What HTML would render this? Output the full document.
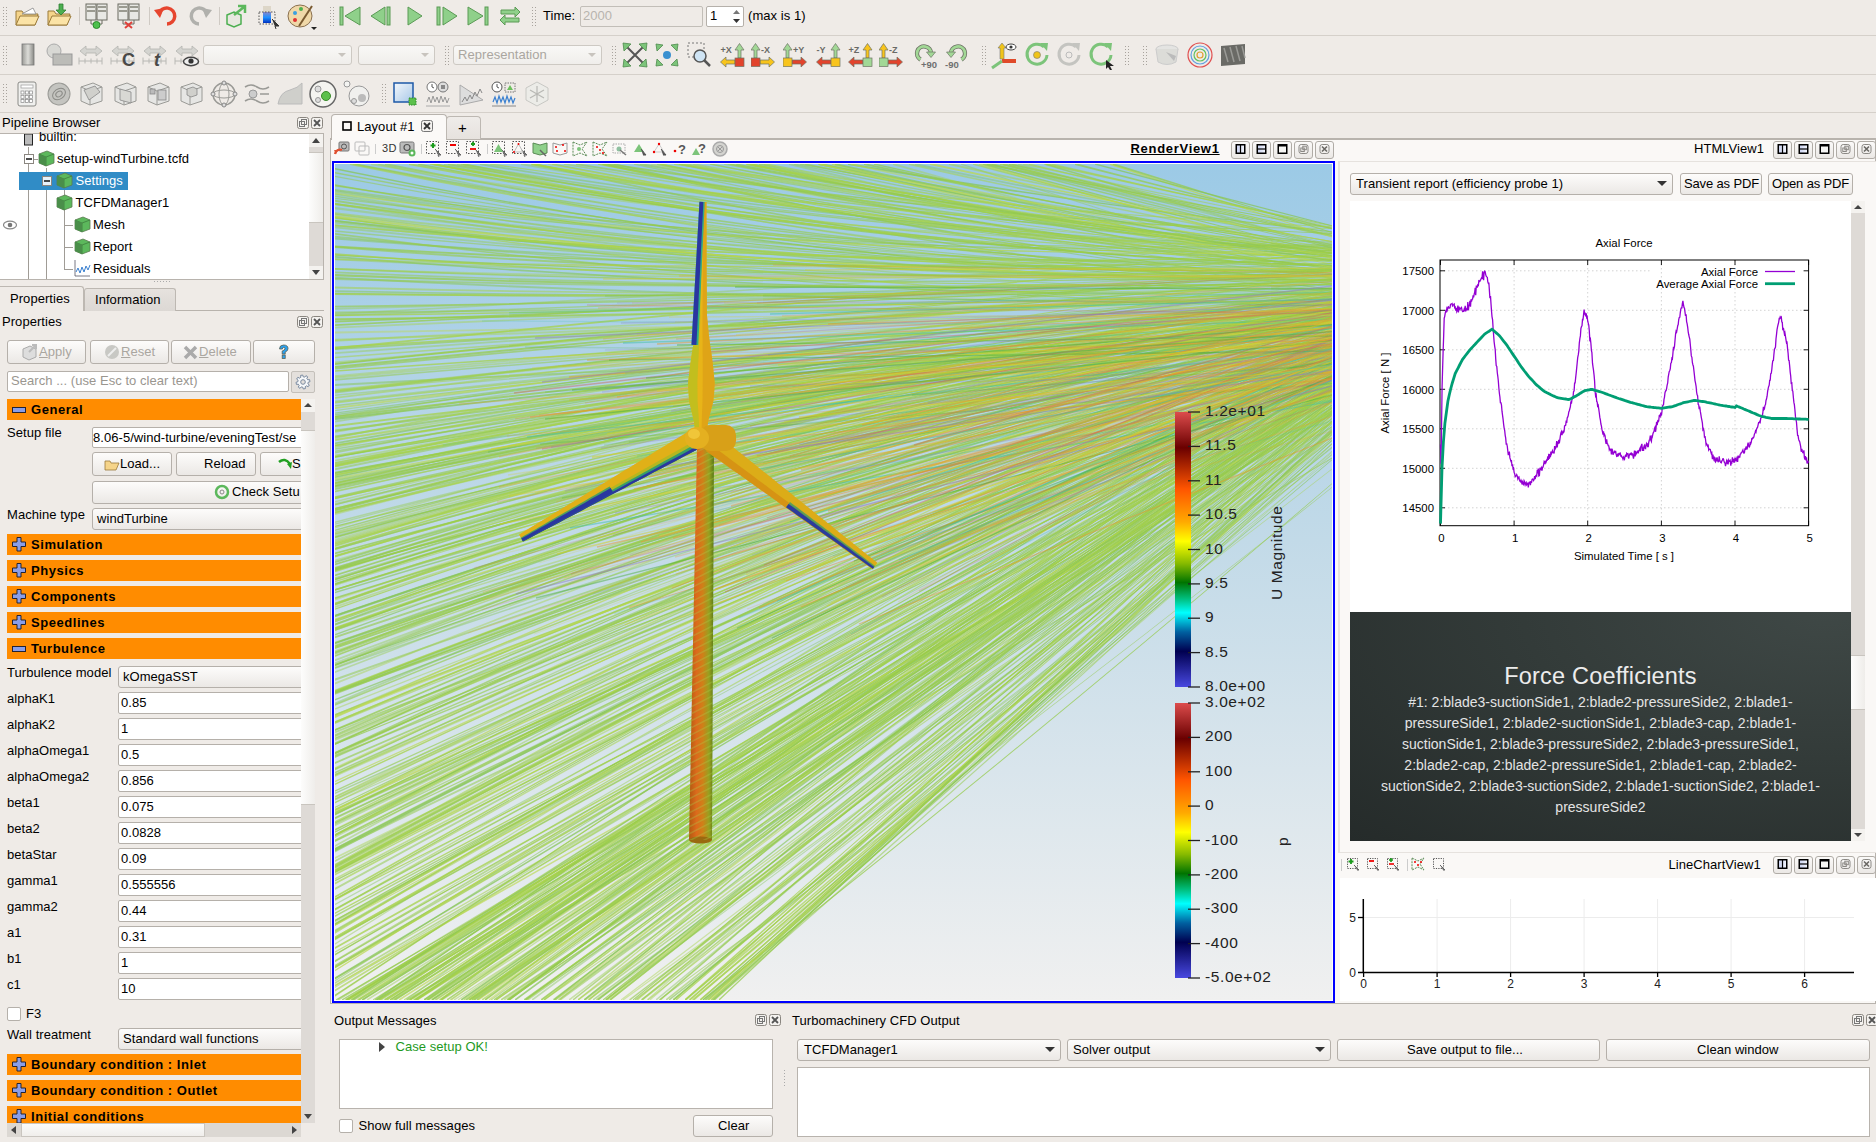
<!DOCTYPE html><html><head><meta charset="utf-8"><style>
html,body{margin:0;padding:0;}
body{width:1876px;height:1142px;position:relative;overflow:hidden;background:#efebe7;font-family:"Liberation Sans",sans-serif;}
.t{position:absolute;white-space:nowrap;line-height:1.2;font-family:"Liberation Sans",sans-serif;}
svg{display:block;}
</style></head><body>

<div style="position:absolute;left:0px;top:35px;width:1876px;height:1px;background:#d5d0ca;"></div>
<div style="position:absolute;left:0px;top:74px;width:1876px;height:1px;background:#d5d0ca;"></div>
<div style="position:absolute;left:0px;top:112px;width:1876px;height:1px;background:#d5d0ca;"></div>
<svg style="position:absolute;left:13px;top:3px;" width="28" height="26" viewBox="0 0 28 26"><path d="M3 8 L3 22 L22 22 L25 11 L11 11 L9 8 Z" fill="#f5d48a" stroke="#9a7a3a" stroke-width="1"/><path d="M7 13 L26 13 L22 22 L3 22 Z" fill="#fbe3a6" stroke="#9a7a3a" stroke-width="1"/><path d="M9 11 L20 5 L23 11 Z" fill="#fff" stroke="#888" stroke-width="0.8"/></svg>
<svg style="position:absolute;left:45px;top:3px;" width="28" height="26" viewBox="0 0 28 26"><path d="M3 8 L3 22 L22 22 L25 11 L11 11 L9 8 Z" fill="#f5d48a" stroke="#9a7a3a" stroke-width="1"/><path d="M7 13 L26 13 L22 22 L3 22 Z" fill="#fbe3a6" stroke="#9a7a3a" stroke-width="1"/><path d="M14 1 L14 7 L11 7 L16 12 L21 7 L18 7 L18 1 Z" fill="#4caf50" stroke="#2e7d32" stroke-width="0.8"/></svg>
<svg style="position:absolute;left:3px;top:6px;" width="4" height="20" viewBox="0 0 4 20"><rect x="0" y="1" width="1" height="1" fill="#a8a39d"/><rect x="0" y="4" width="1" height="1" fill="#a8a39d"/><rect x="0" y="7" width="1" height="1" fill="#a8a39d"/><rect x="0" y="10" width="1" height="1" fill="#a8a39d"/><rect x="0" y="13" width="1" height="1" fill="#a8a39d"/><rect x="0" y="16" width="1" height="1" fill="#a8a39d"/><rect x="0" y="19" width="1" height="1" fill="#a8a39d"/><rect x="3" y="1" width="1" height="1" fill="#a8a39d"/><rect x="3" y="4" width="1" height="1" fill="#a8a39d"/><rect x="3" y="7" width="1" height="1" fill="#a8a39d"/><rect x="3" y="10" width="1" height="1" fill="#a8a39d"/><rect x="3" y="13" width="1" height="1" fill="#a8a39d"/><rect x="3" y="16" width="1" height="1" fill="#a8a39d"/><rect x="3" y="19" width="1" height="1" fill="#a8a39d"/></svg>
<div style="position:absolute;left:79px;top:7px;width:1px;height:18px;background:#cfcac4;"></div>
<svg style="position:absolute;left:83px;top:2px;" width="28" height="28" viewBox="0 0 28 28"><rect x="3" y="2" width="10" height="16" fill="#e8e8e4" stroke="#6a6a60" stroke-width="1"/><rect x="4" y="4" width="8" height="2" fill="#9a9a90"/><rect x="4" y="8" width="8" height="2" fill="#9a9a90"/><rect x="14" y="2" width="10" height="16" fill="#e8e8e4" stroke="#6a6a60" stroke-width="1"/><rect x="15" y="4" width="8" height="2" fill="#9a9a90"/><rect x="15" y="8" width="8" height="2" fill="#9a9a90"/><path d="M8 18 L8 22 L19 22 L19 18" fill="none" stroke="#6a6a60"/><circle cx="13.5" cy="23" r="3.5" fill="#4cc04c" stroke="#2a8a2a"/></svg>
<svg style="position:absolute;left:115px;top:2px;" width="28" height="28" viewBox="0 0 28 28"><rect x="3" y="2" width="10" height="16" fill="#e8e8e4" stroke="#6a6a60" stroke-width="1"/><rect x="4" y="4" width="8" height="2" fill="#9a9a90"/><rect x="4" y="8" width="8" height="2" fill="#9a9a90"/><rect x="14" y="2" width="10" height="16" fill="#e8e8e4" stroke="#6a6a60" stroke-width="1"/><rect x="15" y="4" width="8" height="2" fill="#9a9a90"/><rect x="15" y="8" width="8" height="2" fill="#9a9a90"/><path d="M8 18 L8 22 L19 22 L19 18" fill="none" stroke="#6a6a60"/><path d="M10 20 L17 26 M17 20 L10 26" stroke="#e0403a" stroke-width="2"/></svg>
<div style="position:absolute;left:149px;top:7px;width:1px;height:18px;background:#cfcac4;"></div>
<svg style="position:absolute;left:153px;top:2px;" width="28" height="28" viewBox="0 0 28 28"><g><path d="M6 12 A8 8 0 1 1 14 22" fill="none" stroke="#e6452f" stroke-width="3.5"/><path d="M1 8 L11 6 L7 16 Z" fill="#e6452f"/></g></svg>
<svg style="position:absolute;left:185px;top:2px;" width="28" height="28" viewBox="0 0 28 28"><g transform="translate(28,0) scale(-1,1)"><path d="M6 12 A8 8 0 1 1 14 22" fill="none" stroke="#b0b0ac" stroke-width="3.5"/><path d="M1 8 L11 6 L7 16 Z" fill="#b0b0ac"/></g></svg>
<div style="position:absolute;left:219px;top:7px;width:1px;height:18px;background:#cfcac4;"></div>
<svg style="position:absolute;left:222px;top:3px;" width="28" height="26" viewBox="0 0 28 26"><path d="M5 12 L12 9 L19 12 L19 21 L12 24 L5 21 Z" fill="#e8e8e0" stroke="#4caf50" stroke-width="1.5"/><path d="M12 12 L22 4 M16 3 L23 3 L23 10" fill="none" stroke="#5cb85c" stroke-width="2.5"/></svg>
<svg style="position:absolute;left:254px;top:3px;" width="28" height="26" viewBox="0 0 28 26"><rect x="9" y="3" width="8" height="6" fill="#ddd6c8"/><rect x="9" y="9" width="8" height="11" fill="url(#cm)"/><defs><linearGradient id="cm" x1="0" y1="0" x2="0" y2="1"><stop offset="0" stop-color="#88c"/><stop offset="0.5" stop-color="#1e90ff"/><stop offset="1" stop-color="#0030c0"/></linearGradient></defs><rect x="5" y="9" width="16" height="12" fill="none" stroke="#555" stroke-dasharray="1.5,1.5"/><path d="M18 16 L25 23 L21 23 L22 26" fill="#333" stroke="#333"/></svg>
<svg style="position:absolute;left:286px;top:2px;" width="32" height="28" viewBox="0 0 32 28"><ellipse cx="14" cy="14" rx="12" ry="11" fill="#f0d8a8" stroke="#8a7050"/><circle cx="9" cy="11" r="2" fill="#3aa0e0"/><circle cx="15" cy="7" r="2" fill="#4cb050"/><circle cx="9" cy="18" r="2" fill="#e03030"/><path d="M13 24 L26 4" stroke="#7a5a30" stroke-width="2"/><path d="M25 25 L31 25 L28 28 Z" fill="#222"/></svg>
<svg style="position:absolute;left:330px;top:6px;" width="4" height="20" viewBox="0 0 4 20"><rect x="0" y="1" width="1" height="1" fill="#a8a39d"/><rect x="0" y="4" width="1" height="1" fill="#a8a39d"/><rect x="0" y="7" width="1" height="1" fill="#a8a39d"/><rect x="0" y="10" width="1" height="1" fill="#a8a39d"/><rect x="0" y="13" width="1" height="1" fill="#a8a39d"/><rect x="0" y="16" width="1" height="1" fill="#a8a39d"/><rect x="0" y="19" width="1" height="1" fill="#a8a39d"/><rect x="3" y="1" width="1" height="1" fill="#a8a39d"/><rect x="3" y="4" width="1" height="1" fill="#a8a39d"/><rect x="3" y="7" width="1" height="1" fill="#a8a39d"/><rect x="3" y="10" width="1" height="1" fill="#a8a39d"/><rect x="3" y="13" width="1" height="1" fill="#a8a39d"/><rect x="3" y="16" width="1" height="1" fill="#a8a39d"/><rect x="3" y="19" width="1" height="1" fill="#a8a39d"/></svg>
<svg style="position:absolute;left:336px;top:2px;" width="28" height="28" viewBox="0 0 28 28"><rect x="4" y="5" width="3" height="18" fill="#8fd08a" stroke="#5a9a55"/><path d="M24 5 L9 14 L24 23 Z" fill="#8fd08a" stroke="#5a9a55"/></svg>
<svg style="position:absolute;left:368px;top:2px;" width="28" height="28" viewBox="0 0 28 28"><path d="M17 5 L3 14 L17 23 Z" fill="#8fd08a" stroke="#5a9a55"/><rect x="19" y="5" width="3" height="18" fill="#8fd08a" stroke="#5a9a55"/></svg>
<svg style="position:absolute;left:400px;top:2px;" width="28" height="28" viewBox="0 0 28 28"><path d="M8 5 L22 14 L8 23 Z" fill="#8fd08a" stroke="#5a9a55"/></svg>
<svg style="position:absolute;left:432px;top:2px;" width="28" height="28" viewBox="0 0 28 28"><rect x="5" y="5" width="3" height="18" fill="#8fd08a" stroke="#5a9a55"/><path d="M11 5 L25 14 L11 23 Z" fill="#8fd08a" stroke="#5a9a55"/></svg>
<svg style="position:absolute;left:464px;top:2px;" width="28" height="28" viewBox="0 0 28 28"><path d="M4 5 L19 14 L4 23 Z" fill="#8fd08a" stroke="#5a9a55"/><rect x="21" y="5" width="3" height="18" fill="#8fd08a" stroke="#5a9a55"/></svg>
<svg style="position:absolute;left:496px;top:2px;" width="28" height="28" viewBox="0 0 28 28"><path d="M5 12 L5 8 L19 8 L19 5 L24 10 L19 15 L19 12 L9 12 Z M23 16 L23 20 L9 20 L9 23 L4 18 L9 13 L9 16 L19 16 Z" fill="#8fd08a" stroke="#5a9a55"/></svg>
<svg style="position:absolute;left:532px;top:6px;" width="4" height="20" viewBox="0 0 4 20"><rect x="0" y="1" width="1" height="1" fill="#a8a39d"/><rect x="0" y="4" width="1" height="1" fill="#a8a39d"/><rect x="0" y="7" width="1" height="1" fill="#a8a39d"/><rect x="0" y="10" width="1" height="1" fill="#a8a39d"/><rect x="0" y="13" width="1" height="1" fill="#a8a39d"/><rect x="0" y="16" width="1" height="1" fill="#a8a39d"/><rect x="0" y="19" width="1" height="1" fill="#a8a39d"/><rect x="3" y="1" width="1" height="1" fill="#a8a39d"/><rect x="3" y="4" width="1" height="1" fill="#a8a39d"/><rect x="3" y="7" width="1" height="1" fill="#a8a39d"/><rect x="3" y="10" width="1" height="1" fill="#a8a39d"/><rect x="3" y="13" width="1" height="1" fill="#a8a39d"/><rect x="3" y="16" width="1" height="1" fill="#a8a39d"/><rect x="3" y="19" width="1" height="1" fill="#a8a39d"/></svg>
<div class="t" style="left:543px;top:8.2px;font-size:13px;color:#000;font-weight:normal;letter-spacing:0.05px;">Time:</div>
<div style="position:absolute;left:580px;top:6px;width:123px;height:21px;box-sizing:border-box;border:1px solid #c2beb8;border-radius:2px;background:#efebe7;"></div>
<div class="t" style="left:583px;top:8.2px;font-size:13px;color:#b8b4ae;font-weight:normal;letter-spacing:0.05px;">2000</div>
<div style="position:absolute;left:706px;top:6px;width:38px;height:21px;box-sizing:border-box;border:1px solid #b5b0aa;border-radius:2px;background:#fff;"></div>
<div class="t" style="left:710px;top:8.2px;font-size:13px;color:#000;font-weight:normal;letter-spacing:0.05px;">1</div>
<svg style="position:absolute;left:731px;top:8px;" width="11" height="17" viewBox="0 0 11 17"><path d="M2 6 L5.5 2 L9 6 Z" fill="#777"/><path d="M2 11 L5.5 15 L9 11 Z" fill="#333"/></svg>
<div class="t" style="left:748px;top:8.2px;font-size:13px;color:#000;font-weight:normal;letter-spacing:0.05px;">(max is 1)</div>
<svg style="position:absolute;left:3px;top:45px;" width="4" height="20" viewBox="0 0 4 20"><rect x="0" y="1" width="1" height="1" fill="#a8a39d"/><rect x="0" y="4" width="1" height="1" fill="#a8a39d"/><rect x="0" y="7" width="1" height="1" fill="#a8a39d"/><rect x="0" y="10" width="1" height="1" fill="#a8a39d"/><rect x="0" y="13" width="1" height="1" fill="#a8a39d"/><rect x="0" y="16" width="1" height="1" fill="#a8a39d"/><rect x="0" y="19" width="1" height="1" fill="#a8a39d"/><rect x="3" y="1" width="1" height="1" fill="#a8a39d"/><rect x="3" y="4" width="1" height="1" fill="#a8a39d"/><rect x="3" y="7" width="1" height="1" fill="#a8a39d"/><rect x="3" y="10" width="1" height="1" fill="#a8a39d"/><rect x="3" y="13" width="1" height="1" fill="#a8a39d"/><rect x="3" y="16" width="1" height="1" fill="#a8a39d"/><rect x="3" y="19" width="1" height="1" fill="#a8a39d"/></svg>
<svg style="position:absolute;left:20px;top:42px;" width="16" height="26" viewBox="0 0 16 26"><defs><linearGradient id="gb" x1="0" x2="1"><stop offset="0" stop-color="#9a9a96"/><stop offset="0.5" stop-color="#dcdcd8"/><stop offset="1" stop-color="#8a8a86"/></linearGradient></defs><rect x="2" y="2" width="12" height="21" fill="url(#gb)" stroke="#777" stroke-width="0.8"/></svg>
<svg style="position:absolute;left:45px;top:42px;" width="28" height="26" viewBox="0 0 28 26"><circle cx="9" cy="9" r="7" fill="#d8d8d4" stroke="#aaa"/><rect x="8" y="12" width="19" height="11" fill="#bcbcb8" stroke="#999"/></svg>
<svg style="position:absolute;left:77px;top:42px;" width="28" height="26" viewBox="0 0 28 26"><path d="M3 9 L9 4 L9 7 L19 7 L19 4 L25 9 L19 14 L19 11 L9 11 L9 14 Z" fill="#d4d4d0" stroke="#b4b4b0" stroke-width="0.8"/><path d="M2 19 L25 19 M2 15.5 L2 22.5 M8 16.5 L8 21.5 M14 16.5 L14 21.5 M20 16.5 L20 21.5 M25 15.5 L25 22.5" stroke="#b8b8b4" stroke-width="1"/></svg>
<svg style="position:absolute;left:109px;top:42px;" width="28" height="26" viewBox="0 0 28 26"><path d="M3 9 L9 4 L9 7 L19 7 L19 4 L25 9 L19 14 L19 11 L9 11 L9 14 Z" fill="#d4d4d0" stroke="#b4b4b0" stroke-width="0.8"/><path d="M2 19 L25 19 M2 15.5 L2 22.5 M8 16.5 L8 21.5 M14 16.5 L14 21.5 M20 16.5 L20 21.5 M25 15.5 L25 22.5" stroke="#b8b8b4" stroke-width="1"/><text x="13" y="24" font-family="Liberation Sans" font-weight="bold" font-size="18" fill="#4a4a48">C</text></svg>
<svg style="position:absolute;left:141px;top:42px;" width="28" height="26" viewBox="0 0 28 26"><path d="M3 9 L9 4 L9 7 L19 7 L19 4 L25 9 L19 14 L19 11 L9 11 L9 14 Z" fill="#d4d4d0" stroke="#b4b4b0" stroke-width="0.8"/><path d="M2 19 L25 19 M2 15.5 L2 22.5 M8 16.5 L8 21.5 M14 16.5 L14 21.5 M20 16.5 L20 21.5 M25 15.5 L25 22.5" stroke="#b8b8b4" stroke-width="1"/><text x="13" y="24" font-family="Liberation Sans" font-weight="bold" font-style="italic" font-size="18" fill="#4a4a48">t</text></svg>
<svg style="position:absolute;left:173px;top:42px;" width="28" height="26" viewBox="0 0 28 26"><path d="M3 9 L9 4 L9 7 L19 7 L19 4 L25 9 L19 14 L19 11 L9 11 L9 14 Z" fill="#d4d4d0" stroke="#b4b4b0" stroke-width="0.8"/><path d="M2 19 L25 19 M2 15.5 L2 22.5 M8 16.5 L8 21.5 M14 16.5 L14 21.5 M20 16.5 L20 21.5 M25 15.5 L25 22.5" stroke="#b8b8b4" stroke-width="1"/><ellipse cx="18" cy="19.5" rx="7.5" ry="4.2" fill="#eee" stroke="#444" stroke-width="1.5"/><circle cx="18" cy="19" r="2.6" fill="#333"/></svg>
<div style="position:absolute;left:203px;top:45px;width:149px;height:20px;box-sizing:border-box;border:1px solid #cdc9c3;border-radius:3px;background:linear-gradient(#f9f8f6,#f0eeeb);"></div>
<svg style="position:absolute;left:337px;top:52px;" width="10" height="6" viewBox="0 0 10 6"><path d="M1 1 L5 5 L9 1 Z" fill="#c8c4be"/></svg>
<div style="position:absolute;left:358px;top:45px;width:77px;height:20px;box-sizing:border-box;border:1px solid #cdc9c3;border-radius:3px;background:linear-gradient(#f9f8f6,#f0eeeb);"></div>
<svg style="position:absolute;left:420px;top:52px;" width="10" height="6" viewBox="0 0 10 6"><path d="M1 1 L5 5 L9 1 Z" fill="#c8c4be"/></svg>
<svg style="position:absolute;left:445px;top:45px;" width="4" height="20" viewBox="0 0 4 20"><rect x="0" y="1" width="1" height="1" fill="#a8a39d"/><rect x="0" y="4" width="1" height="1" fill="#a8a39d"/><rect x="0" y="7" width="1" height="1" fill="#a8a39d"/><rect x="0" y="10" width="1" height="1" fill="#a8a39d"/><rect x="0" y="13" width="1" height="1" fill="#a8a39d"/><rect x="0" y="16" width="1" height="1" fill="#a8a39d"/><rect x="0" y="19" width="1" height="1" fill="#a8a39d"/><rect x="3" y="1" width="1" height="1" fill="#a8a39d"/><rect x="3" y="4" width="1" height="1" fill="#a8a39d"/><rect x="3" y="7" width="1" height="1" fill="#a8a39d"/><rect x="3" y="10" width="1" height="1" fill="#a8a39d"/><rect x="3" y="13" width="1" height="1" fill="#a8a39d"/><rect x="3" y="16" width="1" height="1" fill="#a8a39d"/><rect x="3" y="19" width="1" height="1" fill="#a8a39d"/></svg>
<div style="position:absolute;left:453px;top:45px;width:149px;height:20px;box-sizing:border-box;border:1px solid #cdc9c3;border-radius:3px;background:linear-gradient(#f9f8f6,#f0eeeb);"></div>
<div class="t" style="left:458px;top:47.2px;font-size:13px;color:#aaa6a0;font-weight:normal;letter-spacing:0.05px;">Representation</div>
<svg style="position:absolute;left:587px;top:52px;" width="10" height="6" viewBox="0 0 10 6"><path d="M1 1 L5 5 L9 1 Z" fill="#c8c4be"/></svg>
<svg style="position:absolute;left:612px;top:45px;" width="4" height="20" viewBox="0 0 4 20"><rect x="0" y="1" width="1" height="1" fill="#a8a39d"/><rect x="0" y="4" width="1" height="1" fill="#a8a39d"/><rect x="0" y="7" width="1" height="1" fill="#a8a39d"/><rect x="0" y="10" width="1" height="1" fill="#a8a39d"/><rect x="0" y="13" width="1" height="1" fill="#a8a39d"/><rect x="0" y="16" width="1" height="1" fill="#a8a39d"/><rect x="0" y="19" width="1" height="1" fill="#a8a39d"/><rect x="3" y="1" width="1" height="1" fill="#a8a39d"/><rect x="3" y="4" width="1" height="1" fill="#a8a39d"/><rect x="3" y="7" width="1" height="1" fill="#a8a39d"/><rect x="3" y="10" width="1" height="1" fill="#a8a39d"/><rect x="3" y="13" width="1" height="1" fill="#a8a39d"/><rect x="3" y="16" width="1" height="1" fill="#a8a39d"/><rect x="3" y="19" width="1" height="1" fill="#a8a39d"/></svg>
<svg style="position:absolute;left:621px;top:41px;" width="28" height="28" viewBox="0 0 28 28"><path d="M5 5 L23 23 M23 5 L5 23" stroke="#555" stroke-width="2"/><path d="M2 2 L10 3 L3 10 Z M26 2 L18 3 L25 10 Z M2 26 L10 25 L3 18 Z M26 26 L18 25 L25 18 Z" fill="#7cc47a" stroke="#4e8a4c" stroke-width="0.8"/></svg>
<svg style="position:absolute;left:653px;top:41px;" width="28" height="28" viewBox="0 0 28 28"><circle cx="14" cy="14" r="4" fill="#3a90d0"/><path d="M3 3 L10 4 L4 10 Z M25 3 L18 4 L24 10 Z M3 25 L10 24 L4 18 Z M25 25 L18 24 L24 18 Z" fill="#7cc47a" stroke="#4e8a4c" stroke-width="0.8"/></svg>
<svg style="position:absolute;left:686px;top:41px;" width="28" height="28" viewBox="0 0 28 28"><rect x="2" y="2" width="16" height="14" fill="none" stroke="#777" stroke-dasharray="2,2"/><circle cx="14" cy="15" r="6" fill="#cfe4f4" stroke="#555" stroke-width="1.5"/><path d="M18 19 L24 25" stroke="#555" stroke-width="2.5"/></svg>
<svg style="position:absolute;left:720px;top:43px;" width="25" height="25" viewBox="0 0 25 25"><path d="M18 15 L18 7 L15 7 L19.5 0.5 L24 7 L21 7 L21 15 Z" fill="#a2d896" stroke="#6e7466" stroke-width="0.7"/><path d="M15 17 L6 17 L6 14 L0.5 19 L6 24 L6 21 L15 21 Z" fill="#f8c41c" stroke="#6e7466" stroke-width="0.7"/><rect x="15" y="15" width="9" height="8.5" fill="#e2432c" stroke="#6e7466" stroke-width="0.7"/><text x="0.5" y="10" font-family="Liberation Sans" font-weight="bold" font-size="9" fill="#6a6a66">+X</text></svg>
<svg style="position:absolute;left:751px;top:43px;" width="25" height="25" viewBox="0 0 25 25"><path d="M3 15 L3 7 L0 7 L4.5 0.5 L9 7 L6 7 L6 15 Z" fill="#a2d896" stroke="#6e7466" stroke-width="0.7"/><path d="M9 17 L18 17 L18 14 L23.5 19 L18 24 L18 21 L9 21 Z" fill="#f8c41c" stroke="#6e7466" stroke-width="0.7"/><rect x="0" y="15" width="9" height="8.5" fill="#e2432c" stroke="#6e7466" stroke-width="0.7"/><text x="10" y="10" font-family="Liberation Sans" font-weight="bold" font-size="9" fill="#6a6a66">-X</text></svg>
<svg style="position:absolute;left:783px;top:43px;" width="25" height="25" viewBox="0 0 25 25"><path d="M3 15 L3 7 L0 7 L4.5 0.5 L9 7 L6 7 L6 15 Z" fill="#a2d896" stroke="#6e7466" stroke-width="0.7"/><path d="M9 17 L18 17 L18 14 L23.5 19 L18 24 L18 21 L9 21 Z" fill="#e2432c" stroke="#6e7466" stroke-width="0.7"/><rect x="0" y="15" width="9" height="8.5" fill="#f8c41c" stroke="#6e7466" stroke-width="0.7"/><text x="10" y="10" font-family="Liberation Sans" font-weight="bold" font-size="9" fill="#6a6a66">+Y</text></svg>
<svg style="position:absolute;left:816px;top:43px;" width="25" height="25" viewBox="0 0 25 25"><path d="M18 15 L18 7 L15 7 L19.5 0.5 L24 7 L21 7 L21 15 Z" fill="#a2d896" stroke="#6e7466" stroke-width="0.7"/><path d="M15 17 L6 17 L6 14 L0.5 19 L6 24 L6 21 L15 21 Z" fill="#e2432c" stroke="#6e7466" stroke-width="0.7"/><rect x="15" y="15" width="9" height="8.5" fill="#f8c41c" stroke="#6e7466" stroke-width="0.7"/><text x="0.5" y="10" font-family="Liberation Sans" font-weight="bold" font-size="9" fill="#6a6a66">-Y</text></svg>
<svg style="position:absolute;left:848px;top:43px;" width="25" height="25" viewBox="0 0 25 25"><path d="M18 15 L18 7 L15 7 L19.5 0.5 L24 7 L21 7 L21 15 Z" fill="#f8c41c" stroke="#6e7466" stroke-width="0.7"/><path d="M15 17 L6 17 L6 14 L0.5 19 L6 24 L6 21 L15 21 Z" fill="#e2432c" stroke="#6e7466" stroke-width="0.7"/><rect x="15" y="15" width="9" height="8.5" fill="#a2d896" stroke="#6e7466" stroke-width="0.7"/><text x="0.5" y="10" font-family="Liberation Sans" font-weight="bold" font-size="9" fill="#6a6a66">+Z</text></svg>
<svg style="position:absolute;left:879px;top:43px;" width="25" height="25" viewBox="0 0 25 25"><path d="M3 15 L3 7 L0 7 L4.5 0.5 L9 7 L6 7 L6 15 Z" fill="#f8c41c" stroke="#6e7466" stroke-width="0.7"/><path d="M9 17 L18 17 L18 14 L23.5 19 L18 24 L18 21 L9 21 Z" fill="#e2432c" stroke="#6e7466" stroke-width="0.7"/><rect x="0" y="15" width="9" height="8.5" fill="#a2d896" stroke="#6e7466" stroke-width="0.7"/><text x="10" y="10" font-family="Liberation Sans" font-weight="bold" font-size="9" fill="#6a6a66">-Z</text></svg>
<svg style="position:absolute;left:910px;top:41px;" width="30" height="28" viewBox="0 0 30 28"><g><path d="M10.5 18.5 A7 7 0 1 1 21 12.5" fill="none" stroke="#6e7466" stroke-width="4.4"/><path d="M10.5 18.5 A7 7 0 1 1 21 12.5" fill="none" stroke="#a2d896" stroke-width="2.8"/><path d="M16.5 11 L25.5 11 L21 16.5 Z" fill="#a2d896" stroke="#6e7466" stroke-width="0.7"/></g><text x="11" y="26.5" font-family="Liberation Sans" font-weight="bold" font-size="9.5" fill="#707070">+90</text></svg>
<svg style="position:absolute;left:942px;top:41px;" width="30" height="28" viewBox="0 0 30 28"><g transform="translate(30,0) scale(-1,1)"><path d="M10.5 18.5 A7 7 0 1 1 21 12.5" fill="none" stroke="#6e7466" stroke-width="4.4"/><path d="M10.5 18.5 A7 7 0 1 1 21 12.5" fill="none" stroke="#a2d896" stroke-width="2.8"/><path d="M16.5 11 L25.5 11 L21 16.5 Z" fill="#a2d896" stroke="#6e7466" stroke-width="0.7"/></g><text x="3" y="26.5" font-family="Liberation Sans" font-weight="bold" font-size="9.5" fill="#707070">-90</text></svg>
<svg style="position:absolute;left:982px;top:45px;" width="4" height="20" viewBox="0 0 4 20"><rect x="0" y="1" width="1" height="1" fill="#a8a39d"/><rect x="0" y="4" width="1" height="1" fill="#a8a39d"/><rect x="0" y="7" width="1" height="1" fill="#a8a39d"/><rect x="0" y="10" width="1" height="1" fill="#a8a39d"/><rect x="0" y="13" width="1" height="1" fill="#a8a39d"/><rect x="0" y="16" width="1" height="1" fill="#a8a39d"/><rect x="0" y="19" width="1" height="1" fill="#a8a39d"/><rect x="3" y="1" width="1" height="1" fill="#a8a39d"/><rect x="3" y="4" width="1" height="1" fill="#a8a39d"/><rect x="3" y="7" width="1" height="1" fill="#a8a39d"/><rect x="3" y="10" width="1" height="1" fill="#a8a39d"/><rect x="3" y="13" width="1" height="1" fill="#a8a39d"/><rect x="3" y="16" width="1" height="1" fill="#a8a39d"/><rect x="3" y="19" width="1" height="1" fill="#a8a39d"/></svg>
<svg style="position:absolute;left:988px;top:39px;" width="32" height="32" viewBox="0 0 32 32"><path d="M14 4 L18 9 L16 9 L16 20 L12 20 L12 9 L10 9 Z" fill="#f0c419" stroke="#777" stroke-width="0.6"/><path d="M14 20 L28 20 L28 24 L14 24 Z" fill="#e04a2a"/><path d="M14 22 L4 29" stroke="#7cc47a" stroke-width="3"/><ellipse cx="23" cy="8" rx="5" ry="3" fill="#fff" stroke="#444"/><circle cx="23" cy="8" r="1.6" fill="#333"/></svg>
<svg style="position:absolute;left:1022px;top:40px;" width="30" height="30" viewBox="0 0 30 30"><path d="M22 7 A10 10 0 1 0 25 15" fill="none" stroke="#7cc47a" stroke-width="3"/><path d="M18 3 L26 3 L25 11 Z" fill="#7cc47a"/><circle cx="15" cy="15" r="3.5" fill="#f0c419" stroke="#777" stroke-width="0.6"/></svg>
<svg style="position:absolute;left:1054px;top:40px;" width="30" height="30" viewBox="0 0 30 30"><path d="M22 7 A10 10 0 1 0 25 15" fill="none" stroke="#c4c4c0" stroke-width="3"/><path d="M18 3 L26 3 L25 11 Z" fill="#c4c4c0"/><circle cx="15" cy="15" r="3" fill="none" stroke="#bbb"/></svg>
<svg style="position:absolute;left:1086px;top:40px;" width="30" height="30" viewBox="0 0 30 30"><path d="M22 7 A10 10 0 1 0 25 15" fill="none" stroke="#7cc47a" stroke-width="3"/><path d="M18 3 L26 3 L25 11 Z" fill="#7cc47a"/><path d="M20 20 L28 26 L24 26 L26 30 L24 30 L22 27 L20 29 Z" fill="#222"/></svg>
<svg style="position:absolute;left:1125px;top:45px;" width="4" height="20" viewBox="0 0 4 20"><rect x="0" y="1" width="1" height="1" fill="#a8a39d"/><rect x="0" y="4" width="1" height="1" fill="#a8a39d"/><rect x="0" y="7" width="1" height="1" fill="#a8a39d"/><rect x="0" y="10" width="1" height="1" fill="#a8a39d"/><rect x="0" y="13" width="1" height="1" fill="#a8a39d"/><rect x="0" y="16" width="1" height="1" fill="#a8a39d"/><rect x="0" y="19" width="1" height="1" fill="#a8a39d"/><rect x="3" y="1" width="1" height="1" fill="#a8a39d"/><rect x="3" y="4" width="1" height="1" fill="#a8a39d"/><rect x="3" y="7" width="1" height="1" fill="#a8a39d"/><rect x="3" y="10" width="1" height="1" fill="#a8a39d"/><rect x="3" y="13" width="1" height="1" fill="#a8a39d"/><rect x="3" y="16" width="1" height="1" fill="#a8a39d"/><rect x="3" y="19" width="1" height="1" fill="#a8a39d"/></svg>
<svg style="position:absolute;left:1143px;top:45px;" width="4" height="20" viewBox="0 0 4 20"><rect x="0" y="1" width="1" height="1" fill="#a8a39d"/><rect x="0" y="4" width="1" height="1" fill="#a8a39d"/><rect x="0" y="7" width="1" height="1" fill="#a8a39d"/><rect x="0" y="10" width="1" height="1" fill="#a8a39d"/><rect x="0" y="13" width="1" height="1" fill="#a8a39d"/><rect x="0" y="16" width="1" height="1" fill="#a8a39d"/><rect x="0" y="19" width="1" height="1" fill="#a8a39d"/><rect x="3" y="1" width="1" height="1" fill="#a8a39d"/><rect x="3" y="4" width="1" height="1" fill="#a8a39d"/><rect x="3" y="7" width="1" height="1" fill="#a8a39d"/><rect x="3" y="10" width="1" height="1" fill="#a8a39d"/><rect x="3" y="13" width="1" height="1" fill="#a8a39d"/><rect x="3" y="16" width="1" height="1" fill="#a8a39d"/><rect x="3" y="19" width="1" height="1" fill="#a8a39d"/></svg>
<svg style="position:absolute;left:1152px;top:40px;" width="30" height="30" viewBox="0 0 30 30"><ellipse cx="15" cy="9" rx="11" ry="4" fill="#e4e4e2" stroke="#ccc"/><path d="M4 9 L6 22 Q15 27 24 22 L26 9" fill="#dcdcd8" stroke="#ccc"/><path d="M14 12 L24 16 L22 21 Z" fill="#bbb"/></svg>
<svg style="position:absolute;left:1185px;top:40px;" width="30" height="30" viewBox="0 0 30 30"><circle cx="15" cy="15" r="12" fill="none" stroke="#e05050" stroke-width="1.2"/><circle cx="15" cy="15" r="9" fill="none" stroke="#60a0e0" stroke-width="1.2"/><circle cx="15" cy="15" r="6" fill="none" stroke="#60c060" stroke-width="1.2"/><circle cx="15" cy="15" r="3" fill="none" stroke="#e0a030" stroke-width="1.2"/></svg>
<svg style="position:absolute;left:1218px;top:40px;" width="30" height="30" viewBox="0 0 30 30"><path d="M3 6 L27 4 L27 24 L3 26 Z" fill="#6a6a66"/><path d="M6 8 L10 22 M12 7 L16 22 M18 6 L22 21 M24 6 L27 18" stroke="#9a9a96" stroke-width="1.5"/></svg>
<svg style="position:absolute;left:3px;top:83px;" width="4" height="20" viewBox="0 0 4 20"><rect x="0" y="1" width="1" height="1" fill="#a8a39d"/><rect x="0" y="4" width="1" height="1" fill="#a8a39d"/><rect x="0" y="7" width="1" height="1" fill="#a8a39d"/><rect x="0" y="10" width="1" height="1" fill="#a8a39d"/><rect x="0" y="13" width="1" height="1" fill="#a8a39d"/><rect x="0" y="16" width="1" height="1" fill="#a8a39d"/><rect x="0" y="19" width="1" height="1" fill="#a8a39d"/><rect x="3" y="1" width="1" height="1" fill="#a8a39d"/><rect x="3" y="4" width="1" height="1" fill="#a8a39d"/><rect x="3" y="7" width="1" height="1" fill="#a8a39d"/><rect x="3" y="10" width="1" height="1" fill="#a8a39d"/><rect x="3" y="13" width="1" height="1" fill="#a8a39d"/><rect x="3" y="16" width="1" height="1" fill="#a8a39d"/><rect x="3" y="19" width="1" height="1" fill="#a8a39d"/></svg>
<svg style="position:absolute;left:13px;top:80px;" width="28" height="28" viewBox="0 0 28 28"><rect x="5" y="2" width="18" height="24" rx="2" fill="#f0f0ee" stroke="#8a8a86"/><rect x="8" y="5" width="12" height="3" fill="#fff" stroke="#999" stroke-width="0.7"/><rect x="8.0" y="11.0" width="3" height="3" fill="#fff" stroke="#888" stroke-width="0.7"/><rect x="8.0" y="15.3" width="3" height="3" fill="#fff" stroke="#888" stroke-width="0.7"/><rect x="8.0" y="19.6" width="3" height="3" fill="#fff" stroke="#888" stroke-width="0.7"/><rect x="12.3" y="11.0" width="3" height="3" fill="#fff" stroke="#888" stroke-width="0.7"/><rect x="12.3" y="15.3" width="3" height="3" fill="#fff" stroke="#888" stroke-width="0.7"/><rect x="12.3" y="19.6" width="3" height="3" fill="#fff" stroke="#888" stroke-width="0.7"/><rect x="16.6" y="11.0" width="3" height="3" fill="#fff" stroke="#888" stroke-width="0.7"/><rect x="16.6" y="15.3" width="3" height="3" fill="#fff" stroke="#888" stroke-width="0.7"/><rect x="16.6" y="19.6" width="3" height="3" fill="#fff" stroke="#888" stroke-width="0.7"/></svg>
<svg style="position:absolute;left:45px;top:80px;" width="28" height="28" viewBox="0 0 28 28"><ellipse cx="14" cy="14" rx="11" ry="11" fill="#c4c4c0" stroke="#9a9a96" transform="rotate(-35 14 14)"/><ellipse cx="14" cy="14" rx="7" ry="5" fill="none" stroke="#8a8a86" transform="rotate(-35 14 14)"/><ellipse cx="14" cy="14" rx="3.5" ry="2.5" fill="none" stroke="#8a8a86" transform="rotate(-35 14 14)"/></svg>
<svg style="position:absolute;left:77px;top:80px;" width="28" height="28" viewBox="0 0 28 28"><path d="M4 7 L16 3 L25 7 L25 21 L13 25 L4 21 Z" fill="#e6e6e4" stroke="#9a9a96"/><path d="M4 7 L13 11 L25 7 M13 11 L13 25" fill="none" stroke="#9a9a96"/><path d="M7 10 L18 6 L23 12 L12 20 Z" fill="#d0d0cc" stroke="#888" stroke-width="0.8"/></svg>
<svg style="position:absolute;left:111px;top:80px;" width="28" height="28" viewBox="0 0 28 28"><path d="M4 7 L16 3 L25 7 L25 21 L13 25 L4 21 Z" fill="#e6e6e4" stroke="#9a9a96"/><path d="M4 7 L13 11 L25 7 M13 11 L13 25" fill="none" stroke="#9a9a96"/><path d="M9 9 L20 12 L20 23 L9 20 Z" fill="#d8d8d4" stroke="#888" stroke-width="0.8"/></svg>
<svg style="position:absolute;left:144px;top:80px;" width="28" height="28" viewBox="0 0 28 28"><path d="M4 7 L16 3 L25 7 L25 21 L13 25 L4 21 Z" fill="#e6e6e4" stroke="#9a9a96"/><path d="M4 7 L13 11 L25 7 M13 11 L13 25" fill="none" stroke="#9a9a96"/><rect x="14" y="10" width="8" height="10" fill="#ccc" stroke="#888" stroke-width="0.8"/><rect x="6" y="9" width="5" height="5" fill="#bbb" stroke="#888" stroke-width="0.8"/></svg>
<svg style="position:absolute;left:177px;top:80px;" width="28" height="28" viewBox="0 0 28 28"><path d="M4 7 L16 3 L25 7 L25 21 L13 25 L4 21 Z" fill="#e6e6e4" stroke="#9a9a96"/><path d="M4 7 L13 11 L25 7 M13 11 L13 25" fill="none" stroke="#9a9a96"/><path d="M10 9 L16 7 L20 9 L20 15 L14 17 L10 15 Z" fill="#d0d0cc" stroke="#888" stroke-width="0.8"/></svg>
<svg style="position:absolute;left:210px;top:80px;" width="28" height="28" viewBox="0 0 28 28"><circle cx="14" cy="14" r="11" fill="none" stroke="#9a9a96" stroke-width="1.5"/><ellipse cx="14" cy="14" rx="5" ry="11" fill="none" stroke="#9a9a96"/><ellipse cx="14" cy="14" rx="11" ry="4" fill="none" stroke="#9a9a96"/><circle cx="14" cy="3" r="2" fill="#ddd" stroke="#888"/><circle cx="3" cy="14" r="2" fill="#ddd" stroke="#888"/><circle cx="25" cy="14" r="2" fill="#ddd" stroke="#888"/><circle cx="14" cy="25" r="2" fill="#ddd" stroke="#888"/></svg>
<svg style="position:absolute;left:243px;top:80px;" width="28" height="28" viewBox="0 0 28 28"><path d="M2 7 Q8 3 14 7 T26 7 M2 21 Q8 17 14 21 T26 21 M17 14 L26 14" fill="none" stroke="#9a9a96" stroke-width="1.6"/><circle cx="10" cy="14" r="4" fill="#ccc" stroke="#999"/></svg>
<svg style="position:absolute;left:276px;top:80px;" width="28" height="28" viewBox="0 0 28 28"><path d="M2 24 Q4 12 14 10 Q22 8 26 3 L26 24 Z" fill="#cfcfcb" stroke="#bbb"/></svg>
<svg style="position:absolute;left:308px;top:79px;" width="30" height="30" viewBox="0 0 30 30"><circle cx="15" cy="15" r="13" fill="#f4f4f0" stroke="#666" stroke-width="1.5"/><circle cx="10" cy="10" r="3" fill="#ddd" stroke="#999"/><circle cx="18" cy="17" r="4.5" fill="#5cc04c" stroke="#3a8a2a"/><circle cx="10" cy="21" r="2.5" fill="#ddd" stroke="#999"/></svg>
<svg style="position:absolute;left:341px;top:79px;" width="30" height="30" viewBox="0 0 30 30"><circle cx="18" cy="17" r="10" fill="#f0f0ee" stroke="#999"/><circle cx="6" cy="5" r="3" fill="#f4f4f2" stroke="#999"/><circle cx="21" cy="19" r="4" fill="#bbb"/><circle cx="13" cy="22" r="2.5" fill="#ddd" stroke="#999"/></svg>
<svg style="position:absolute;left:382px;top:83px;" width="4" height="20" viewBox="0 0 4 20"><rect x="0" y="1" width="1" height="1" fill="#a8a39d"/><rect x="0" y="4" width="1" height="1" fill="#a8a39d"/><rect x="0" y="7" width="1" height="1" fill="#a8a39d"/><rect x="0" y="10" width="1" height="1" fill="#a8a39d"/><rect x="0" y="13" width="1" height="1" fill="#a8a39d"/><rect x="0" y="16" width="1" height="1" fill="#a8a39d"/><rect x="0" y="19" width="1" height="1" fill="#a8a39d"/><rect x="3" y="1" width="1" height="1" fill="#a8a39d"/><rect x="3" y="4" width="1" height="1" fill="#a8a39d"/><rect x="3" y="7" width="1" height="1" fill="#a8a39d"/><rect x="3" y="10" width="1" height="1" fill="#a8a39d"/><rect x="3" y="13" width="1" height="1" fill="#a8a39d"/><rect x="3" y="16" width="1" height="1" fill="#a8a39d"/><rect x="3" y="19" width="1" height="1" fill="#a8a39d"/></svg>
<svg style="position:absolute;left:391px;top:80px;" width="28" height="28" viewBox="0 0 28 28"><defs><linearGradient id="bq" x1="0" y1="0" x2="1" y2="1"><stop offset="0" stop-color="#f4f8fc"/><stop offset="1" stop-color="#a8c8e8"/></linearGradient></defs><rect x="3" y="3" width="19" height="19" fill="url(#bq)" stroke="#1e5aa8" stroke-width="1.5"/><rect x="18" y="18" width="7" height="7" fill="#5cc04c" stroke="#2a8a2a" stroke-dasharray="1.5,1"/></svg>
<svg style="position:absolute;left:424px;top:80px;" width="28" height="28" viewBox="0 0 28 28"><circle cx="8" cy="7" r="5" fill="#fff" stroke="#777"/><path d="M8 4 L8 7 L10 8" stroke="#555" fill="none"/><circle cx="19" cy="7" r="5" fill="#ddd" stroke="#777"/><rect x="17" y="5" width="4" height="4" fill="#888"/><path d="M3 22 L5 17 L7 23 L9 16 L11 22 L13 17 L15 23 L17 16 L19 22 L21 17 L23 23 L25 18" fill="none" stroke="#999" stroke-width="1"/><path d="M2 26 L26 26" stroke="#aaa"/></svg>
<svg style="position:absolute;left:457px;top:80px;" width="28" height="28" viewBox="0 0 28 28"><path d="M3 5 L3 25 L26 20 Z" fill="#ddd" stroke="#aaa"/><path d="M5 22 L8 17 L10 21 L13 15 L15 19 L18 12 L20 16 L23 9 L25 13" fill="none" stroke="#888" stroke-width="1"/></svg>
<svg style="position:absolute;left:490px;top:80px;" width="28" height="28" viewBox="0 0 28 28"><circle cx="7" cy="7" r="5" fill="#fff" stroke="#555"/><path d="M7 4 L7 7 L9 8" stroke="#555" fill="none"/><rect x="15" y="3" width="10" height="9" fill="none" stroke="#777" stroke-dasharray="1.5,1"/><path d="M17 10 L20 5 L23 10 Z" fill="#6cc05c"/><path d="M3 22 L5 17 L7 23 L9 16 L11 22 L13 17 L15 23 L17 16 L19 22 L21 17 L23 23 L25 18" fill="none" stroke="#3a80d0" stroke-width="1.2"/><path d="M2 26 L26 26" stroke="#888"/></svg>
<svg style="position:absolute;left:523px;top:80px;" width="28" height="28" viewBox="0 0 28 28"><path d="M14 2 L25 8 L25 20 L14 26 L3 20 L3 8 Z" fill="#ecece8" stroke="#c8c8c4"/><path d="M14 6 L14 22 M7 10 L21 18 M21 10 L7 18" stroke="#b8b8b4" stroke-width="1.2"/></svg>
<div class="t" style="left:2px;top:115.2px;font-size:13px;color:#000;font-weight:normal;letter-spacing:0.05px;">Pipeline Browser</div>
<svg style="position:absolute;left:297px;top:117px;" width="26" height="12" viewBox="0 0 26 12"><rect x="0.5" y="0.5" width="11" height="11" rx="2" fill="#f4f2ef" stroke="#8a8680"/><rect x="2.5" y="4.5" width="5" height="5" fill="none" stroke="#777"/><rect x="4.5" y="2.5" width="5" height="5" fill="none" stroke="#777"/><rect x="14.5" y="0.5" width="11" height="11" rx="2" fill="#f4f2ef" stroke="#8a8680"/><path d="M17 3 L23 9 M23 3 L17 9" stroke="#555" stroke-width="1.8"/></svg>
<div style="position:absolute;left:0px;top:133px;width:324px;height:147px;box-sizing:border-box;border:1px solid #b8b3ad;border-left:none;background:#fff;"></div>
<div style="position:absolute;left:309px;top:134px;width:14px;height:145px;background:#dedad6;"></div>
<div style="position:absolute;left:309px;top:134px;width:14px;height:13px;background:#f4f2ef;"></div>
<div style="position:absolute;left:309px;top:266px;width:14px;height:13px;background:#f4f2ef;"></div>
<div style="position:absolute;left:309px;top:152px;width:14px;height:71px;box-sizing:border-box;border-top:1px solid #c9c5bf;border-bottom:1px solid #c9c5bf;background:linear-gradient(90deg,#fdfdfc,#efedea);"></div>
<svg style="position:absolute;left:309px;top:134px;" width="14" height="13" viewBox="0 0 14 13"><path d="M3 9 L7 4 L11 9 Z" fill="#444"/></svg>
<svg style="position:absolute;left:309px;top:266px;" width="14" height="13" viewBox="0 0 14 13"><path d="M3 4 L7 9 L11 4 Z" fill="#444"/></svg>
<div style="position:absolute;left:28px;top:147px;width:1px;height:132px;background:#a09c96;"></div>
<div style="position:absolute;left:46px;top:168px;width:1px;height:111px;background:#a09c96;"></div>
<div style="position:absolute;left:64px;top:190px;width:1px;height:80px;background:#a09c96;"></div>
<div style="position:absolute;left:64px;top:225px;width:9px;height:1px;background:#a09c96;"></div>
<div style="position:absolute;left:64px;top:247px;width:9px;height:1px;background:#a09c96;"></div>
<div style="position:absolute;left:64px;top:269px;width:9px;height:1px;background:#a09c96;"></div>
<div style="position:absolute;left:33px;top:159px;width:5px;height:1px;background:#a09c96;"></div>
<svg style="position:absolute;left:24px;top:134px;" width="9" height="12" viewBox="0 0 9 12"><rect x="0.5" y="0" width="8" height="11" fill="#bbb" stroke="#222"/></svg>
<div class="t" style="left:39px;top:129.2px;font-size:13px;color:#000;font-weight:normal;letter-spacing:0.05px;">builtin:</div>
<svg style="position:absolute;left:24px;top:154px;" width="10" height="10" viewBox="0 0 10 10"><rect x="0.5" y="0.5" width="9" height="9" fill="#fff" stroke="#8a8680"/><path d="M2 5 L8 5" stroke="#111" stroke-width="1.5"/></svg>
<svg style="position:absolute;left:38px;top:150px;" width="17" height="17" viewBox="0 0 17 17"><path d="M1 4 L9 1 L16 4 L16 13 L8 16 L1 13 Z" fill="#5cb85c" stroke="#5a7a50" stroke-width="0.8"/><path d="M1 4 L8 7 L16 4 M8 7 L8 16" fill="none" stroke="#3e7e3e" stroke-width="0.8"/><path d="M1 4 L8 7 L8 16 L1 13 Z" fill="#4a8e4a"/></svg>
<div class="t" style="left:57px;top:151.2px;font-size:13px;color:#000;font-weight:normal;letter-spacing:0.05px;">setup-windTurbine.tcfd</div>
<div style="position:absolute;left:19px;top:172px;width:109px;height:18px;background:#308cc6;"></div>
<svg style="position:absolute;left:42px;top:176px;" width="10" height="10" viewBox="0 0 10 10"><rect x="0.5" y="0.5" width="9" height="9" fill="#e8f2fa" stroke="#8a8680"/><path d="M2 5 L8 5" stroke="#111" stroke-width="1.5"/></svg>
<svg style="position:absolute;left:56px;top:172px;" width="17" height="17" viewBox="0 0 17 17"><path d="M1 4 L9 1 L16 4 L16 13 L8 16 L1 13 Z" fill="#5cb85c" stroke="#5a7a50" stroke-width="0.8"/><path d="M1 4 L8 7 L16 4 M8 7 L8 16" fill="none" stroke="#3e7e3e" stroke-width="0.8"/><path d="M1 4 L8 7 L8 16 L1 13 Z" fill="#4a8e4a"/></svg>
<div class="t" style="left:75.5px;top:173.2px;font-size:13px;color:#fff;font-weight:normal;letter-spacing:0.05px;">Settings</div>
<svg style="position:absolute;left:56px;top:194px;" width="17" height="17" viewBox="0 0 17 17"><path d="M1 4 L9 1 L16 4 L16 13 L8 16 L1 13 Z" fill="#5cb85c" stroke="#5a7a50" stroke-width="0.8"/><path d="M1 4 L8 7 L16 4 M8 7 L8 16" fill="none" stroke="#3e7e3e" stroke-width="0.8"/><path d="M1 4 L8 7 L8 16 L1 13 Z" fill="#4a8e4a"/></svg>
<div class="t" style="left:75.5px;top:195.2px;font-size:13px;color:#000;font-weight:normal;letter-spacing:0.05px;">TCFDManager1</div>
<svg style="position:absolute;left:74px;top:216px;" width="17" height="17" viewBox="0 0 17 17"><path d="M1 4 L9 1 L16 4 L16 13 L8 16 L1 13 Z" fill="#5cb85c" stroke="#5a7a50" stroke-width="0.8"/><path d="M1 4 L8 7 L16 4 M8 7 L8 16" fill="none" stroke="#3e7e3e" stroke-width="0.8"/><path d="M1 4 L8 7 L8 16 L1 13 Z" fill="#4a8e4a"/></svg>
<div class="t" style="left:93px;top:217.2px;font-size:13px;color:#000;font-weight:normal;letter-spacing:0.05px;">Mesh</div>
<svg style="position:absolute;left:74px;top:238px;" width="17" height="17" viewBox="0 0 17 17"><path d="M1 4 L9 1 L16 4 L16 13 L8 16 L1 13 Z" fill="#5cb85c" stroke="#5a7a50" stroke-width="0.8"/><path d="M1 4 L8 7 L16 4 M8 7 L8 16" fill="none" stroke="#3e7e3e" stroke-width="0.8"/><path d="M1 4 L8 7 L8 16 L1 13 Z" fill="#4a8e4a"/></svg>
<div class="t" style="left:93px;top:239.2px;font-size:13px;color:#000;font-weight:normal;letter-spacing:0.05px;">Report</div>
<svg style="position:absolute;left:74px;top:260px;" width="17" height="17" viewBox="0 0 17 17"><path d="M1 0 L1 16 L16 16" fill="none" stroke="#556" stroke-width="0.8"/><path d="M2 12 L4 8 L6 13 L8 7 L10 12 L12 6 L14 10 L16 5" fill="none" stroke="#3a80d0" stroke-width="1"/></svg>
<div class="t" style="left:93px;top:261.2px;font-size:13px;color:#000;font-weight:normal;letter-spacing:0.05px;">Residuals</div>
<svg style="position:absolute;left:3px;top:219px;" width="15" height="12" viewBox="0 0 15 12"><ellipse cx="7" cy="6" rx="6.5" ry="3.8" fill="#fff" stroke="#888" stroke-width="1.2"/><circle cx="7" cy="6" r="2.3" fill="#777"/></svg>
<svg style="position:absolute;left:154px;top:281px;" width="17" height="2" viewBox="0 0 17 2"><rect x="0" y="0" width="1" height="1" fill="#aaa"/><rect x="3" y="0" width="1" height="1" fill="#aaa"/><rect x="6" y="0" width="1" height="1" fill="#aaa"/><rect x="9" y="0" width="1" height="1" fill="#aaa"/><rect x="12" y="0" width="1" height="1" fill="#aaa"/><rect x="15" y="0" width="1" height="1" fill="#aaa"/></svg>
<div style="position:absolute;left:0px;top:310px;width:324px;height:1px;background:#b8b3ad;"></div>
<div style="position:absolute;left:84px;top:288px;width:92px;height:23px;box-sizing:border-box;border:1px solid #bdb8b2;border-bottom:none;border-radius:3px 3px 0 0;background:linear-gradient(#e6e2de,#dcd8d4);"></div>
<div style="position:absolute;left:0px;top:286px;width:84px;height:25px;box-sizing:border-box;border:1px solid #bdb8b2;border-left:none;border-bottom:none;border-radius:0 3px 0 0;background:#efebe7;"></div>
<div class="t" style="left:10px;top:291.2px;font-size:13px;color:#000;font-weight:normal;letter-spacing:0.05px;">Properties</div>
<div class="t" style="left:95px;top:292.2px;font-size:13px;color:#000;font-weight:normal;letter-spacing:0.05px;">Information</div>
<div class="t" style="left:2px;top:314.2px;font-size:13px;color:#000;font-weight:normal;letter-spacing:0.05px;">Properties</div>
<svg style="position:absolute;left:297px;top:316px;" width="26" height="12" viewBox="0 0 26 12"><rect x="0.5" y="0.5" width="11" height="11" rx="2" fill="#f4f2ef" stroke="#8a8680"/><rect x="2.5" y="4.5" width="5" height="5" fill="none" stroke="#777"/><rect x="4.5" y="2.5" width="5" height="5" fill="none" stroke="#777"/><rect x="14.5" y="0.5" width="11" height="11" rx="2" fill="#f4f2ef" stroke="#8a8680"/><path d="M17 3 L23 9 M23 3 L17 9" stroke="#555" stroke-width="1.8"/></svg>
<div style="position:absolute;left:7px;top:340px;width:79px;height:24px;box-sizing:border-box;border:1px solid #b5b0aa;border-radius:3px;background:linear-gradient(#fdfcfb,#ebe8e5);"></div>
<div style="position:absolute;left:90px;top:340px;width:79px;height:24px;box-sizing:border-box;border:1px solid #b5b0aa;border-radius:3px;background:linear-gradient(#fdfcfb,#ebe8e5);"></div>
<div style="position:absolute;left:171px;top:340px;width:80px;height:24px;box-sizing:border-box;border:1px solid #b5b0aa;border-radius:3px;background:linear-gradient(#fdfcfb,#ebe8e5);"></div>
<div style="position:absolute;left:253px;top:340px;width:62px;height:24px;box-sizing:border-box;border:1px solid #b5b0aa;border-radius:3px;background:linear-gradient(#fdfcfb,#ebe8e5);"></div>
<svg style="position:absolute;left:21px;top:343px;" width="18" height="18" viewBox="0 0 18 18"><path d="M2 6 L9 3 L15 6 L15 14 L8 17 L2 14 Z" fill="#ddd" stroke="#aaa"/><path d="M8 9 L14 3 M11 2 L15 2 L15 6" stroke="#bbb" stroke-width="2" fill="none"/></svg>
<div class="t" style="left:39px;top:344.2px;font-size:13px;color:#aaa6a0;font-weight:normal;letter-spacing:0.05px;"><u>A</u>pply</div>
<svg style="position:absolute;left:104px;top:344px;" width="16" height="16" viewBox="0 0 16 16"><circle cx="8" cy="8" r="7" fill="#c8c8c4"/><path d="M4 12 L12 4" stroke="#eee" stroke-width="2"/></svg>
<div class="t" style="left:121px;top:344.2px;font-size:13px;color:#aaa6a0;font-weight:normal;letter-spacing:0.05px;"><u>R</u>eset</div>
<svg style="position:absolute;left:183px;top:345px;" width="15" height="15" viewBox="0 0 15 15"><path d="M2 2 L13 13 M13 2 L2 13" stroke="#aaa" stroke-width="3.5"/></svg>
<div class="t" style="left:199px;top:344.2px;font-size:13px;color:#aaa6a0;font-weight:normal;letter-spacing:0.05px;"><u>D</u>elete</div>
<svg style="position:absolute;left:278px;top:344px;" width="12" height="16" viewBox="0 0 12 16"><path d="M1.5 5 Q1.5 1 5.5 1 Q10 1 10 4.6 Q10 7 7.2 8 L7.2 10 L4.2 10 L4.2 7 Q7 6.2 7 4.6 Q7 3.4 5.6 3.4 Q4.4 3.4 4.4 5 Z" fill="#2aa2f2" stroke="#5a6050" stroke-width="0.8"/><rect x="4.2" y="11" width="3" height="3.5" fill="#2aa2f2" stroke="#5a6050" stroke-width="0.8"/></svg>
<div style="position:absolute;left:7px;top:371px;width:282px;height:21px;box-sizing:border-box;border:1px solid #b5b0aa;border-radius:2px;background:#fff;"></div>
<div class="t" style="left:11px;top:373.2px;font-size:13px;color:#9a968f;font-weight:normal;letter-spacing:0.05px;">Search ... (use Esc to clear text)</div>
<div style="position:absolute;left:291px;top:371px;width:24px;height:22px;box-sizing:border-box;border:1px solid #c4c0ba;border-radius:2px;background:#e4e0dc;"></div>
<svg style="position:absolute;left:295px;top:374px;" width="16" height="16" viewBox="0 0 16 16"><path d="M14.57 5.58 L14.99 7.73 L13.20 8.20 L12.88 9.80 L14.36 10.93 L13.14 12.75 L11.53 11.82 L10.18 12.72 L10.42 14.57 L8.27 14.99 L7.80 13.20 L6.20 12.88 L5.07 14.36 L3.25 13.14 L4.18 11.53 L3.28 10.18 L1.43 10.42 L1.01 8.27 L2.80 7.80 L3.12 6.20 L1.64 5.07 L2.86 3.25 L4.47 4.18 L5.82 3.28 L5.58 1.43 L7.73 1.01 L8.20 2.80 L9.80 3.12 L10.93 1.64 L12.75 2.86 L11.82 4.47 L12.72 5.82 Z" fill="#f6f8fa" stroke="#7a8aa0" stroke-width="1"/><circle cx="8" cy="8" r="2.3" fill="#e4e0dc" stroke="#7a8aa0" stroke-width="1"/></svg>
<div style="position:absolute;left:7px;top:399px;width:294px;height:21px;background:#ff8c00;"></div>
<svg style="position:absolute;left:12px;top:405px;" width="14" height="9" viewBox="0 0 14 9"><rect x="0.5" y="2.5" width="13" height="5" fill="#8a9ee8" stroke="#223" stroke-width="1"/></svg>
<div class="t" style="left:31px;top:401.7px;font-size:13px;color:#000;font-weight:bold;letter-spacing:0.55px;">General</div>
<div class="t" style="left:7px;top:425.2px;font-size:13px;color:#000;font-weight:normal;letter-spacing:0.05px;">Setup file</div>
<div style="position:absolute;left:92px;top:427px;width:215px;height:21px;box-sizing:border-box;border:1px solid #b5b0aa;border-radius:2px;background:#fff;"></div>
<div class="t" style="left:93px;top:429.7px;font-size:13px;color:#000;font-weight:normal;letter-spacing:0.05px;">8.06-5/wind-turbine/eveningTest/se</div>
<div style="position:absolute;left:92px;top:452px;width:80px;height:24px;box-sizing:border-box;border:1px solid #b5b0aa;border-radius:3px;background:linear-gradient(#fdfcfb,#ebe8e5);"></div>
<svg style="position:absolute;left:104px;top:456px;" width="16" height="16" viewBox="0 0 16 16"><path d="M1 5 L1 14 L12 14 L15 7 L7 7 L6 5 Z" fill="#f5d48a" stroke="#9a7a3a" stroke-width="0.8"/></svg>
<div class="t" style="left:120px;top:456.2px;font-size:13px;color:#000;font-weight:normal;letter-spacing:0.05px;">Load...</div>
<div style="position:absolute;left:176px;top:452px;width:80px;height:24px;box-sizing:border-box;border:1px solid #b5b0aa;border-radius:3px;background:linear-gradient(#fdfcfb,#ebe8e5);"></div>
<div class="t" style="left:204px;top:456.2px;font-size:13px;color:#000;font-weight:normal;letter-spacing:0.05px;">Reload</div>
<div style="position:absolute;left:260px;top:452px;width:52px;height:24px;box-sizing:border-box;border:1px solid #b5b0aa;border-radius:3px;background:linear-gradient(#fdfcfb,#ebe8e5);"></div>
<svg style="position:absolute;left:277px;top:456px;" width="16" height="16" viewBox="0 0 16 16"><path d="M2 6 Q8 1 13 8" fill="none" stroke="#22a022" stroke-width="2.5"/><path d="M10 8 L15 6 L14 13 Z" fill="#22a022"/></svg>
<div class="t" style="left:292px;top:456.2px;font-size:13px;color:#000;font-weight:normal;letter-spacing:0.05px;">S</div>
<div style="position:absolute;left:92px;top:481px;width:220px;height:23px;box-sizing:border-box;border:1px solid #b5b0aa;border-radius:3px;background:linear-gradient(#fdfcfb,#ebe8e5);"></div>
<svg style="position:absolute;left:214px;top:484px;" width="16" height="16" viewBox="0 0 16 16"><circle cx="8" cy="8" r="6" fill="none" stroke="#5cb85c" stroke-width="2.5"/><circle cx="8" cy="8" r="2" fill="none" stroke="#888"/></svg>
<div class="t" style="left:232px;top:484.2px;font-size:13px;color:#000;font-weight:normal;letter-spacing:0.05px;">Check Setu</div>
<div class="t" style="left:7px;top:507.2px;font-size:13px;color:#000;font-weight:normal;letter-spacing:0.05px;">Machine type</div>
<div style="position:absolute;left:92px;top:508px;width:215px;height:22px;box-sizing:border-box;border:1px solid #b5b0aa;border-radius:3px;background:linear-gradient(#fdfcfb,#ebe8e5);"></div>
<div class="t" style="left:97px;top:511.2px;font-size:13px;color:#000;font-weight:normal;letter-spacing:0.05px;">windTurbine</div>
<div style="position:absolute;left:7px;top:534px;width:294px;height:21px;background:#ff8c00;"></div>
<svg style="position:absolute;left:12px;top:537px;" width="14" height="15" viewBox="0 0 14 15"><path d="M5 0.5 L9 0.5 L9 5 L13.5 5 L13.5 9.5 L9 9.5 L9 14 L5 14 L5 9.5 0.5 9.5 L0.5 5 L5 5 Z" fill="#8a9ee8" stroke="#223" stroke-width="1"/></svg>
<div class="t" style="left:31px;top:536.7px;font-size:13px;color:#000;font-weight:bold;letter-spacing:0.55px;">Simulation</div>
<div style="position:absolute;left:7px;top:560px;width:294px;height:21px;background:#ff8c00;"></div>
<svg style="position:absolute;left:12px;top:563px;" width="14" height="15" viewBox="0 0 14 15"><path d="M5 0.5 L9 0.5 L9 5 L13.5 5 L13.5 9.5 L9 9.5 L9 14 L5 14 L5 9.5 0.5 9.5 L0.5 5 L5 5 Z" fill="#8a9ee8" stroke="#223" stroke-width="1"/></svg>
<div class="t" style="left:31px;top:562.7px;font-size:13px;color:#000;font-weight:bold;letter-spacing:0.55px;">Physics</div>
<div style="position:absolute;left:7px;top:586px;width:294px;height:21px;background:#ff8c00;"></div>
<svg style="position:absolute;left:12px;top:589px;" width="14" height="15" viewBox="0 0 14 15"><path d="M5 0.5 L9 0.5 L9 5 L13.5 5 L13.5 9.5 L9 9.5 L9 14 L5 14 L5 9.5 0.5 9.5 L0.5 5 L5 5 Z" fill="#8a9ee8" stroke="#223" stroke-width="1"/></svg>
<div class="t" style="left:31px;top:588.7px;font-size:13px;color:#000;font-weight:bold;letter-spacing:0.55px;">Components</div>
<div style="position:absolute;left:7px;top:612px;width:294px;height:21px;background:#ff8c00;"></div>
<svg style="position:absolute;left:12px;top:615px;" width="14" height="15" viewBox="0 0 14 15"><path d="M5 0.5 L9 0.5 L9 5 L13.5 5 L13.5 9.5 L9 9.5 L9 14 L5 14 L5 9.5 0.5 9.5 L0.5 5 L5 5 Z" fill="#8a9ee8" stroke="#223" stroke-width="1"/></svg>
<div class="t" style="left:31px;top:614.7px;font-size:13px;color:#000;font-weight:bold;letter-spacing:0.55px;">Speedlines</div>
<div style="position:absolute;left:7px;top:638px;width:294px;height:21px;background:#ff8c00;"></div>
<svg style="position:absolute;left:12px;top:644px;" width="14" height="9" viewBox="0 0 14 9"><rect x="0.5" y="2.5" width="13" height="5" fill="#8a9ee8" stroke="#223" stroke-width="1"/></svg>
<div class="t" style="left:31px;top:640.7px;font-size:13px;color:#000;font-weight:bold;letter-spacing:0.55px;">Turbulence</div>
<div class="t" style="left:7px;top:664.7px;font-size:13px;color:#000;font-weight:normal;letter-spacing:0.05px;">Turbulence model</div>
<div style="position:absolute;left:118px;top:666px;width:189px;height:22px;box-sizing:border-box;border:1px solid #b5b0aa;border-radius:3px;background:linear-gradient(#fdfcfb,#ebe8e5);"></div>
<div class="t" style="left:123px;top:669.2px;font-size:13px;color:#000;font-weight:normal;letter-spacing:0.05px;">kOmegaSST</div>
<div class="t" style="left:7px;top:690.7px;font-size:13px;color:#000;font-weight:normal;letter-spacing:0.05px;">alphaK1</div>
<div style="position:absolute;left:118px;top:692px;width:189px;height:22px;box-sizing:border-box;border:1px solid #b5b0aa;border-radius:2px;background:#fff;"></div>
<div class="t" style="left:121px;top:695.2px;font-size:13px;color:#000;font-weight:normal;letter-spacing:0.05px;">0.85</div>
<div class="t" style="left:7px;top:716.7px;font-size:13px;color:#000;font-weight:normal;letter-spacing:0.05px;">alphaK2</div>
<div style="position:absolute;left:118px;top:718px;width:189px;height:22px;box-sizing:border-box;border:1px solid #b5b0aa;border-radius:2px;background:#fff;"></div>
<div class="t" style="left:121px;top:721.2px;font-size:13px;color:#000;font-weight:normal;letter-spacing:0.05px;">1</div>
<div class="t" style="left:7px;top:742.7px;font-size:13px;color:#000;font-weight:normal;letter-spacing:0.05px;">alphaOmega1</div>
<div style="position:absolute;left:118px;top:744px;width:189px;height:22px;box-sizing:border-box;border:1px solid #b5b0aa;border-radius:2px;background:#fff;"></div>
<div class="t" style="left:121px;top:747.2px;font-size:13px;color:#000;font-weight:normal;letter-spacing:0.05px;">0.5</div>
<div class="t" style="left:7px;top:768.7px;font-size:13px;color:#000;font-weight:normal;letter-spacing:0.05px;">alphaOmega2</div>
<div style="position:absolute;left:118px;top:770px;width:189px;height:22px;box-sizing:border-box;border:1px solid #b5b0aa;border-radius:2px;background:#fff;"></div>
<div class="t" style="left:121px;top:773.2px;font-size:13px;color:#000;font-weight:normal;letter-spacing:0.05px;">0.856</div>
<div class="t" style="left:7px;top:794.7px;font-size:13px;color:#000;font-weight:normal;letter-spacing:0.05px;">beta1</div>
<div style="position:absolute;left:118px;top:796px;width:189px;height:22px;box-sizing:border-box;border:1px solid #b5b0aa;border-radius:2px;background:#fff;"></div>
<div class="t" style="left:121px;top:799.2px;font-size:13px;color:#000;font-weight:normal;letter-spacing:0.05px;">0.075</div>
<div class="t" style="left:7px;top:820.7px;font-size:13px;color:#000;font-weight:normal;letter-spacing:0.05px;">beta2</div>
<div style="position:absolute;left:118px;top:822px;width:189px;height:22px;box-sizing:border-box;border:1px solid #b5b0aa;border-radius:2px;background:#fff;"></div>
<div class="t" style="left:121px;top:825.2px;font-size:13px;color:#000;font-weight:normal;letter-spacing:0.05px;">0.0828</div>
<div class="t" style="left:7px;top:846.7px;font-size:13px;color:#000;font-weight:normal;letter-spacing:0.05px;">betaStar</div>
<div style="position:absolute;left:118px;top:848px;width:189px;height:22px;box-sizing:border-box;border:1px solid #b5b0aa;border-radius:2px;background:#fff;"></div>
<div class="t" style="left:121px;top:851.2px;font-size:13px;color:#000;font-weight:normal;letter-spacing:0.05px;">0.09</div>
<div class="t" style="left:7px;top:872.7px;font-size:13px;color:#000;font-weight:normal;letter-spacing:0.05px;">gamma1</div>
<div style="position:absolute;left:118px;top:874px;width:189px;height:22px;box-sizing:border-box;border:1px solid #b5b0aa;border-radius:2px;background:#fff;"></div>
<div class="t" style="left:121px;top:877.2px;font-size:13px;color:#000;font-weight:normal;letter-spacing:0.05px;">0.555556</div>
<div class="t" style="left:7px;top:898.7px;font-size:13px;color:#000;font-weight:normal;letter-spacing:0.05px;">gamma2</div>
<div style="position:absolute;left:118px;top:900px;width:189px;height:22px;box-sizing:border-box;border:1px solid #b5b0aa;border-radius:2px;background:#fff;"></div>
<div class="t" style="left:121px;top:903.2px;font-size:13px;color:#000;font-weight:normal;letter-spacing:0.05px;">0.44</div>
<div class="t" style="left:7px;top:924.7px;font-size:13px;color:#000;font-weight:normal;letter-spacing:0.05px;">a1</div>
<div style="position:absolute;left:118px;top:926px;width:189px;height:22px;box-sizing:border-box;border:1px solid #b5b0aa;border-radius:2px;background:#fff;"></div>
<div class="t" style="left:121px;top:929.2px;font-size:13px;color:#000;font-weight:normal;letter-spacing:0.05px;">0.31</div>
<div class="t" style="left:7px;top:950.7px;font-size:13px;color:#000;font-weight:normal;letter-spacing:0.05px;">b1</div>
<div style="position:absolute;left:118px;top:952px;width:189px;height:22px;box-sizing:border-box;border:1px solid #b5b0aa;border-radius:2px;background:#fff;"></div>
<div class="t" style="left:121px;top:955.2px;font-size:13px;color:#000;font-weight:normal;letter-spacing:0.05px;">1</div>
<div class="t" style="left:7px;top:976.7px;font-size:13px;color:#000;font-weight:normal;letter-spacing:0.05px;">c1</div>
<div style="position:absolute;left:118px;top:978px;width:189px;height:22px;box-sizing:border-box;border:1px solid #b5b0aa;border-radius:2px;background:#fff;"></div>
<div class="t" style="left:121px;top:981.2px;font-size:13px;color:#000;font-weight:normal;letter-spacing:0.05px;">10</div>
<div style="position:absolute;left:7px;top:1007px;width:14px;height:14px;box-sizing:border-box;border:1px solid #b5b0aa;border-radius:2px;background:#fff;"></div>
<div class="t" style="left:26px;top:1005.7px;font-size:13px;color:#000;font-weight:normal;letter-spacing:0.05px;">F3</div>
<div class="t" style="left:7px;top:1026.7px;font-size:13px;color:#000;font-weight:normal;letter-spacing:0.05px;">Wall treatment</div>
<div style="position:absolute;left:118px;top:1028px;width:189px;height:22px;box-sizing:border-box;border:1px solid #b5b0aa;border-radius:3px;background:linear-gradient(#fdfcfb,#ebe8e5);"></div>
<div class="t" style="left:123px;top:1031.2px;font-size:13px;color:#000;font-weight:normal;letter-spacing:0.05px;">Standard wall functions</div>
<div style="position:absolute;left:7px;top:1054px;width:294px;height:21px;background:#ff8c00;"></div>
<svg style="position:absolute;left:12px;top:1057px;" width="14" height="15" viewBox="0 0 14 15"><path d="M5 0.5 L9 0.5 L9 5 L13.5 5 L13.5 9.5 L9 9.5 L9 14 L5 14 L5 9.5 0.5 9.5 L0.5 5 L5 5 Z" fill="#8a9ee8" stroke="#223" stroke-width="1"/></svg>
<div class="t" style="left:31px;top:1056.7px;font-size:13px;color:#000;font-weight:bold;letter-spacing:0.55px;">Boundary condition : Inlet</div>
<div style="position:absolute;left:7px;top:1080px;width:294px;height:21px;background:#ff8c00;"></div>
<svg style="position:absolute;left:12px;top:1083px;" width="14" height="15" viewBox="0 0 14 15"><path d="M5 0.5 L9 0.5 L9 5 L13.5 5 L13.5 9.5 L9 9.5 L9 14 L5 14 L5 9.5 0.5 9.5 L0.5 5 L5 5 Z" fill="#8a9ee8" stroke="#223" stroke-width="1"/></svg>
<div class="t" style="left:31px;top:1082.7px;font-size:13px;color:#000;font-weight:bold;letter-spacing:0.55px;">Boundary condition : Outlet</div>
<div style="position:absolute;left:7px;top:1106px;width:294px;height:21px;background:#ff8c00;"></div>
<svg style="position:absolute;left:12px;top:1109px;" width="14" height="15" viewBox="0 0 14 15"><path d="M5 0.5 L9 0.5 L9 5 L13.5 5 L13.5 9.5 L9 9.5 L9 14 L5 14 L5 9.5 0.5 9.5 L0.5 5 L5 5 Z" fill="#8a9ee8" stroke="#223" stroke-width="1"/></svg>
<div class="t" style="left:31px;top:1108.7px;font-size:13px;color:#000;font-weight:bold;letter-spacing:0.55px;">Initial conditions</div>
<div style="position:absolute;left:7px;top:1123px;width:294px;height:19px;background:#efebe7;"></div>
<div style="position:absolute;left:7px;top:1123px;width:294px;height:14px;background:#dcd8d3;"></div>
<div style="position:absolute;left:21px;top:1123px;width:184px;height:14px;box-sizing:border-box;border:1px solid #c9c5bf;background:linear-gradient(#fbfbfa,#f0eeeb);"></div>
<svg style="position:absolute;left:7px;top:1123px;" width="14" height="14" viewBox="0 0 14 14"><path d="M9 3 L4 7 L9 11 Z" fill="#444"/></svg>
<svg style="position:absolute;left:287px;top:1123px;" width="14" height="14" viewBox="0 0 14 14"><path d="M5 3 L10 7 L5 11 Z" fill="#444"/></svg>
<div style="position:absolute;left:301px;top:399px;width:14px;height:724px;background:#dedad6;"></div>
<div style="position:absolute;left:301px;top:399px;width:14px;height:13px;background:#f4f2ef;"></div>
<div style="position:absolute;left:301px;top:412px;width:14px;height:18px;background:#dedad6;"></div>
<div style="position:absolute;left:301px;top:430px;width:14px;height:375px;box-sizing:border-box;border-top:1px solid #c9c5bf;border-bottom:1px solid #c9c5bf;background:linear-gradient(90deg,#fdfdfc,#efedea);"></div>
<svg style="position:absolute;left:301px;top:399px;" width="14" height="12" viewBox="0 0 14 12"><path d="M3 8 L7 4 L11 8 Z" fill="#444"/></svg>
<svg style="position:absolute;left:301px;top:1110px;" width="14" height="13" viewBox="0 0 14 13"><path d="M3 4 L7 9 L11 4 Z" fill="#444"/></svg>
<div style="position:absolute;left:330px;top:138px;width:1546px;height:866px;box-sizing:border-box;border:1px solid #b8b3ad;background:#faf8f6;"></div>
<div style="position:absolute;left:331px;top:114px;width:116px;height:26px;box-sizing:border-box;border:1px solid #b8b3ad;border-bottom:none;border-radius:4px 4px 0 0;background:#fbf9f7;"></div>
<div style="position:absolute;left:446px;top:116px;width:35px;height:23px;box-sizing:border-box;border:1px solid #bdb8b2;border-bottom:none;border-radius:4px 4px 0 0;background:linear-gradient(#efece9,#e6e2de);"></div>
<div style="position:absolute;left:447px;top:139px;width:1429px;height:1px;background:#b8b3ad;"></div>
<svg style="position:absolute;left:342px;top:121px;" width="10" height="10" viewBox="0 0 10 10"><rect x="1" y="1" width="8" height="8" fill="none" stroke="#000" stroke-width="1.6"/></svg>
<div class="t" style="left:357px;top:118.7px;font-size:13px;color:#000;font-weight:normal;letter-spacing:0.05px;">Layout #1</div>
<svg style="position:absolute;left:421px;top:120px;" width="12" height="12" viewBox="0 0 12 12"><rect x="0.5" y="0.5" width="11" height="11" rx="2" fill="#f4f2ef" stroke="#777"/><path d="M3 3 L9 9 M9 3 L3 9" stroke="#333" stroke-width="1.8"/></svg>
<div class="t" style="left:458px;top:118.5px;font-size:15px;color:#000;font-weight:normal;letter-spacing:0.05px;">+</div>
<svg style="position:absolute;left:333px;top:140px;" width="18" height="18" viewBox="0 0 18 18"><rect x="6" y="2" width="10" height="9" rx="1" fill="#bbb" stroke="#777"/><circle cx="11" cy="6.5" r="2.5" fill="none" stroke="#555"/><path d="M2 14 A5 5 0 0 1 9 10" fill="none" stroke="#e05030" stroke-width="2.2"/><path d="M1 10 L5 10 L3 14 Z" fill="#e05030"/></svg>
<svg style="position:absolute;left:353px;top:140px;" width="18" height="18" viewBox="0 0 18 18"><rect x="2" y="2" width="10" height="9" rx="1" fill="none" stroke="#bbb"/><rect x="6" y="6" width="10" height="9" rx="1" fill="none" stroke="#bbb"/></svg>
<div style="position:absolute;left:375px;top:144px;width:1px;height:10px;background:#ccc;"></div>
<div class="t" style="left:382px;top:142.4px;font-size:11px;color:#333;font-weight:normal;letter-spacing:0.3px;">3D</div>
<svg style="position:absolute;left:399px;top:140px;" width="18" height="18" viewBox="0 0 18 18"><rect x="1" y="2" width="14" height="11" rx="1.5" fill="#bbb" stroke="#777"/><circle cx="8" cy="7.5" r="3" fill="none" stroke="#555" stroke-width="1.2"/><circle cx="13" cy="13" r="3.5" fill="#5cb85c"/><circle cx="13" cy="13" r="1.5" fill="#fff"/></svg>
<div style="position:absolute;left:421px;top:144px;width:1px;height:10px;background:#ccc;"></div>
<svg style="position:absolute;left:425px;top:140px;" width="18" height="18" viewBox="0 0 18 18"><rect x="1.5" y="1.5" width="12" height="12" fill="none" stroke="#555" stroke-dasharray="1.5,1.5"/><path d="M10 9 L16 15 L13 15 L14 17" fill="#777" stroke="#666" stroke-width="1"/><path d="M8 3 L8 8 M5.5 5.5 L10.5 5.5" stroke="#1a9a1a" stroke-width="2"/></svg>
<svg style="position:absolute;left:445px;top:140px;" width="18" height="18" viewBox="0 0 18 18"><rect x="1.5" y="1.5" width="12" height="12" fill="none" stroke="#555" stroke-dasharray="1.5,1.5"/><path d="M10 9 L16 15 L13 15 L14 17" fill="#777" stroke="#666" stroke-width="1"/><path d="M5 5 L11 5" stroke="#e00" stroke-width="2"/></svg>
<svg style="position:absolute;left:465px;top:140px;" width="18" height="18" viewBox="0 0 18 18"><rect x="1.5" y="1.5" width="12" height="12" fill="none" stroke="#555" stroke-dasharray="1.5,1.5"/><path d="M10 9 L16 15 L13 15 L14 17" fill="#777" stroke="#666" stroke-width="1"/><path d="M8 2 L8 6 M6 4 L10 4" stroke="#1a9a1a" stroke-width="1.8"/><path d="M5 9 L11 9" stroke="#e00" stroke-width="1.8"/></svg>
<div style="position:absolute;left:487px;top:144px;width:1px;height:10px;background:#ccc;"></div>
<svg style="position:absolute;left:491px;top:140px;" width="18" height="18" viewBox="0 0 18 18"><rect x="1.5" y="1.5" width="12" height="12" fill="none" stroke="#555" stroke-dasharray="1.5,1.5"/><path d="M10 9 L16 15 L13 15 L14 17" fill="#777" stroke="#666" stroke-width="1"/><path d="M3 12 L7.5 4 L12 12 Z" fill="#7cc47a"/></svg>
<svg style="position:absolute;left:511px;top:140px;" width="18" height="18" viewBox="0 0 18 18"><rect x="1.5" y="1.5" width="12" height="12" fill="none" stroke="#555" stroke-dasharray="1.5,1.5"/><path d="M10 9 L16 15 L13 15 L14 17" fill="#777" stroke="#666" stroke-width="1"/><path d="M3 12 L7.5 4 L12 12 Z" fill="none" stroke="#bbb"/><circle cx="7.5" cy="4" r="1" fill="#e00"/><circle cx="3" cy="12" r="1" fill="#e00"/></svg>
<svg style="position:absolute;left:531px;top:140px;" width="18" height="18" viewBox="0 0 18 18"><path d="M2 3 L9 5 L16 3 L16 13 L9 15 L2 13 Z" fill="#8fd08a" stroke="#5a8a55"/><path d="M9 10 L15 16" stroke="#666" stroke-width="1.5"/></svg>
<svg style="position:absolute;left:551px;top:140px;" width="18" height="18" viewBox="0 0 18 18"><path d="M2 3 L9 5 L16 3 L16 13 L9 15 L2 13 Z" fill="none" stroke="#999"/><circle cx="5" cy="7" r="1" fill="#e00"/><circle cx="12" cy="5" r="1" fill="#e00"/><circle cx="14" cy="11" r="1" fill="#e00"/><circle cx="6" cy="11" r="1" fill="#e00"/></svg>
<svg style="position:absolute;left:571px;top:140px;" width="18" height="18" viewBox="0 0 18 18"><path d="M2 2 L9 5 L16 2 L11 9 L16 16 L9 13 L2 16 Z" fill="none" stroke="#5a8a55" stroke-dasharray="2,1"/><circle cx="8" cy="9" r="2" fill="#7cc47a"/></svg>
<svg style="position:absolute;left:591px;top:140px;" width="18" height="18" viewBox="0 0 18 18"><path d="M2 2 L9 5 L16 2 L11 9 L16 16 L9 13 L2 16 Z" fill="none" stroke="#5a8a55" stroke-dasharray="2,1"/><circle cx="6" cy="7" r="1" fill="#e00"/><circle cx="9" cy="10" r="1" fill="#e00"/><circle cx="12" cy="13" r="1" fill="#e00"/></svg>
<svg style="position:absolute;left:611px;top:140px;" width="18" height="18" viewBox="0 0 18 18"><rect x="2" y="4" width="12" height="9" fill="none" stroke="#aaa" stroke-dasharray="1.5,1"/><circle cx="8" cy="9" r="2.5" fill="#8fc0a0"/><path d="M9 10 L15 15" stroke="#777" stroke-width="1.5"/></svg>
<svg style="position:absolute;left:631px;top:140px;" width="18" height="18" viewBox="0 0 18 18"><path d="M3 12 L8 4 L13 12 Z" fill="#7cc47a"/><path d="M10 9 L15 15 L12 15" fill="#555" stroke="#555"/></svg>
<svg style="position:absolute;left:651px;top:140px;" width="18" height="18" viewBox="0 0 18 18"><path d="M3 12 L8 4 L13 12 Z" fill="none" stroke="#ccc"/><circle cx="8" cy="4" r="1.2" fill="#e00"/><circle cx="3" cy="12" r="1.2" fill="#e00"/><path d="M10 9 L15 15 L12 15" fill="#555" stroke="#555"/></svg>
<svg style="position:absolute;left:671px;top:140px;" width="18" height="18" viewBox="0 0 18 18"><circle cx="4" cy="11" r="1.3" fill="#e00"/><text x="7" y="14" font-family="Liberation Sans" font-size="13" font-weight="bold" fill="#555">?</text></svg>
<svg style="position:absolute;left:691px;top:140px;" width="18" height="18" viewBox="0 0 18 18"><path d="M1 15 L5 8 L9 15 Z" fill="#7cc47a"/><text x="7" y="13" font-family="Liberation Sans" font-size="13" font-weight="bold" fill="#555">?</text></svg>
<svg style="position:absolute;left:711px;top:140px;" width="18" height="18" viewBox="0 0 18 18"><circle cx="9" cy="9" r="7" fill="#d4d4d0" stroke="#aaa" stroke-width="1.5"/><circle cx="9" cy="9" r="3.5" fill="none" stroke="#999"/><path d="M7 7 L11 11 M11 7 L7 11" stroke="#999"/></svg>
<div class="t" style="left:1130.5px;top:141.2px;font-size:13px;color:#000;font-weight:bold;letter-spacing:0.7px;"><u>RenderView1</u></div>
<div style="position:absolute;left:1231px;top:141px;width:19px;height:18px;box-sizing:border-box;border:1px solid #b0aca6;border-radius:3px;background:linear-gradient(#fbfaf9,#ebe8e5);"></div>
<svg style="position:absolute;left:1231px;top:141px;" width="19" height="16" viewBox="0 0 19 16"><defs><linearGradient id="vbg" x1="0" y1="0" x2="1" y2="0"><stop offset="0" stop-color="#c8d0f0"/><stop offset="1" stop-color="#f4f6fc"/></linearGradient></defs><rect x="5.25" y="3.75" width="8.5" height="8.5" fill="url(#vbg)" stroke="#000" stroke-width="1.5"/><path d="M9.5 3.75 L9.5 12.25" stroke="#000" stroke-width="1.2"/></svg>
<div style="position:absolute;left:1252px;top:141px;width:19px;height:18px;box-sizing:border-box;border:1px solid #b0aca6;border-radius:3px;background:linear-gradient(#fbfaf9,#ebe8e5);"></div>
<svg style="position:absolute;left:1252px;top:141px;" width="19" height="16" viewBox="0 0 19 16"><rect x="5.25" y="3.75" width="8.5" height="8.5" fill="url(#vbg)" stroke="#000" stroke-width="1.5"/><path d="M5.25 8 L13.75 8" stroke="#000" stroke-width="1.2"/></svg>
<div style="position:absolute;left:1273px;top:141px;width:19px;height:18px;box-sizing:border-box;border:1px solid #b0aca6;border-radius:3px;background:linear-gradient(#fbfaf9,#ebe8e5);"></div>
<svg style="position:absolute;left:1273px;top:141px;" width="19" height="16" viewBox="0 0 19 16"><rect x="5.25" y="3.75" width="8.5" height="8.5" fill="#f6f6f4" stroke="#000" stroke-width="1.5"/><path d="M5 4.5 L14 4.5" stroke="#000" stroke-width="2"/></svg>
<div style="position:absolute;left:1294px;top:141px;width:19px;height:18px;box-sizing:border-box;border:1px solid #b0aca6;border-radius:3px;background:linear-gradient(#fbfaf9,#ebe8e5);"></div>
<svg style="position:absolute;left:1294px;top:141px;" width="19" height="16" viewBox="0 0 19 16"><rect x="5" y="3.5" width="9" height="9" rx="2.2" fill="none" stroke="#8a8884" stroke-width="1"/><rect x="6.8" y="7" width="3.5" height="3.5" fill="none" stroke="#8a8884" stroke-width="1"/><rect x="8.8" y="5.2" width="3.5" height="3.5" fill="none" stroke="#8a8884" stroke-width="1"/></svg>
<div style="position:absolute;left:1315px;top:141px;width:19px;height:18px;box-sizing:border-box;border:1px solid #b0aca6;border-radius:3px;background:linear-gradient(#fbfaf9,#ebe8e5);"></div>
<svg style="position:absolute;left:1315px;top:141px;" width="19" height="16" viewBox="0 0 19 16"><rect x="5" y="3.5" width="9" height="9" rx="2.2" fill="none" stroke="#8a8884" stroke-width="1"/><path d="M7 5.5 L12 10.5 M12 5.5 L7 10.5" stroke="#6a6864" stroke-width="1.6"/></svg>
<div style="position:absolute;left:332px;top:161px;width:1003px;height:842px;box-sizing:border-box;border:2px solid #0000ff;background:#fdfdf8;"></div>
<svg style="position:absolute;left:335px;top:164px;" width="997" height="836" viewBox="0 0 997 836"><defs><linearGradient id="bg3" x1="0" y1="0" x2="0" y2="1"><stop offset="0" stop-color="#9ccae6"/><stop offset="0.45" stop-color="#c2dae8"/><stop offset="1" stop-color="#f0f0f0"/></linearGradient><linearGradient id="tw" x1="0" y1="0" x2="1" y2="0"><stop offset="0" stop-color="#a86a10"/><stop offset="0.3" stop-color="#e0a018"/><stop offset="0.6" stop-color="#f0c020"/><stop offset="1" stop-color="#b07010"/></linearGradient><linearGradient id="cbar" x1="0" y1="0" x2="0" y2="1"><stop offset="0" stop-color="#dc4c4c"/><stop offset="0.13" stop-color="#6a0000"/><stop offset="0.28" stop-color="#ff5500"/><stop offset="0.4" stop-color="#ffaa00"/><stop offset="0.47" stop-color="#ffff00"/><stop offset="0.55" stop-color="#88bb00"/><stop offset="0.62" stop-color="#007400"/><stop offset="0.68" stop-color="#00c080"/><stop offset="0.73" stop-color="#00ffff"/><stop offset="0.8" stop-color="#0060a0"/><stop offset="0.87" stop-color="#000050"/><stop offset="1" stop-color="#4848e0"/></linearGradient></defs><rect x="0" y="0" width="997" height="836" fill="url(#bg3)"/><style>.c0{fill:#a6d24a;fill-opacity:0.55}.c1{fill:#96cb4e;fill-opacity:0.45}.c2{fill:#88c65a;fill-opacity:0.45}.c3{fill:#88c65a;fill-opacity:0.65}.c4{fill:#96cb4e;fill-opacity:0.55}.c5{fill:#96cb4e;fill-opacity:0.65}.c6{fill:#96cb4e;fill-opacity:0.75}.c7{fill:#a6d24a;fill-opacity:0.65}.c8{fill:#a6d24a;fill-opacity:0.75}.c9{fill:#88c65a;fill-opacity:0.55}.c10{fill:#a6d24a;fill-opacity:0.45}.c11{fill:#88c65a;fill-opacity:0.75}.c12{fill:#bcd850;fill-opacity:0.45}.c13{fill:#bcd850;fill-opacity:0.55}.c14{fill:#bcd850;fill-opacity:0.75}.c15{fill:#bcd850;fill-opacity:0.65}.c16{stroke:#e49a30;stroke-opacity:0.3;stroke-width:1.3px;fill:none}.c17{stroke:#d4d030;stroke-opacity:0.3;stroke-width:1.3px;fill:none}.c18{stroke:#e49a30;stroke-opacity:0.2;stroke-width:1.3px;fill:none}.c19{stroke:#50b040;stroke-opacity:0.5;stroke-width:1.3px;fill:none}.c20{stroke:#50b040;stroke-opacity:0.2;stroke-width:1.3px;fill:none}.c21{stroke:#50b040;stroke-opacity:0.3;stroke-width:1.3px;fill:none}.c22{stroke:#c87060;stroke-opacity:0.3;stroke-width:1.3px;fill:none}.c23{stroke:#9080c0;stroke-opacity:0.3;stroke-width:1.3px;fill:none}.c24{stroke:#e49a30;stroke-opacity:0.5;stroke-width:1.3px;fill:none}.c25{stroke:#d4d030;stroke-opacity:0.5;stroke-width:1.3px;fill:none}.c26{stroke:#40c0a8;stroke-opacity:0.5;stroke-width:1.3px;fill:none}.c27{stroke:#d4d030;stroke-opacity:0.2;stroke-width:1.3px;fill:none}.c28{stroke:#40c0a8;stroke-opacity:0.3;stroke-width:1.3px;fill:none}.c29{stroke:#c87060;stroke-opacity:0.2;stroke-width:1.3px;fill:none}.c30{stroke:#9080c0;stroke-opacity:0.2;stroke-width:1.3px;fill:none}.c31{stroke:#c87060;stroke-opacity:0.5;stroke-width:1.3px;fill:none}.c32{stroke:#40c0a8;stroke-opacity:0.2;stroke-width:1.3px;fill:none}.c33{stroke:#9080c0;stroke-opacity:0.5;stroke-width:1.3px;fill:none}</style><g><path class="c0" d="M0 420.6Q502 260.3 1005 158.8L1005 159.7Q502 261.5 0 422.0Z"/><path class="c1" d="M0 507.2Q502 313.0 1005 166.3L1005 167.2Q502 314.4 0 509.0Z"/><path class="c0" d="M224 835.1Q615 534.1 1005 215.7L1005 216.6Q615 535.5 224 836.9Z"/><path class="c2" d="M139 835.0Q572 540.8 1005 235.2L1005 236.1Q572 542.3 139 837.0Z"/><path class="c1" d="M0 236.5Q502 180.8 1005 144.0L1005 144.9Q502 182.2 0 238.3Z"/><path class="c3" d="M0 427.7Q502 275.4 1005 180.6L1005 181.5Q502 276.6 0 429.3Z"/><path class="c1" d="M454 -1.0Q729 66.6 1005 112.6L1005 113.5Q729 68.1 454 1.0Z"/><path class="c4" d="M253 835.0Q629 557.3 1005 260.8L1005 261.7Q629 558.7 253 837.0Z"/><path class="c1" d="M0 245.9Q502 176.5 1005 128.4L1005 129.3Q502 177.6 0 247.2Z"/><path class="c0" d="M0 438.8Q502 266.9 1005 151.6L1005 152.5Q502 268.2 0 440.5Z"/><path class="c5" d="M0 320.1Q502 220.1 1005 161.3L1005 162.2Q502 221.7 0 322.3Z"/><path class="c6" d="M378 835.2Q691 558.2 1005 256.0L1005 256.9Q691 559.5 378 836.8Z"/><path class="c1" d="M52 835.3Q529 532.1 1005 224.3L1005 225.2Q529 533.3 52 836.7Z"/><path class="c0" d="M0 298.2Q502 199.3 1005 135.9L1005 136.8Q502 200.8 0 300.3Z"/><path class="c0" d="M250 835.0Q628 552.7 1005 251.8L1005 252.7Q628 554.1 250 837.0Z"/><path class="c1" d="M0 327.0Q502 214.5 1005 145.1L1005 146.0Q502 215.6 0 328.4Z"/><path class="c1" d="M127 835.3Q566 527.7 1005 209.4L1005 210.3Q566 528.8 127 836.7Z"/><path class="c4" d="M0 459.6Q502 282.3 1005 158.7L1005 159.6Q502 283.7 0 461.5Z"/><path class="c4" d="M459 -0.7Q732 57.5 1005 94.6L1005 95.5Q732 58.7 459 0.7Z"/><path class="c0" d="M122 -0.9Q564 94.2 1005 121.4L1005 122.3Q564 95.6 122 0.9Z"/><path class="c1" d="M273 835.1Q639 549.8 1005 244.4L1005 245.3Q639 551.1 273 836.9Z"/><path class="c7" d="M0 557.2Q502 347.1 1005 177.7L1005 178.6Q502 348.3 0 558.8Z"/><path class="c8" d="M0 759.9Q502 476.9 1005 205.7L1005 206.6Q502 478.2 0 761.7Z"/><path class="c1" d="M0 671.9Q502 407.9 1005 169.0L1005 169.9Q502 409.5 0 674.1Z"/><path class="c8" d="M209 835.1Q607 539.7 1005 227.9L1005 228.8Q607 541.0 209 836.9Z"/><path class="c1" d="M0 550.2Q502 337.9 1005 167.5L1005 168.4Q502 339.1 0 551.7Z"/><path class="c1" d="M0 779.2Q502 465.6 1005 161.0L1005 161.9Q502 466.9 0 780.8Z"/><path class="c6" d="M99 -0.9Q552 86.5 1005 102.0L1005 102.9Q552 87.8 99 0.9Z"/><path class="c9" d="M0 112.7Q502 140.4 1005 136.5L1005 137.4Q502 141.9 0 114.8Z"/><path class="c6" d="M0 321.4Q502 207.8 1005 136.0L1005 136.9Q502 209.1 0 323.0Z"/><path class="c0" d="M483 -1.0Q744 50.7 1005 83.7L1005 84.6Q744 52.1 483 1.0Z"/><path class="c8" d="M0 318.7Q502 206.7 1005 135.6L1005 136.5Q502 207.9 0 320.2Z"/><path class="c7" d="M134 835.1Q570 544.6 1005 243.1L1005 244.0Q570 545.9 134 836.9Z"/><path class="c10" d="M0 211.2Q502 165.8 1005 132.5L1005 133.4Q502 167.2 0 213.2Z"/><path class="c1" d="M0 149.1Q502 122.1 1005 85.3L1005 86.2Q502 123.5 0 151.0Z"/><path class="c6" d="M0 716.1Q502 455.6 1005 213.4L1005 214.3Q502 456.8 0 717.6Z"/><path class="c5" d="M0 802.3Q502 501.9 1005 206.8L1005 207.7Q502 503.3 0 804.1Z"/><path class="c9" d="M306 835.3Q656 560.0 1005 263.0L1005 263.9Q656 561.1 306 836.7Z"/><path class="c10" d="M286 835.2Q645 564.3 1005 273.1L1005 274.0Q645 565.6 286 836.8Z"/><path class="c0" d="M0 590.4Q502 356.2 1005 158.5L1005 159.4Q502 357.4 0 591.8Z"/><path class="c6" d="M189 834.9Q597 545.1 1005 240.4L1005 241.3Q597 546.7 189 837.1Z"/><path class="c2" d="M351 835.2Q678 555.9 1005 252.5L1005 253.4Q678 557.1 351 836.8Z"/><path class="c10" d="M393 -0.7Q699 59.8 1005 92.2L1005 93.1Q699 61.0 393 0.7Z"/><path class="c0" d="M191 835.1Q598 555.2 1005 260.4L1005 261.3Q598 556.5 191 836.9Z"/><path class="c6" d="M384 835.1Q694 544.3 1005 227.5L1005 228.4Q694 545.7 384 836.9Z"/><path class="c9" d="M0 765.6Q502 475.2 1005 195.7L1005 196.6Q502 476.5 0 767.4Z"/><path class="c4" d="M156 835.2Q580 530.1 1005 212.2L1005 213.1Q580 531.4 156 836.8Z"/><path class="c1" d="M109 -0.9Q557 92.7 1005 116.0L1005 116.9Q557 94.0 109 0.9Z"/><path class="c8" d="M339 835.3Q672 548.8 1005 238.6L1005 239.5Q672 550.0 339 836.7Z"/><path class="c11" d="M0 4.0Q502 109.2 1005 116.2L1005 117.1Q502 110.4 0 5.5Z"/><path class="c11" d="M0 450.7Q502 278.5 1005 161.1L1005 162.0Q502 279.8 0 452.5Z"/><path class="c10" d="M267 -0.7Q636 69.9 1005 95.9L1005 96.8Q636 71.0 267 0.7Z"/><path class="c10" d="M0 174.8Q502 157.0 1005 141.7L1005 142.6Q502 158.5 0 176.9Z"/><path class="c6" d="M0 669.9Q502 401.4 1005 158.3L1005 159.2Q502 402.9 0 671.9Z"/><path class="c4" d="M0 658.6Q502 410.4 1005 188.9L1005 189.8Q502 411.9 0 660.7Z"/><path class="c9" d="M0 652.9Q502 420.7 1005 215.7L1005 216.6Q502 421.9 0 654.5Z"/><path class="c9" d="M0 219.9Q502 193.1 1005 180.8L1005 181.7Q502 194.6 0 222.0Z"/><path class="c0" d="M0 326.5Q502 216.5 1005 149.4L1005 150.3Q502 217.7 0 328.0Z"/><path class="c5" d="M0 676.7Q502 435.0 1005 217.2L1005 218.1Q502 436.2 0 678.1Z"/><path class="c1" d="M0 498.2Q502 302.7 1005 156.1L1005 157.0Q502 304.1 0 499.9Z"/><path class="c0" d="M677 -0.7Q841 37.3 1005 70.8L1005 71.7Q841 38.5 677 0.7Z"/><path class="c1" d="M0 58.2Q502 113.9 1005 104.8L1005 105.7Q502 115.1 0 59.6Z"/><path class="c5" d="M325 -0.7Q665 69.8 1005 103.6L1005 104.5Q665 70.9 325 0.7Z"/><path class="c8" d="M0 782.9Q502 502.1 1005 229.4L1005 230.3Q502 503.6 0 785.0Z"/><path class="c11" d="M81 835.1Q543 533.8 1005 225.5L1005 226.4Q543 535.2 81 836.9Z"/><path class="c1" d="M0 39.0Q502 122.1 1005 128.6L1005 129.5Q502 123.5 0 41.0Z"/><path class="c3" d="M60 835.0Q533 527.9 1005 215.5L1005 216.4Q533 529.4 60 837.0Z"/><path class="c5" d="M42 835.2Q523 524.4 1005 209.9L1005 210.8Q523 525.6 42 836.8Z"/><path class="c5" d="M305 -1.1Q655 62.7 1005 87.3L1005 88.2Q655 64.3 305 1.1Z"/><path class="c8" d="M0 732.1Q502 446.5 1005 176.9L1005 177.8Q502 447.8 0 733.9Z"/><path class="c10" d="M0 486.3Q502 309.9 1005 183.4L1005 184.3Q502 311.3 0 488.2Z"/><path class="c4" d="M3 835.1Q504 532.5 1005 229.7L1005 230.6Q504 533.9 3 836.9Z"/><path class="c10" d="M0 162.7Q502 141.6 1005 119.1L1005 120.0Q502 143.0 0 164.5Z"/><path class="c10" d="M106 835.2Q556 549.1 1005 254.2L1005 255.1Q556 550.4 106 836.8Z"/><path class="c10" d="M294 835.2Q650 568.7 1005 281.6L1005 282.5Q650 570.0 294 836.8Z"/><path class="c8" d="M0 481.8Q502 300.1 1005 169.1L1005 170.0Q502 301.5 0 483.7Z"/><path class="c4" d="M0 578.3Q502 354.0 1005 167.7L1005 168.6Q502 355.4 0 580.1Z"/><path class="c6" d="M0 684.0Q502 425.2 1005 189.5L1005 190.4Q502 426.4 0 685.4Z"/><path class="c6" d="M368 835.2Q686 585.6 1005 312.3L1005 313.2Q686 586.8 368 836.8Z"/><path class="c11" d="M27 835.3Q516 532.5 1005 227.3L1005 228.2Q516 533.7 27 836.7Z"/><path class="c4" d="M0 369.2Q502 246.3 1005 177.9L1005 178.8Q502 247.5 0 370.6Z"/><path class="c8" d="M0 406.6Q502 250.7 1005 155.4L1005 156.3Q502 252.0 0 408.2Z"/><path class="c4" d="M10 835.2Q508 524.9 1005 213.7L1005 214.6Q508 526.1 10 836.8Z"/><path class="c5" d="M241 -0.9Q623 62.7 1005 78.2L1005 79.1Q623 64.1 241 0.9Z"/><path class="c4" d="M0 818.1Q502 522.1 1005 228.7L1005 229.6Q502 523.4 0 819.9Z"/><path class="c1" d="M0 757.2Q502 480.9 1005 216.8L1005 217.7Q502 482.1 0 758.6Z"/><path class="c6" d="M375 -0.8Q690 61.1 1005 92.8L1005 93.7Q690 62.4 375 0.8Z"/><path class="c11" d="M0 253.8Q502 195.4 1005 160.3L1005 161.2Q502 196.8 0 255.9Z"/><path class="c4" d="M0 670.4Q502 428.0 1005 210.5L1005 211.4Q502 429.3 0 672.0Z"/><path class="c0" d="M0 714.0Q502 451.5 1005 207.5L1005 208.4Q502 452.8 0 715.7Z"/><path class="c1" d="M0 299.2Q502 214.1 1005 164.5L1005 165.4Q502 215.4 0 300.9Z"/><path class="c5" d="M0 589.1Q502 360.6 1005 168.5L1005 169.4Q502 361.8 0 590.6Z"/><path class="c5" d="M0 203.7Q502 155.9 1005 118.3L1005 119.2Q502 157.3 0 205.5Z"/><path class="c7" d="M0 237.7Q502 182.5 1005 146.4L1005 147.3Q502 183.8 0 239.4Z"/><path class="c4" d="M97 835.3Q551 537.4 1005 231.3L1005 232.2Q551 538.6 97 836.7Z"/><path class="c0" d="M134 835.0Q569 551.5 1005 257.0L1005 257.9Q569 552.9 134 837.0Z"/><path class="c0" d="M0 297.9Q502 204.2 1005 145.7L1005 146.6Q502 205.4 0 299.3Z"/><path class="c1" d="M32 835.1Q519 529.5 1005 221.1L1005 222.0Q519 530.9 32 836.9Z"/><path class="c5" d="M0 588.1Q502 350.7 1005 150.1L1005 151.0Q502 352.1 0 590.1Z"/><path class="c6" d="M1 835.2Q503 540.0 1005 244.7L1005 245.6Q503 541.2 1 836.8Z"/><path class="c5" d="M0 82.0Q502 121.5 1005 110.8L1005 111.7Q502 123.0 0 84.0Z"/><path class="c5" d="M0 472.3Q502 302.3 1005 184.0L1005 184.9Q502 303.8 0 474.3Z"/><path class="c12" d="M101 835.1Q553 531.5 1005 219.2L1005 220.1Q553 532.8 101 836.9Z"/><path class="c4" d="M0 796.1Q502 496.7 1005 203.6L1005 204.5Q502 498.3 0 798.3Z"/><path class="c5" d="M0 308.4Q502 211.8 1005 153.3L1005 154.2Q502 213.1 0 310.0Z"/><path class="c4" d="M218 834.9Q611 538.8 1005 225.6L1005 226.5Q611 540.3 218 837.1Z"/><path class="c3" d="M24 835.3Q514 537.6 1005 237.8L1005 238.7Q514 538.8 24 836.7Z"/><path class="c5" d="M0 104.0Q502 125.7 1005 110.3L1005 111.2Q502 127.0 0 105.7Z"/><path class="c7" d="M254 835.1Q629 520.1 1005 185.4L1005 186.3Q629 521.4 254 836.9Z"/><path class="c10" d="M0 347.8Q502 224.9 1005 150.8L1005 151.7Q502 226.3 0 349.6Z"/><path class="c7" d="M307 835.0Q656 550.0 1005 243.0L1005 243.9Q656 551.5 307 837.0Z"/><path class="c11" d="M513 -1.0Q759 41.5 1005 68.2L1005 69.1Q759 43.0 513 1.0Z"/><path class="c5" d="M0 800.8Q502 509.2 1005 223.0L1005 223.9Q502 510.7 0 802.9Z"/><path class="c10" d="M107 835.3Q556 552.5 1005 260.7L1005 261.6Q556 553.6 107 836.7Z"/><path class="c9" d="M49 835.3Q527 544.8 1005 249.9L1005 250.8Q527 545.9 49 836.7Z"/><path class="c7" d="M0 154.5Q502 146.7 1005 132.2L1005 133.1Q502 147.8 0 155.8Z"/><path class="c6" d="M0 755.8Q502 473.2 1005 203.0L1005 203.9Q502 474.4 0 757.3Z"/><path class="c5" d="M139 834.9Q572 540.5 1005 234.6L1005 235.5Q572 542.0 139 837.1Z"/><path class="c6" d="M0 734.6Q502 448.2 1005 177.6L1005 178.5Q502 449.3 0 735.9Z"/><path class="c8" d="M0 310.5Q502 202.6 1005 133.4L1005 134.3Q502 204.1 0 312.5Z"/><path class="c6" d="M174 834.9Q590 523.2 1005 197.1L1005 198.0Q590 524.7 174 837.1Z"/><path class="c10" d="M19 835.2Q512 536.7 1005 236.4L1005 237.3Q512 537.9 19 836.8Z"/><path class="c7" d="M0 52.3Q502 130.7 1005 140.4L1005 141.3Q502 132.0 0 54.0Z"/><path class="c4" d="M0 318.6Q502 219.6 1005 161.2L1005 162.1Q502 220.7 0 320.0Z"/><path class="c4" d="M0 347.6Q502 217.9 1005 137.1L1005 138.0Q502 219.1 0 348.9Z"/><path class="c9" d="M366 835.1Q685 556.1 1005 252.3L1005 253.2Q685 557.4 366 836.9Z"/><path class="c6" d="M44 835.1Q524 526.9 1005 214.9L1005 215.8Q524 528.3 44 836.9Z"/><path class="c1" d="M0 821.0Q502 522.0 1005 225.2L1005 226.1Q502 523.2 0 822.5Z"/><path class="c5" d="M0 35.8Q502 114.7 1005 115.2L1005 116.1Q502 116.2 0 37.8Z"/><path class="c7" d="M129 835.1Q567 530.6 1005 215.3L1005 216.2Q567 531.9 129 836.9Z"/><path class="c13" d="M0 274.8Q502 202.5 1005 159.1L1005 160.0Q502 203.9 0 276.6Z"/><path class="c8" d="M665 -1.0Q835 38.9 1005 73.6L1005 74.5Q835 40.3 665 1.0Z"/><path class="c4" d="M0 240.9Q502 182.7 1005 144.5L1005 145.4Q502 183.9 0 242.4Z"/><path class="c5" d="M0 590.9Q502 384.8 1005 214.4L1005 215.3Q502 386.2 0 592.8Z"/><path class="c5" d="M199 -1.0Q602 90.9 1005 127.7L1005 128.6Q602 92.4 199 1.0Z"/><path class="c4" d="M0 31.4Q502 109.8 1005 106.9L1005 107.8Q502 111.0 0 32.9Z"/><path class="c2" d="M0 739.8Q502 463.4 1005 201.9L1005 202.8Q502 464.6 0 741.2Z"/><path class="c6" d="M0 361.7Q502 235.0 1005 160.8L1005 161.7Q502 236.2 0 363.1Z"/><path class="c10" d="M0 518.6Q502 316.3 1005 160.0L1005 160.9Q502 317.7 0 520.6Z"/><path class="c5" d="M74 835.2Q540 528.6 1005 215.6L1005 216.5Q540 529.9 74 836.8Z"/><path class="c8" d="M0 670.3Q502 408.4 1005 171.6L1005 172.5Q502 409.8 0 672.3Z"/><path class="c3" d="M173 835.1Q589 533.7 1005 218.2L1005 219.1Q589 535.0 173 836.9Z"/><path class="c8" d="M0 390.9Q502 244.3 1005 158.5L1005 159.4Q502 245.7 0 392.9Z"/><path class="c1" d="M0 632.0Q502 401.2 1005 200.7L1005 201.6Q502 402.7 0 634.0Z"/><path class="c4" d="M0 114.1Q502 129.7 1005 114.4L1005 115.3Q502 131.1 0 115.9Z"/><path class="c7" d="M0 718.5Q502 450.8 1005 201.1L1005 202.0Q502 452.3 0 720.5Z"/><path class="c10" d="M0 375.1Q502 231.9 1005 145.2L1005 146.1Q502 233.4 0 377.2Z"/><path class="c12" d="M316 -0.8Q660 70.2 1005 103.4L1005 104.3Q660 71.4 316 0.8Z"/><path class="c4" d="M0 11.7Q502 108.2 1005 111.3L1005 112.2Q502 109.3 0 13.1Z"/><path class="c14" d="M644 -1.0Q824 50.6 1005 95.8L1005 96.7Q824 52.1 644 1.0Z"/><path class="c5" d="M0 56.1Q502 113.5 1005 104.8L1005 105.7Q502 115.0 0 58.2Z"/><path class="c0" d="M717 -0.7Q861 33.3 1005 64.7L1005 65.6Q861 34.5 717 0.7Z"/><path class="c9" d="M279 -0.8Q642 84.0 1005 125.8L1005 126.7Q642 85.2 279 0.8Z"/><path class="c2" d="M321 835.0Q663 552.2 1005 246.7L1005 247.6Q663 553.6 321 837.0Z"/><path class="c10" d="M0 104.0Q502 121.9 1005 102.9L1005 103.8Q502 123.3 0 105.8Z"/><path class="c1" d="M0 94.6Q502 121.2 1005 105.0L1005 105.9Q502 122.5 0 96.3Z"/><path class="c5" d="M424 -0.9Q715 60.2 1005 96.6L1005 97.5Q715 61.6 424 0.9Z"/><path class="c13" d="M0 378.3Q502 233.8 1005 146.7L1005 147.6Q502 235.1 0 379.9Z"/><path class="c12" d="M0 167.6Q502 159.5 1005 152.0L1005 152.9Q502 160.8 0 169.5Z"/><path class="c1" d="M262 835.1Q634 569.0 1005 283.9L1005 284.8Q634 570.3 262 836.9Z"/><path class="c0" d="M0 701.3Q502 422.4 1005 164.4L1005 165.3Q502 423.8 0 703.1Z"/><path class="c7" d="M50 835.0Q528 541.3 1005 243.1L1005 244.0Q528 542.7 50 837.0Z"/><path class="c6" d="M79 835.2Q542 541.4 1005 240.8L1005 241.7Q542 542.6 79 836.8Z"/><path class="c3" d="M0 56.1Q502 117.4 1005 112.5L1005 113.4Q502 118.6 0 57.6Z"/><path class="c1" d="M709 -0.7Q857 44.3 1005 86.3L1005 87.2Q857 45.5 709 0.7Z"/><path class="c4" d="M249 835.3Q627 527.9 1005 201.2L1005 202.1Q627 529.0 249 836.7Z"/><path class="c7" d="M0 380.9Q502 224.1 1005 125.6L1005 126.5Q502 225.5 0 382.9Z"/><path class="c6" d="M0 487.4Q502 298.3 1005 159.3L1005 160.2Q502 299.7 0 489.3Z"/><path class="c5" d="M137 835.0Q571 536.3 1005 226.1L1005 227.0Q571 537.7 137 837.0Z"/><path class="c0" d="M0 787.2Q502 511.2 1005 242.6L1005 243.5Q502 512.3 0 788.7Z"/><path class="c9" d="M0 424.9Q502 266.9 1005 167.1L1005 168.0Q502 268.1 0 426.3Z"/><path class="c0" d="M0 571.8Q502 361.4 1005 189.6L1005 190.5Q502 362.6 0 573.3Z"/><path class="c5" d="M217 -0.8Q611 76.4 1005 101.6L1005 102.5Q611 77.6 217 0.8Z"/><path class="c10" d="M357 835.0Q681 570.9 1005 283.1L1005 284.0Q681 572.3 357 837.0Z"/><path class="c6" d="M0 588.0Q502 365.4 1005 179.3L1005 180.2Q502 366.9 0 590.1Z"/><path class="c4" d="M0 71.8Q502 121.5 1005 114.6L1005 115.5Q502 122.8 0 73.5Z"/><path class="c8" d="M0 344.1Q502 212.0 1005 128.0L1005 128.9Q502 213.6 0 346.3Z"/><path class="c5" d="M0 751.3Q502 479.9 1005 221.4L1005 222.3Q502 481.1 0 752.9Z"/><path class="c5" d="M0 334.0Q502 216.5 1005 144.1L1005 145.0Q502 217.6 0 335.3Z"/><path class="c2" d="M0 822.7Q502 525.2 1005 229.6L1005 230.5Q502 526.3 0 824.1Z"/><path class="c1" d="M0 230.5Q502 182.2 1005 151.0L1005 151.9Q502 183.4 0 232.0Z"/><path class="c4" d="M0 647.4Q502 415.1 1005 210.8L1005 211.7Q502 416.3 0 648.9Z"/><path class="c7" d="M0 379.2Q502 235.0 1005 148.4L1005 149.3Q502 236.3 0 380.8Z"/><path class="c8" d="M0 419.5Q502 255.6 1005 150.7L1005 151.6Q502 256.9 0 421.1Z"/><path class="c5" d="M0 324.3Q502 211.4 1005 140.9L1005 141.8Q502 212.8 0 326.1Z"/><path class="c5" d="M113 -0.9Q559 76.2 1005 84.1L1005 85.0Q559 77.6 113 0.9Z"/><path class="c5" d="M470 -0.8Q737 54.5 1005 89.7L1005 90.6Q737 55.7 470 0.8Z"/><path class="c5" d="M0 384.5Q502 240.6 1005 155.7L1005 156.6Q502 241.8 0 386.1Z"/><path class="c10" d="M275 835.0Q640 546.0 1005 236.7L1005 237.6Q640 547.5 275 837.0Z"/><path class="c3" d="M249 835.0Q627 541.5 1005 229.2L1005 230.1Q627 543.0 249 837.0Z"/><path class="c1" d="M683 -0.8Q844 43.0 1005 82.5L1005 83.4Q844 44.2 683 0.8Z"/><path class="c2" d="M161 835.3Q583 545.9 1005 243.6L1005 244.5Q583 547.1 161 836.7Z"/><path class="c0" d="M0 266.8Q502 185.6 1005 131.3L1005 132.2Q502 187.0 0 268.7Z"/><path class="c4" d="M0 321.2Q502 222.7 1005 165.7L1005 166.6Q502 224.1 0 323.2Z"/><path class="c6" d="M0 675.4Q502 421.0 1005 190.9L1005 191.8Q502 422.5 0 677.5Z"/><path class="c5" d="M0 317.7Q502 210.6 1005 144.1L1005 145.0Q502 211.8 0 319.3Z"/><path class="c4" d="M0 286.4Q502 198.0 1005 141.8L1005 142.7Q502 199.2 0 287.9Z"/><path class="c6" d="M0 81.4Q502 113.3 1005 94.7L1005 95.6Q502 114.8 0 83.5Z"/><path class="c3" d="M42 835.2Q523 548.1 1005 257.3L1005 258.2Q523 549.3 42 836.8Z"/><path class="c4" d="M100 835.0Q553 543.2 1005 243.0L1005 243.9Q553 544.7 100 837.0Z"/><path class="c5" d="M20 -0.8Q512 95.9 1005 105.7L1005 106.6Q512 97.2 20 0.8Z"/><path class="c0" d="M0 734.8Q502 451.5 1005 183.8L1005 184.7Q502 453.0 0 736.9Z"/><path class="c11" d="M368 835.3Q687 564.1 1005 268.3L1005 269.2Q687 565.2 368 836.7Z"/><path class="c6" d="M0 667.3Q502 412.4 1005 183.1L1005 184.0Q502 413.7 0 668.8Z"/><path class="c9" d="M0 686.3Q502 423.9 1005 184.3L1005 185.2Q502 425.4 0 688.4Z"/><path class="c7" d="M134 835.0Q569 526.0 1005 205.7L1005 206.6Q569 527.4 134 837.0Z"/><path class="c1" d="M186 -0.9Q596 73.3 1005 90.8L1005 91.7Q596 74.7 186 0.9Z"/><path class="c5" d="M0 772.5Q502 487.9 1005 213.0L1005 213.9Q502 489.2 0 774.4Z"/><path class="c1" d="M0 339.1Q502 218.8 1005 145.0L1005 145.9Q502 220.3 0 341.2Z"/><path class="c1" d="M0 43.1Q502 110.6 1005 104.2L1005 105.1Q502 112.1 0 45.2Z"/><path class="c3" d="M173 835.2Q589 552.7 1005 256.5L1005 257.4Q589 553.9 173 836.8Z"/><path class="c0" d="M0 813.5Q502 524.7 1005 239.4L1005 240.3Q502 526.1 0 815.2Z"/><path class="c5" d="M93 835.0Q549 540.3 1005 237.7L1005 238.6Q549 541.7 93 837.0Z"/><path class="c7" d="M0 391.5Q502 241.1 1005 151.6L1005 152.5Q502 242.5 0 393.4Z"/><path class="c5" d="M0 463.8Q502 290.2 1005 169.5L1005 170.4Q502 291.6 0 465.7Z"/><path class="c14" d="M775 -0.9Q890 37.5 1005 75.3L1005 76.2Q890 38.8 775 0.9Z"/><path class="c5" d="M0 365.4Q502 226.1 1005 140.7L1005 141.6Q502 227.4 0 366.9Z"/><path class="c2" d="M295 835.3Q650 563.2 1005 270.1L1005 271.0Q650 564.3 295 836.7Z"/><path class="c4" d="M0 284.3Q502 203.6 1005 154.4L1005 155.3Q502 204.8 0 285.7Z"/><path class="c6" d="M0 292.3Q502 194.9 1005 131.2L1005 132.1Q502 196.1 0 294.0Z"/><path class="c12" d="M97 834.9Q551 530.8 1005 218.4L1005 219.3Q551 532.4 97 837.1Z"/><path class="c10" d="M0 463.7Q502 289.1 1005 167.5L1005 168.4Q502 290.4 0 465.5Z"/><path class="c3" d="M0 92.0Q502 133.1 1005 129.8L1005 130.7Q502 134.4 0 93.8Z"/><path class="c7" d="M0 416.7Q502 266.4 1005 175.1L1005 176.0Q502 267.7 0 418.3Z"/><path class="c0" d="M7 835.3Q506 540.4 1005 244.9L1005 245.8Q506 541.6 7 836.7Z"/><path class="c5" d="M0 271.4Q502 193.4 1005 143.6L1005 144.5Q502 195.0 0 273.5Z"/><path class="c1" d="M150 835.0Q578 537.8 1005 228.3L1005 229.2Q578 539.3 150 837.0Z"/><path class="c6" d="M268 -1.0Q637 81.9 1005 120.2L1005 121.1Q637 83.3 268 1.0Z"/><path class="c9" d="M220 835.0Q613 556.5 1005 261.2L1005 262.1Q613 557.9 220 837.0Z"/><path class="c7" d="M0 825.5Q502 520.4 1005 216.9L1005 217.8Q502 521.9 0 827.6Z"/><path class="c6" d="M174 835.2Q590 528.9 1005 208.4L1005 209.3Q590 530.2 174 836.8Z"/><path class="c10" d="M0 442.1Q502 270.5 1005 154.9L1005 155.8Q502 271.8 0 443.9Z"/><path class="c7" d="M638 -0.7Q822 49.7 1005 93.4L1005 94.3Q822 50.8 638 0.7Z"/><path class="c8" d="M0 444.4Q502 269.3 1005 150.0L1005 150.9Q502 270.4 0 445.7Z"/><path class="c4" d="M338 835.0Q671 559.5 1005 260.7L1005 261.6Q671 560.9 338 837.0Z"/><path class="c1" d="M89 835.0Q547 502.2 1005 161.5L1005 162.4Q547 503.6 89 837.0Z"/><path class="c9" d="M0 126.3Q502 136.7 1005 123.6L1005 124.5Q502 138.0 0 128.0Z"/><path class="c6" d="M273 -1.0Q639 55.8 1005 69.3L1005 70.2Q639 57.3 273 1.0Z"/><path class="c0" d="M50 835.0Q527 507.1 1005 174.7L1005 175.6Q527 508.6 50 837.0Z"/><path class="c5" d="M0 21.2Q502 97.2 1005 85.8L1005 86.7Q502 98.3 0 22.6Z"/><path class="c2" d="M0 25.8Q502 99.3 1005 88.2L1005 89.1Q502 100.4 0 27.2Z"/><path class="c14" d="M0 707.2Q502 452.6 1005 217.4L1005 218.3Q502 453.8 0 708.8Z"/><path class="c13" d="M116 835.0Q561 518.1 1005 191.2L1005 192.1Q561 519.5 116 837.0Z"/><path class="c15" d="M0 772.6Q502 490.1 1005 217.4L1005 218.3Q502 491.3 0 774.1Z"/><path class="c1" d="M0 60.4Q502 107.7 1005 91.6L1005 92.5Q502 109.1 0 62.3Z"/><path class="c10" d="M0 379.9Q502 232.8 1005 143.5L1005 144.4Q502 234.3 0 382.0Z"/><path class="c5" d="M0 265.6Q502 197.7 1005 156.4L1005 157.3Q502 199.2 0 267.7Z"/><path class="c6" d="M415 -0.9Q710 65.3 1005 105.8L1005 106.7Q710 66.7 415 0.9Z"/><path class="c5" d="M0 414.7Q502 257.2 1005 159.2L1005 160.1Q502 258.5 0 416.3Z"/><path class="c5" d="M0 774.2Q502 493.6 1005 222.5L1005 223.4Q502 494.8 0 775.8Z"/><path class="c0" d="M209 835.3Q607 560.7 1005 270.2L1005 271.1Q607 561.9 209 836.7Z"/><path class="c7" d="M0 290.7Q502 205.2 1005 153.1L1005 154.0Q502 206.8 0 292.9Z"/><path class="c1" d="M115 835.2Q560 537.7 1005 230.5L1005 231.4Q560 539.0 115 836.8Z"/><path class="c12" d="M0 438.4Q502 260.9 1005 140.1L1005 141.0Q502 262.5 0 440.6Z"/><path class="c10" d="M0 337.1Q502 212.5 1005 133.7L1005 134.6Q502 213.6 0 338.5Z"/><path class="c13" d="M0 434.8Q502 264.0 1005 150.3L1005 151.2Q502 265.3 0 436.5Z"/><path class="c10" d="M137 835.3Q571 533.6 1005 220.6L1005 221.5Q571 534.8 137 836.7Z"/><path class="c11" d="M0 707.0Q502 437.4 1005 187.5L1005 188.4Q502 438.8 0 709.0Z"/><path class="c12" d="M213 -0.7Q609 73.1 1005 94.4L1005 95.3Q609 74.3 213 0.7Z"/><path class="c10" d="M0 363.0Q502 215.7 1005 121.7L1005 122.6Q502 216.9 0 364.6Z"/><path class="c5" d="M0 500.6Q502 307.6 1005 163.0L1005 163.9Q502 308.9 0 502.2Z"/><path class="c4" d="M59 835.1Q532 538.1 1005 235.9L1005 236.8Q532 539.5 59 836.9Z"/><path class="c4" d="M126 -0.8Q565 74.8 1005 83.4L1005 84.3Q565 76.0 126 0.8Z"/><path class="c4" d="M0 653.4Q502 412.9 1005 199.8L1005 200.7Q502 414.4 0 655.4Z"/><path class="c8" d="M263 -0.7Q634 75.5 1005 106.4L1005 107.3Q634 76.6 263 0.7Z"/><path class="c6" d="M0 199.4Q502 147.7 1005 104.9L1005 105.8Q502 148.9 0 200.9Z"/><path class="c9" d="M0 73.6Q502 114.5 1005 100.0L1005 100.9Q502 115.9 0 75.5Z"/><path class="c11" d="M219 835.1Q612 531.7 1005 211.2L1005 212.1Q612 533.1 219 836.9Z"/><path class="c8" d="M0 150.7Q502 143.7 1005 127.9L1005 128.8Q502 145.0 0 152.3Z"/><path class="c6" d="M0 388.5Q502 250.7 1005 172.9L1005 173.8Q502 252.1 0 390.3Z"/><path class="c5" d="M0 343.7Q502 225.7 1005 155.3L1005 156.2Q502 226.9 0 345.3Z"/><path class="c1" d="M312 835.3Q659 535.9 1005 213.7L1005 214.6Q659 537.0 312 836.7Z"/><path class="c5" d="M0 626.2Q502 393.1 1005 191.3L1005 192.2Q502 394.3 0 627.7Z"/><path class="c5" d="M38 835.3Q521 535.4 1005 232.1L1005 233.0Q521 536.5 38 836.7Z"/><path class="c5" d="M0 154.6Q502 147.5 1005 134.1L1005 135.0Q502 148.9 0 156.4Z"/><path class="c4" d="M322 -1.0Q664 70.2 1005 104.4L1005 105.3Q664 71.7 322 1.0Z"/><path class="c10" d="M75 835.2Q540 528.7 1005 215.7L1005 216.6Q540 530.0 75 836.8Z"/><path class="c1" d="M0 256.4Q502 175.5 1005 118.7L1005 119.6Q502 176.9 0 258.5Z"/><path class="c9" d="M0 459.4Q502 267.4 1005 129.6L1005 130.5Q502 268.9 0 461.4Z"/><path class="c1" d="M0 403.1Q502 252.3 1005 162.4L1005 163.3Q502 253.6 0 404.8Z"/><path class="c1" d="M234 835.0Q620 545.0 1005 237.1L1005 238.0Q620 546.4 234 837.0Z"/><path class="c4" d="M0 340.1Q502 209.9 1005 126.5L1005 127.4Q502 211.0 0 341.5Z"/><path class="c6" d="M0 160.3Q502 135.0 1005 106.8L1005 107.7Q502 136.3 0 162.0Z"/><path class="c0" d="M0 766.2Q502 478.5 1005 201.5L1005 202.4Q502 479.9 0 768.2Z"/><path class="c11" d="M126 835.1Q566 526.5 1005 207.2L1005 208.1Q566 527.8 126 836.9Z"/><path class="c8" d="M0 619.5Q502 383.4 1005 179.6L1005 180.5Q502 384.7 0 621.1Z"/><path class="c5" d="M0 141.7Q502 135.8 1005 115.6L1005 116.5Q502 137.0 0 143.4Z"/><path class="c14" d="M0 805.7Q502 493.0 1005 185.1L1005 186.0Q502 494.3 0 807.3Z"/><path class="c15" d="M0 664.8Q502 412.3 1005 185.7L1005 186.6Q502 413.7 0 666.6Z"/><path class="c7" d="M0 565.2Q502 372.7 1005 219.3L1005 220.2Q502 373.8 0 566.6Z"/><path class="c7" d="M69 835.3Q537 537.4 1005 233.5L1005 234.4Q537 538.5 69 836.7Z"/><path class="c3" d="M41 835.2Q523 505.6 1005 172.2L1005 173.1Q523 506.9 41 836.8Z"/><path class="c7" d="M313 835.3Q659 562.1 1005 267.1L1005 268.0Q659 563.3 313 836.7Z"/><path class="c1" d="M223 835.2Q614 551.4 1005 250.6L1005 251.5Q614 552.6 223 836.8Z"/><path class="c2" d="M0 503.3Q502 328.9 1005 201.9L1005 202.8Q502 330.2 0 505.1Z"/><path class="c7" d="M0 831.1Q502 499.7 1005 168.9L1005 169.8Q502 500.9 0 832.7Z"/><path class="c8" d="M0 383.6Q502 230.4 1005 136.2L1005 137.1Q502 231.7 0 385.3Z"/><path class="c7" d="M0 300.8Q502 186.5 1005 108.4L1005 109.3Q502 188.0 0 302.9Z"/><path class="c7" d="M429 -1.1Q717 54.6 1005 86.1L1005 87.0Q717 56.1 429 1.1Z"/><path class="c4" d="M299 -0.7Q652 76.6 1005 113.8L1005 114.7Q652 77.8 299 0.7Z"/><path class="c2" d="M651 -0.8Q828 38.8 1005 72.6L1005 73.5Q828 40.1 651 0.8Z"/><path class="c4" d="M0 773.7Q502 492.6 1005 221.0L1005 221.9Q502 493.9 0 775.5Z"/><path class="c0" d="M412 -1.1Q709 57.2 1005 89.5L1005 90.4Q709 58.7 412 1.1Z"/><path class="c8" d="M0 549.9Q502 351.5 1005 194.5L1005 195.4Q502 352.9 0 551.9Z"/><path class="c4" d="M379 834.9Q692 566.0 1005 272.1L1005 273.0Q692 567.5 379 837.1Z"/><path class="c2" d="M193 835.3Q599 545.7 1005 240.9L1005 241.8Q599 546.8 193 836.7Z"/><path class="c5" d="M465 -0.7Q735 50.1 1005 80.5L1005 81.4Q735 51.3 465 0.7Z"/><path class="c5" d="M0 332.3Q502 215.8 1005 143.9L1005 144.8Q502 217.1 0 334.1Z"/><path class="c9" d="M0 249.9Q502 182.1 1005 136.5L1005 137.4Q502 183.2 0 251.4Z"/><path class="c5" d="M0 69.0Q502 134.0 1005 140.6L1005 141.5Q502 135.3 0 70.8Z"/><path class="c5" d="M0 598.1Q502 378.6 1005 194.2L1005 195.1Q502 380.1 0 600.0Z"/><path class="c0" d="M0 759.4Q502 475.3 1005 203.2L1005 204.1Q502 476.6 0 761.0Z"/><path class="c4" d="M0 280.6Q502 196.4 1005 142.7L1005 143.6Q502 197.6 0 282.2Z"/><path class="c10" d="M78 835.1Q542 531.4 1005 220.8L1005 221.7Q542 532.7 78 836.9Z"/><path class="c1" d="M119 835.2Q562 546.8 1005 248.5L1005 249.4Q562 548.1 119 836.8Z"/><path class="c4" d="M18 -0.7Q511 99.7 1005 112.6L1005 113.5Q511 100.8 18 0.7Z"/><path class="c8" d="M0 802.8Q502 509.6 1005 221.5L1005 222.4Q502 510.9 0 804.5Z"/><path class="c15" d="M0 820.6Q502 536.3 1005 254.3L1005 255.2Q502 537.7 0 822.5Z"/><path class="c8" d="M196 -1.0Q601 74.5 1005 94.8L1005 95.7Q601 75.9 196 1.0Z"/><path class="c5" d="M0 528.7Q502 334.3 1005 184.4L1005 185.3Q502 335.9 0 530.8Z"/><path class="c10" d="M288 835.2Q646 576.9 1005 298.4L1005 299.3Q646 578.1 288 836.8Z"/><path class="c8" d="M82 835.1Q543 540.6 1005 239.1L1005 240.0Q543 541.9 82 836.9Z"/><path class="c8" d="M0 38.9Q502 110.7 1005 106.0L1005 106.9Q502 112.1 0 40.7Z"/><path class="c6" d="M0 345.6Q502 210.5 1005 123.8L1005 124.7Q502 211.9 0 347.6Z"/><path class="c5" d="M0 488.5Q502 301.9 1005 165.3L1005 166.2Q502 303.5 0 490.6Z"/><path class="c5" d="M0 251.7Q502 176.1 1005 123.3L1005 124.2Q502 177.3 0 253.2Z"/><path class="c7" d="M97 -0.8Q551 82.0 1005 92.6L1005 93.5Q551 83.3 97 0.8Z"/><path class="c9" d="M258 835.1Q632 561.0 1005 267.9L1005 268.8Q632 562.3 258 836.9Z"/><path class="c6" d="M0 579.6Q502 346.5 1005 151.5L1005 152.4Q502 347.7 0 581.0Z"/><path class="c1" d="M307 835.1Q656 571.7 1005 286.9L1005 287.8Q656 573.0 307 836.9Z"/><path class="c7" d="M271 835.1Q638 550.4 1005 245.8L1005 246.7Q638 551.7 271 836.9Z"/><path class="c6" d="M161 835.3Q583 536.4 1005 224.4L1005 225.3Q583 537.5 161 836.7Z"/><path class="c10" d="M0 611.3Q502 386.3 1005 194.6L1005 195.5Q502 387.6 0 613.0Z"/><path class="c5" d="M0 570.2Q502 350.0 1005 169.0L1005 169.9Q502 351.5 0 572.3Z"/><path class="c0" d="M0 703.6Q502 437.4 1005 191.5L1005 192.4Q502 438.9 0 705.5Z"/><path class="c9" d="M89 835.3Q547 517.7 1005 192.4L1005 193.3Q547 518.9 89 836.7Z"/><path class="c15" d="M0 454.4Q502 291.7 1005 183.0L1005 183.9Q502 293.0 0 456.2Z"/><path class="c9" d="M0 700.2Q502 435.6 1005 191.8L1005 192.7Q502 436.8 0 701.6Z"/><path class="c7" d="M358 834.9Q682 560.8 1005 262.5L1005 263.4Q682 562.3 358 837.1Z"/><path class="c8" d="M191 835.1Q598 533.9 1005 217.5L1005 218.4Q598 535.3 191 836.9Z"/><path class="c4" d="M0 478.2Q502 297.7 1005 168.5L1005 169.4Q502 298.9 0 479.7Z"/><path class="c5" d="M50 -1.0Q527 94.8 1005 109.4L1005 110.3Q527 96.2 50 1.0Z"/><path class="c5" d="M300 834.9Q652 566.0 1005 275.9L1005 276.8Q652 567.5 300 837.1Z"/><path class="c8" d="M55 835.3Q530 532.0 1005 223.9L1005 224.8Q530 533.2 55 836.7Z"/><path class="c7" d="M325 -0.7Q665 66.1 1005 96.3L1005 97.2Q665 67.2 325 0.7Z"/><path class="c5" d="M0 607.8Q502 380.8 1005 187.6L1005 188.5Q502 382.1 0 609.4Z"/><path class="c11" d="M180 834.9Q592 534.4 1005 219.5L1005 220.4Q592 536.0 180 837.1Z"/><path class="c7" d="M411 -0.9Q708 61.9 1005 98.5L1005 99.4Q708 63.3 411 0.9Z"/><path class="c1" d="M0 372.7Q502 236.2 1005 155.5L1005 156.4Q502 237.6 0 374.5Z"/><path class="c15" d="M0 28.4Q502 99.2 1005 87.1L1005 88.0Q502 100.6 0 30.3Z"/><path class="c6" d="M0 705.5Q502 437.1 1005 188.6L1005 189.5Q502 438.2 0 706.9Z"/><path class="c8" d="M0 128.9Q502 134.8 1005 118.9L1005 119.8Q502 136.3 0 131.0Z"/><path class="c9" d="M377 835.0Q691 558.9 1005 257.6L1005 258.5Q691 560.3 377 837.0Z"/><path class="c6" d="M529 -0.9Q767 50.2 1005 86.8L1005 87.7Q767 51.6 529 0.9Z"/><path class="c2" d="M7 835.2Q506 540.6 1005 245.4L1005 246.3Q506 541.9 7 836.8Z"/><path class="c0" d="M688 -0.8Q847 34.2 1005 65.2L1005 66.1Q847 35.4 688 0.8Z"/><path class="c6" d="M80 835.3Q542 523.1 1005 204.1L1005 205.0Q542 524.3 80 836.7Z"/><path class="c10" d="M0 395.4Q502 252.5 1005 171.4L1005 172.3Q502 253.8 0 397.1Z"/><path class="c11" d="M0 451.1Q502 278.3 1005 160.2L1005 161.1Q502 279.8 0 453.2Z"/><path class="c0" d="M0 94.2Q502 112.1 1005 87.0L1005 87.9Q502 113.5 0 96.1Z"/><path class="c6" d="M0 90.4Q502 120.6 1005 105.5L1005 106.4Q502 121.8 0 91.8Z"/><path class="c0" d="M0 367.4Q502 227.4 1005 141.8L1005 142.7Q502 228.9 0 369.5Z"/><path class="c10" d="M0 197.6Q502 151.4 1005 113.9L1005 114.8Q502 152.9 0 199.6Z"/><path class="c7" d="M147 835.0Q576 535.1 1005 223.0L1005 223.9Q576 536.5 147 837.0Z"/><path class="c10" d="M0 605.1Q502 367.1 1005 163.5L1005 164.4Q502 368.2 0 606.6Z"/><path class="c15" d="M64 835.0Q535 535.1 1005 229.5L1005 230.4Q535 536.5 64 837.0Z"/><path class="c8" d="M0 261.1Q502 199.0 1005 162.3L1005 163.2Q502 200.4 0 263.0Z"/><path class="c8" d="M0 182.4Q502 153.7 1005 129.6L1005 130.5Q502 155.0 0 184.1Z"/><path class="c1" d="M0 573.5Q502 362.5 1005 189.9L1005 190.8Q502 363.7 0 574.9Z"/><path class="c5" d="M0 198.9Q502 146.5 1005 102.9L1005 103.8Q502 147.7 0 200.3Z"/><path class="c5" d="M0 604.1Q502 369.8 1005 170.1L1005 171.0Q502 371.2 0 605.9Z"/><path class="c1" d="M142 835.1Q574 530.7 1005 214.5L1005 215.4Q574 532.1 142 836.9Z"/><path class="c7" d="M0 610.0Q502 385.7 1005 194.7L1005 195.6Q502 387.1 0 611.9Z"/><path class="c6" d="M0 252.0Q502 190.6 1005 152.0L1005 152.9Q502 192.1 0 254.2Z"/><path class="c4" d="M75 835.1Q540 538.3 1005 235.0L1005 235.9Q540 539.6 75 836.9Z"/><path class="c9" d="M0 226.5Q502 167.7 1005 125.2L1005 126.1Q502 169.2 0 228.5Z"/><path class="c0" d="M261 835.0Q633 559.0 1005 263.8L1005 264.7Q633 560.4 261 837.0Z"/><path class="c10" d="M0 225.0Q502 170.7 1005 132.2L1005 133.1Q502 172.2 0 227.1Z"/><path class="c12" d="M13 835.3Q509 517.8 1005 199.2L1005 200.1Q509 519.0 13 836.7Z"/><path class="c2" d="M580 -1.0Q792 43.9 1005 78.3L1005 79.2Q792 45.4 580 1.0Z"/><path class="c10" d="M0 369.6Q502 231.6 1005 148.5L1005 149.4Q502 233.0 0 371.5Z"/><path class="c7" d="M0 775.1Q502 481.9 1005 198.2L1005 199.1Q502 483.1 0 776.6Z"/><path class="c6" d="M778 -0.9Q892 35.1 1005 70.6L1005 71.5Q892 36.4 778 0.9Z"/><path class="c6" d="M159 835.0Q582 530.6 1005 213.1L1005 214.0Q582 532.0 159 837.0Z"/><path class="c0" d="M0 490.7Q502 306.4 1005 171.8L1005 172.7Q502 307.7 0 492.2Z"/><path class="c0" d="M0 192.7Q502 155.0 1005 124.5L1005 125.4Q502 156.2 0 194.3Z"/><path class="c12" d="M271 835.2Q638 542.7 1005 230.0L1005 230.9Q638 543.9 271 836.8Z"/><path class="c2" d="M0 567.2Q502 363.4 1005 198.8L1005 199.7Q502 364.6 0 568.6Z"/><path class="c5" d="M0 540.0Q502 334.8 1005 172.6L1005 173.5Q502 336.1 0 541.7Z"/><path class="c8" d="M74 -0.9Q540 85.7 1005 96.0L1005 96.9Q540 87.1 74 0.9Z"/><path class="c15" d="M11 834.9Q508 535.1 1005 234.2L1005 235.1Q508 536.6 11 837.1Z"/><path class="c2" d="M270 835.2Q637 566.0 1005 277.3L1005 278.2Q637 567.2 270 836.8Z"/><path class="c4" d="M225 835.0Q615 551.3 1005 250.4L1005 251.3Q615 552.7 225 837.0Z"/><path class="c4" d="M89 835.0Q547 540.5 1005 238.5L1005 239.4Q547 542.0 89 837.0Z"/><path class="c7" d="M0 701.2Q502 430.1 1005 179.6L1005 180.5Q502 431.5 0 703.1Z"/><path class="c5" d="M0 657.9Q502 421.1 1005 210.9L1005 211.8Q502 422.4 0 659.6Z"/><path class="c7" d="M0 705.3Q502 439.4 1005 193.3L1005 194.2Q502 440.9 0 707.5Z"/><path class="c8" d="M0 183.3Q502 133.1 1005 87.9L1005 88.8Q502 134.7 0 185.4Z"/><path class="c1" d="M0 359.4Q502 226.0 1005 144.7L1005 145.6Q502 227.1 0 360.7Z"/><path class="c0" d="M359 835.3Q682 560.1 1005 260.6L1005 261.5Q682 561.3 359 836.7Z"/><path class="c6" d="M740 -1.0Q872 33.5 1005 66.2L1005 67.1Q872 34.9 740 1.0Z"/><path class="c8" d="M415 -0.9Q710 58.2 1005 91.7L1005 92.6Q710 59.6 415 0.9Z"/><path class="c1" d="M13 835.3Q509 516.8 1005 197.1L1005 198.0Q509 518.0 13 836.7Z"/><path class="c5" d="M657 -0.9Q831 44.9 1005 85.1L1005 86.0Q831 46.3 657 0.9Z"/><path class="c8" d="M0 53.2Q502 118.3 1005 115.6L1005 116.5Q502 119.6 0 54.8Z"/><path class="c5" d="M0 312.4Q502 205.7 1005 138.1L1005 139.0Q502 206.8 0 313.7Z"/><path class="c13" d="M220 835.3Q613 541.6 1005 230.9L1005 231.8Q613 542.8 220 836.7Z"/><path class="c1" d="M92 835.2Q549 537.5 1005 231.9L1005 232.8Q549 538.7 92 836.8Z"/><path class="c5" d="M0 830.6Q502 501.0 1005 172.1L1005 173.0Q502 502.1 0 832.0Z"/><path class="c7" d="M354 834.9Q680 561.2 1005 263.6L1005 264.5Q680 562.8 354 837.1Z"/><path class="c6" d="M150 835.1Q577 511.2 1005 174.6L1005 175.5Q577 512.5 150 836.9Z"/><path class="c0" d="M358 -0.8Q682 58.1 1005 84.7L1005 85.6Q682 59.3 358 0.8Z"/><path class="c4" d="M0 413.3Q502 258.0 1005 162.4L1005 163.3Q502 259.4 0 415.1Z"/><path class="c1" d="M0 143.9Q502 131.3 1005 105.9L1005 106.8Q502 132.7 0 145.7Z"/><path class="c4" d="M0 695.9Q502 434.2 1005 193.9L1005 194.8Q502 435.7 0 697.9Z"/><path class="c6" d="M0 20.2Q502 109.7 1005 111.0L1005 111.9Q502 110.9 0 21.7Z"/><path class="c9" d="M0 816.1Q502 500.0 1005 187.1L1005 188.0Q502 501.2 0 817.5Z"/><path class="c0" d="M0 634.2Q502 392.6 1005 181.3L1005 182.2Q502 394.0 0 636.0Z"/><path class="c6" d="M0 744.3Q502 471.0 1005 211.8L1005 212.7Q502 472.4 0 746.2Z"/><path class="c8" d="M0 425.3Q502 263.7 1005 160.3L1005 161.2Q502 264.9 0 426.8Z"/><path class="c3" d="M484 -1.1Q745 57.6 1005 97.7L1005 98.6Q745 59.2 484 1.1Z"/><path class="c4" d="M0 304.2Q502 198.6 1005 130.0L1005 130.9Q502 200.1 0 306.3Z"/><path class="c8" d="M0 748.5Q502 478.5 1005 222.0L1005 222.9Q502 479.7 0 749.9Z"/><path class="c5" d="M0 404.6Q502 244.7 1005 145.9L1005 146.8Q502 245.9 0 405.9Z"/><path class="c7" d="M155 -0.7Q580 62.4 1005 63.9L1005 64.8Q580 63.6 155 0.7Z"/><path class="c8" d="M0 648.0Q502 420.0 1005 219.8L1005 220.7Q502 421.4 0 649.9Z"/><path class="c0" d="M172 835.2Q589 557.9 1005 267.1L1005 268.0Q589 559.2 172 836.8Z"/><path class="c10" d="M0 708.1Q502 443.0 1005 197.4L1005 198.3Q502 444.5 0 710.2Z"/><path class="c10" d="M0 465.0Q502 304.6 1005 196.8L1005 197.7Q502 306.0 0 466.8Z"/><path class="c1" d="M43 -0.8Q524 107.0 1005 131.9L1005 132.8Q524 108.2 43 0.8Z"/><path class="c8" d="M95 -0.8Q550 86.7 1005 101.7L1005 102.6Q550 87.9 95 0.8Z"/><path class="c6" d="M268 835.2Q636 548.0 1005 240.9L1005 241.8Q636 549.2 268 836.8Z"/><path class="c11" d="M263 835.1Q634 545.3 1005 236.0L1005 236.9Q634 546.7 263 836.9Z"/><path class="c4" d="M0 228.0Q502 167.1 1005 122.7L1005 123.6Q502 168.3 0 229.5Z"/><path class="c7" d="M0 557.3Q502 345.9 1005 175.1L1005 176.0Q502 347.4 0 559.4Z"/><path class="c9" d="M0 628.4Q502 403.5 1005 209.2L1005 210.1Q502 404.8 0 630.1Z"/><path class="c5" d="M0 8.1Q502 105.2 1005 106.7L1005 107.6Q502 106.3 0 9.5Z"/><path class="c8" d="M0 89.3Q502 127.5 1005 119.7L1005 120.6Q502 128.8 0 91.0Z"/><path class="c7" d="M0 706.3Q502 440.6 1005 194.8L1005 195.7Q502 441.9 0 708.0Z"/><path class="c1" d="M0 578.9Q502 356.1 1005 171.3L1005 172.2Q502 357.3 0 580.4Z"/><path class="c1" d="M90 835.0Q548 537.1 1005 231.5L1005 232.4Q548 538.6 90 837.0Z"/><path class="c8" d="M355 835.2Q680 544.4 1005 228.8L1005 229.7Q680 545.6 355 836.8Z"/><path class="c6" d="M206 835.0Q605 538.7 1005 226.2L1005 227.1Q605 540.1 206 837.0Z"/><path class="c8" d="M0 206.3Q502 171.6 1005 147.6L1005 148.5Q502 172.8 0 207.8Z"/><path class="c8" d="M81 835.2Q543 531.0 1005 219.7L1005 220.6Q543 532.2 81 836.8Z"/><path class="c1" d="M626 -0.7Q815 62.0 1005 117.1L1005 118.0Q815 63.2 626 0.7Z"/><path class="c1" d="M104 835.3Q554 548.4 1005 252.8L1005 253.7Q554 549.6 104 836.7Z"/><path class="c1" d="M0 660.2Q502 416.3 1005 198.6L1005 199.5Q502 417.7 0 662.2Z"/><path class="c6" d="M0 702.3Q502 431.5 1005 181.2L1005 182.1Q502 433.0 0 704.3Z"/><path class="c11" d="M12 835.3Q508 529.7 1005 223.0L1005 223.9Q508 530.8 12 836.7Z"/><path class="c7" d="M15 -0.9Q510 101.6 1005 116.1L1005 117.0Q510 103.0 15 0.9Z"/><path class="c9" d="M0 248.4Q502 179.9 1005 133.3L1005 134.2Q502 181.0 0 249.8Z"/><path class="c4" d="M0 150.4Q502 134.5 1005 109.7L1005 110.6Q502 135.8 0 152.1Z"/><path class="c8" d="M0 440.2Q502 263.7 1005 143.6L1005 144.5Q502 264.8 0 441.5Z"/><path class="c11" d="M365 835.3Q685 558.5 1005 257.1L1005 258.0Q685 559.7 365 836.7Z"/><path class="c1" d="M28 835.2Q517 521.6 1005 205.4L1005 206.3Q517 522.8 28 836.8Z"/><path class="c4" d="M0 384.0Q502 239.2 1005 153.2L1005 154.1Q502 240.7 0 386.1Z"/><path class="c12" d="M161 835.1Q583 530.3 1005 212.3L1005 213.2Q583 531.6 161 836.9Z"/><path class="c7" d="M0 300.3Q502 203.5 1005 142.6L1005 143.5Q502 205.0 0 302.5Z"/><path class="c9" d="M0 527.4Q502 329.7 1005 176.6L1005 177.5Q502 331.2 0 529.4Z"/><path class="c6" d="M648 -0.8Q827 48.2 1005 91.1L1005 92.0Q827 49.5 648 0.8Z"/><path class="c1" d="M0 29.6Q502 114.6 1005 117.2L1005 118.1Q502 115.8 0 31.1Z"/><path class="c2" d="M0 312.6Q502 208.5 1005 143.6L1005 144.5Q502 209.8 0 314.3Z"/><path class="c3" d="M0 278.5Q502 189.3 1005 130.2L1005 131.1Q502 190.7 0 280.3Z"/><path class="c4" d="M324 835.3Q665 586.8 1005 316.6L1005 317.5Q665 587.9 324 836.7Z"/><path class="c6" d="M0 201.9Q502 152.8 1005 113.4L1005 114.3Q502 154.3 0 204.0Z"/><path class="c2" d="M0 371.5Q502 234.6 1005 153.0L1005 153.9Q502 235.9 0 373.1Z"/><path class="c10" d="M0 349.5Q502 218.1 1005 136.1L1005 137.0Q502 219.3 0 351.1Z"/><path class="c6" d="M275 835.0Q640 548.7 1005 242.2L1005 243.1Q640 550.1 275 837.0Z"/><path class="c4" d="M344 -0.7Q675 61.7 1005 90.0L1005 90.9Q675 62.8 344 0.7Z"/><path class="c1" d="M207 835.2Q606 536.3 1005 221.1L1005 222.0Q606 537.6 207 836.8Z"/><path class="c5" d="M142 835.1Q574 533.6 1005 220.2L1005 221.1Q574 534.9 142 836.9Z"/><path class="c7" d="M81 835.1Q543 529.8 1005 217.3L1005 218.2Q543 531.1 81 836.9Z"/><path class="c2" d="M0 538.4Q502 324.1 1005 153.3L1005 154.2Q502 325.6 0 540.5Z"/><path class="c11" d="M131 835.3Q568 524.0 1005 201.8L1005 202.7Q568 525.2 131 836.7Z"/><path class="c11" d="M760 -0.7Q882 31.8 1005 63.4L1005 64.3Q882 33.0 760 0.7Z"/><path class="c11" d="M0 684.9Q502 426.2 1005 190.4L1005 191.3Q502 427.7 0 687.0Z"/><path class="c10" d="M59 835.1Q532 533.1 1005 225.9L1005 226.8Q532 534.5 59 836.9Z"/><path class="c6" d="M0 405.6Q502 261.0 1005 176.8L1005 177.7Q502 262.2 0 407.0Z"/><path class="c6" d="M0 410.6Q502 250.5 1005 150.5L1005 151.4Q502 251.8 0 412.3Z"/><path class="c0" d="M0 525.9Q502 328.3 1005 175.5L1005 176.4Q502 329.7 0 527.9Z"/><path class="c7" d="M0 49.6Q502 116.4 1005 113.2L1005 114.1Q502 117.7 0 51.1Z"/><path class="c4" d="M0 66.2Q502 116.6 1005 107.0L1005 107.9Q502 117.8 0 67.7Z"/><path class="c6" d="M401 -0.7Q703 59.5 1005 92.5L1005 93.4Q703 60.7 401 0.7Z"/><path class="c7" d="M0 272.7Q502 174.8 1005 105.5L1005 106.4Q502 176.2 0 274.7Z"/><path class="c8" d="M11 835.0Q508 529.4 1005 222.9L1005 223.8Q508 530.9 11 837.0Z"/><path class="c10" d="M123 835.3Q564 532.5 1005 219.3L1005 220.2Q564 533.6 123 836.7Z"/><path class="c14" d="M497 -1.0Q751 58.6 1005 100.8L1005 101.7Q751 60.1 497 1.0Z"/><path class="c14" d="M0 51.3Q502 115.6 1005 110.9L1005 111.8Q502 117.0 0 53.2Z"/><path class="c10" d="M96 835.3Q551 529.6 1005 215.7L1005 216.6Q551 530.8 96 836.7Z"/><path class="c13" d="M365 835.0Q685 560.4 1005 261.2L1005 262.1Q685 561.8 365 837.0Z"/><path class="c7" d="M694 -0.7Q850 37.7 1005 72.4L1005 73.3Q850 38.8 694 0.7Z"/><path class="c10" d="M0 693.0Q502 445.0 1005 218.5L1005 219.4Q502 446.4 0 694.9Z"/><path class="c14" d="M0 644.7Q502 410.0 1005 203.8L1005 204.7Q502 411.4 0 646.7Z"/><path class="c1" d="M0 637.8Q502 415.2 1005 221.9L1005 222.8Q502 416.3 0 639.1Z"/><path class="c10" d="M137 835.0Q571 503.9 1005 161.1L1005 162.0Q571 505.4 137 837.0Z"/><path class="c5" d="M371 834.9Q688 565.5 1005 271.5L1005 272.4Q688 567.0 371 837.1Z"/><path class="c3" d="M500 -1.0Q753 55.0 1005 93.8L1005 94.7Q753 56.4 500 1.0Z"/><path class="c1" d="M11 835.2Q508 538.8 1005 241.5L1005 242.4Q508 540.1 11 836.8Z"/><path class="c3" d="M0 534.9Q502 337.4 1005 183.6L1005 184.5Q502 338.7 0 536.5Z"/><path class="c5" d="M172 834.9Q589 532.2 1005 215.6L1005 216.5Q589 533.8 172 837.1Z"/><path class="c5" d="M57 835.0Q531 518.7 1005 197.3L1005 198.2Q531 520.1 57 837.0Z"/><path class="c0" d="M16 835.0Q511 522.7 1005 208.9L1005 209.8Q511 524.2 16 837.0Z"/><path class="c5" d="M267 -0.7Q636 73.3 1005 102.8L1005 103.7Q636 74.4 267 0.7Z"/><path class="c4" d="M0 402.9Q502 247.8 1005 153.7L1005 154.6Q502 249.0 0 404.5Z"/><path class="c15" d="M0 645.9Q502 383.7 1005 150.3L1005 151.2Q502 385.2 0 648.0Z"/><path class="c0" d="M0 282.4Q502 189.3 1005 127.2L1005 128.1Q502 190.5 0 283.9Z"/><path class="c11" d="M0 813.3Q502 510.1 1005 210.4L1005 211.3Q502 511.6 0 815.4Z"/><path class="c6" d="M0 483.0Q502 309.5 1005 186.4L1005 187.3Q502 310.9 0 484.9Z"/><path class="c0" d="M229 -0.8Q617 68.0 1005 86.8L1005 87.7Q617 69.3 229 0.8Z"/><path class="c6" d="M0 527.6Q502 340.6 1005 197.9L1005 198.8Q502 341.8 0 529.2Z"/><path class="c4" d="M331 834.9Q668 568.6 1005 279.8L1005 280.7Q668 570.1 331 837.1Z"/><path class="c1" d="M0 790.3Q502 491.7 1005 200.4L1005 201.3Q502 492.9 0 791.8Z"/><path class="c4" d="M0 480.7Q502 304.8 1005 179.6L1005 180.5Q502 306.1 0 482.5Z"/><path class="c4" d="M0 649.5Q502 417.8 1005 213.9L1005 214.8Q502 419.0 0 651.0Z"/><path class="c10" d="M36 -1.0Q521 81.7 1005 80.9L1005 81.8Q521 83.1 36 1.0Z"/><path class="c5" d="M166 835.0Q585 555.5 1005 262.9L1005 263.8Q585 557.0 166 837.0Z"/><path class="c9" d="M190 835.3Q597 547.6 1005 244.9L1005 245.8Q597 548.7 190 836.7Z"/><path class="c6" d="M0 404.5Q502 262.9 1005 181.8L1005 182.7Q502 264.4 0 406.5Z"/><path class="c4" d="M0 147.4Q502 143.4 1005 128.7L1005 129.6Q502 144.8 0 149.4Z"/><path class="c8" d="M0 463.1Q502 284.9 1005 159.9L1005 160.8Q502 286.4 0 465.2Z"/><path class="c1" d="M0 681.0Q502 403.3 1005 149.4L1005 150.3Q502 404.7 0 683.0Z"/><path class="c1" d="M389 -0.7Q697 57.6 1005 87.3L1005 88.2Q697 58.8 389 0.7Z"/><path class="c9" d="M145 -0.9Q575 72.7 1005 82.8L1005 83.7Q575 74.1 145 0.9Z"/><path class="c6" d="M0 418.9Q502 253.2 1005 146.5L1005 147.4Q502 254.7 0 421.0Z"/><path class="c4" d="M0 33.8Q502 97.0 1005 80.5L1005 81.4Q502 98.1 0 35.1Z"/><path class="c6" d="M40 835.0Q523 507.1 1005 175.5L1005 176.4Q523 508.5 40 837.0Z"/><path class="c3" d="M334 835.1Q670 573.1 1005 288.5L1005 289.4Q670 574.5 334 836.9Z"/><path class="c1" d="M486 -0.8Q745 49.5 1005 81.4L1005 82.3Q745 50.7 486 0.8Z"/><path class="c6" d="M373 835.1Q689 554.5 1005 248.6L1005 249.5Q689 555.8 373 836.9Z"/><path class="c4" d="M0 403.9Q502 242.2 1005 141.7L1005 142.6Q502 243.6 0 405.8Z"/><path class="c1" d="M0 502.4Q502 316.1 1005 177.7L1005 178.6Q502 317.5 0 504.4Z"/><path class="c10" d="M0 568.1Q502 365.8 1005 202.5L1005 203.4Q502 366.9 0 569.4Z"/><path class="c4" d="M18 835.1Q512 531.1 1005 225.5L1005 226.4Q512 532.5 18 836.9Z"/><path class="c1" d="M0 357.4Q502 227.9 1005 149.9L1005 150.8Q502 229.2 0 359.0Z"/><path class="c5" d="M344 -0.8Q675 71.8 1005 110.2L1005 111.1Q675 73.0 344 0.8Z"/><path class="c7" d="M0 657.0Q502 405.2 1005 180.3L1005 181.2Q502 406.4 0 658.6Z"/><path class="c0" d="M0 48.2Q502 108.9 1005 98.9L1005 99.8Q502 110.5 0 50.3Z"/><path class="c1" d="M0 609.8Q502 372.9 1005 169.8L1005 170.7Q502 374.3 0 611.6Z"/><path class="c1" d="M0 38.9Q502 105.7 1005 96.1L1005 97.0Q502 107.2 0 40.9Z"/><path class="c13" d="M143 835.1Q574 548.8 1005 250.8L1005 251.7Q574 550.1 143 836.9Z"/><path class="c0" d="M0 232.9Q502 171.1 1005 127.2L1005 128.1Q502 172.5 0 234.8Z"/><path class="c10" d="M0 295.7Q502 203.5 1005 146.0L1005 146.9Q502 204.9 0 297.6Z"/><path class="c1" d="M0 573.8Q502 361.6 1005 187.8L1005 188.7Q502 363.2 0 576.0Z"/><path class="c1" d="M0 188.2Q502 152.9 1005 123.7L1005 124.6Q502 154.3 0 190.1Z"/><path class="c4" d="M0 755.8Q502 484.9 1005 226.3L1005 227.2Q502 486.2 0 757.6Z"/><path class="c6" d="M0 758.9Q502 470.4 1005 194.0L1005 194.9Q502 471.8 0 760.7Z"/><path class="c5" d="M0 528.0Q502 346.0 1005 208.3L1005 209.2Q502 347.4 0 529.8Z"/><path class="c4" d="M46 835.2Q525 534.3 1005 229.3L1005 230.2Q525 535.5 46 836.8Z"/><path class="c6" d="M83 -0.7Q544 87.6 1005 101.2L1005 102.1Q544 88.7 83 0.7Z"/><path class="c8" d="M711 -1.1Q858 32.4 1005 63.1L1005 64.0Q858 34.0 711 1.1Z"/><path class="c3" d="M0 470.1Q502 284.2 1005 150.8L1005 151.7Q502 285.3 0 471.5Z"/><path class="c0" d="M0 745.1Q502 458.2 1005 185.5L1005 186.4Q502 459.5 0 746.8Z"/><path class="c9" d="M0 665.3Q502 420.3 1005 201.0L1005 201.9Q502 421.5 0 666.7Z"/><path class="c4" d="M0 514.6Q502 334.4 1005 200.2L1005 201.1Q502 335.9 0 516.7Z"/><path class="c6" d="M0 414.7Q502 255.9 1005 156.6L1005 157.5Q502 257.1 0 416.2Z"/><path class="c2" d="M71 835.0Q538 499.1 1005 156.9L1005 157.8Q538 500.6 71 837.0Z"/><path class="c1" d="M0 634.6Q502 401.3 1005 198.0L1005 198.9Q502 402.8 0 636.7Z"/><path class="c4" d="M0 107.5Q502 129.7 1005 117.1L1005 118.0Q502 131.0 0 109.2Z"/><path class="c0" d="M0 637.9Q502 388.2 1005 168.4L1005 169.3Q502 389.4 0 639.4Z"/><path class="c8" d="M350 835.1Q678 558.9 1005 258.8L1005 259.7Q678 560.2 350 836.9Z"/><path class="c14" d="M374 835.2Q689 549.3 1005 238.0L1005 238.9Q689 550.6 374 836.8Z"/><path class="c13" d="M0 603.2Q502 366.9 1005 165.2L1005 166.1Q502 368.0 0 604.6Z"/><path class="c6" d="M539 -0.7Q772 51.8 1005 90.5L1005 91.4Q772 52.9 539 0.7Z"/><path class="c6" d="M0 433.3Q502 275.6 1005 174.8L1005 175.7Q502 277.0 0 435.0Z"/><path class="c9" d="M338 835.1Q672 559.2 1005 259.9L1005 260.8Q672 560.5 338 836.9Z"/><path class="c4" d="M0 288.0Q502 190.8 1005 126.2L1005 127.1Q502 192.0 0 289.4Z"/><path class="c4" d="M0 477.8Q502 305.3 1005 183.8L1005 184.7Q502 306.4 0 479.2Z"/><path class="c15" d="M0 243.1Q502 179.4 1005 136.4L1005 137.3Q502 180.9 0 245.0Z"/><path class="c1" d="M379 835.0Q692 554.8 1005 249.2L1005 250.1Q692 556.3 379 837.0Z"/><path class="c6" d="M652 -1.0Q828 35.1 1005 65.2L1005 66.1Q828 36.5 652 1.0Z"/><path class="c8" d="M376 835.0Q691 551.3 1005 242.2L1005 243.1Q691 552.8 376 837.0Z"/><path class="c0" d="M0 122.6Q502 135.5 1005 122.7L1005 123.6Q502 136.9 0 124.5Z"/><path class="c7" d="M0 301.5Q502 201.7 1005 138.1L1005 139.0Q502 203.1 0 303.5Z"/><path class="c11" d="M0 478.6Q502 308.5 1005 189.2L1005 190.1Q502 309.7 0 480.2Z"/><path class="c6" d="M0 526.6Q502 329.3 1005 176.7L1005 177.6Q502 330.5 0 528.2Z"/><path class="c2" d="M135 835.2Q570 528.5 1005 210.4L1005 211.3Q570 529.7 135 836.8Z"/><path class="c10" d="M0 632.0Q502 385.6 1005 169.9L1005 170.8Q502 386.9 0 633.7Z"/><path class="c5" d="M0 642.7Q502 398.5 1005 183.3L1005 184.2Q502 399.7 0 644.1Z"/><path class="c6" d="M674 -0.9Q840 38.1 1005 72.6L1005 73.5Q840 39.5 674 0.9Z"/><path class="c0" d="M574 -0.9Q789 48.2 1005 86.2L1005 87.1Q789 49.5 574 0.9Z"/><path class="c4" d="M710 -0.8Q858 43.5 1005 84.9L1005 85.8Q858 44.8 710 0.8Z"/><path class="c8" d="M75 835.2Q540 523.6 1005 205.4L1005 206.3Q540 524.9 75 836.8Z"/><path class="c13" d="M154 835.1Q579 517.4 1005 186.8L1005 187.7Q579 518.7 154 836.9Z"/><path class="c2" d="M0 397.0Q502 244.7 1005 154.2L1005 155.1Q502 246.2 0 399.1Z"/><path class="c10" d="M0 225.5Q502 172.2 1005 134.8L1005 135.7Q502 173.6 0 227.5Z"/><path class="c6" d="M106 835.1Q555 513.4 1005 182.5L1005 183.4Q555 514.7 106 836.9Z"/><path class="c11" d="M97 835.1Q551 530.3 1005 217.1L1005 218.0Q551 531.6 97 836.9Z"/><path class="c5" d="M72 835.0Q538 564.9 1005 288.8L1005 289.7Q538 566.4 72 837.0Z"/><path class="c0" d="M302 834.9Q653 539.5 1005 222.0L1005 222.9Q653 541.0 302 837.1Z"/><path class="c0" d="M243 835.1Q624 555.0 1005 256.6L1005 257.5Q624 556.3 243 836.9Z"/><path class="c8" d="M44 835.1Q525 539.4 1005 239.7L1005 240.6Q525 540.7 44 836.9Z"/><path class="c15" d="M0 314.0Q502 215.7 1005 156.9L1005 157.8Q502 217.1 0 316.0Z"/><path class="c15" d="M484 -0.9Q745 60.9 1005 104.0L1005 104.9Q745 62.2 484 0.9Z"/><path class="c7" d="M0 60.4Q502 107.5 1005 91.3L1005 92.2Q502 108.9 0 62.2Z"/><path class="c6" d="M0 565.0Q502 347.6 1005 170.0L1005 170.9Q502 349.1 0 567.0Z"/><path class="c7" d="M0 347.8Q502 221.5 1005 144.2L1005 145.1Q502 223.0 0 349.7Z"/><path class="c6" d="M370 835.3Q688 555.2 1005 250.2L1005 251.1Q688 556.4 370 836.7Z"/><path class="c4" d="M0 322.9Q502 216.2 1005 151.5L1005 152.4Q502 217.4 0 324.3Z"/><path class="c4" d="M0 723.8Q502 449.7 1005 192.7L1005 193.6Q502 451.2 0 725.9Z"/><path class="c6" d="M0 789.8Q502 502.5 1005 222.3L1005 223.2Q502 503.6 0 791.2Z"/><path class="c6" d="M0 292.3Q502 207.5 1005 156.3L1005 157.2Q502 208.6 0 293.6Z"/><path class="c0" d="M0 377.1Q502 232.1 1005 144.3L1005 145.2Q502 233.7 0 379.2Z"/><path class="c0" d="M0 226.5Q502 179.7 1005 149.0L1005 149.9Q502 180.9 0 228.0Z"/><path class="c10" d="M0 212.7Q502 169.2 1005 138.3L1005 139.2Q502 170.7 0 214.8Z"/><path class="c2" d="M0 683.8Q502 422.7 1005 184.7L1005 185.6Q502 424.1 0 685.6Z"/><path class="c7" d="M0 310.1Q502 215.2 1005 158.8L1005 159.7Q502 216.4 0 311.4Z"/><path class="c10" d="M0 525.6Q502 330.8 1005 181.0L1005 181.9Q502 332.2 0 527.4Z"/><path class="c1" d="M0 397.3Q502 239.1 1005 142.9L1005 143.8Q502 240.4 0 398.9Z"/><path class="c0" d="M132 835.0Q568 548.8 1005 251.8L1005 252.7Q568 550.2 132 837.0Z"/><path class="c5" d="M0 425.0Q502 270.5 1005 174.0L1005 174.9Q502 271.9 0 426.8Z"/><path class="c10" d="M0 457.3Q502 275.1 1005 147.2L1005 148.1Q502 276.3 0 458.6Z"/><path class="c5" d="M0 592.2Q502 369.8 1005 183.3L1005 184.2Q502 371.1 0 593.9Z"/><path class="c5" d="M0 184.2Q502 153.3 1005 127.3L1005 128.2Q502 154.6 0 186.0Z"/><path class="c6" d="M298 835.3Q651 548.6 1005 240.4L1005 241.3Q651 549.8 298 836.7Z"/><path class="c0" d="M243 835.1Q624 528.3 1005 202.8L1005 203.7Q624 529.7 243 836.9Z"/><path class="c8" d="M0 455.6Q502 270.3 1005 139.5L1005 140.4Q502 271.6 0 457.3Z"/><path class="c4" d="M27 835.0Q516 519.0 1005 200.6L1005 201.5Q516 520.5 27 837.0Z"/><path class="c11" d="M0 500.1Q502 321.1 1005 190.1L1005 191.0Q502 322.3 0 501.6Z"/><path class="c10" d="M558 -1.0Q782 63.3 1005 115.3L1005 116.2Q782 64.8 558 1.0Z"/><path class="c4" d="M0 796.4Q502 505.5 1005 220.7L1005 221.6Q502 506.8 0 798.1Z"/><path class="c14" d="M595 -1.1Q800 43.4 1005 78.4L1005 79.3Q800 44.9 595 1.1Z"/><path class="c15" d="M0 552.3Q502 329.1 1005 147.6L1005 148.5Q502 330.5 0 554.2Z"/><path class="c0" d="M16 835.3Q511 521.9 1005 206.9L1005 207.8Q511 523.0 16 836.7Z"/><path class="c10" d="M22 835.2Q513 539.3 1005 241.5L1005 242.4Q513 540.6 22 836.8Z"/><path class="c8" d="M197 -1.0Q601 71.5 1005 88.9L1005 89.8Q601 72.9 197 1.0Z"/><path class="c1" d="M0 62.2Q502 117.2 1005 109.8L1005 110.7Q502 118.6 0 64.2Z"/><path class="c6" d="M0 307.8Q502 214.5 1005 159.1L1005 160.0Q502 216.0 0 309.9Z"/><path class="c8" d="M341 835.1Q673 552.6 1005 246.5L1005 247.4Q673 553.9 341 836.9Z"/><path class="c8" d="M350 834.9Q677 547.1 1005 234.9L1005 235.8Q677 548.6 350 837.1Z"/><path class="c6" d="M0 156.7Q502 138.3 1005 114.9L1005 115.8Q502 139.7 0 158.5Z"/><path class="c6" d="M325 834.9Q665 542.5 1005 226.8L1005 227.7Q665 544.0 325 837.1Z"/><path class="c1" d="M169 834.9Q587 544.2 1005 240.0L1005 240.9Q587 545.8 169 837.1Z"/><path class="c8" d="M0 734.6Q502 478.8 1005 238.3L1005 239.2Q502 479.9 0 735.9Z"/><path class="c4" d="M0 457.0Q502 276.2 1005 149.6L1005 150.5Q502 277.3 0 458.3Z"/><path class="c10" d="M0 644.8Q502 400.2 1005 184.3L1005 185.2Q502 401.4 0 646.4Z"/><path class="c6" d="M0 465.5Q502 278.2 1005 144.1L1005 145.0Q502 279.4 0 467.0Z"/><path class="c7" d="M13 835.0Q509 538.6 1005 240.9L1005 241.8Q509 540.0 13 837.0Z"/><path class="c7" d="M0 710.0Q502 449.3 1005 207.8L1005 208.7Q502 450.6 0 711.6Z"/><path class="c5" d="M0 315.8Q502 217.3 1005 158.7L1005 159.6Q502 218.5 0 317.4Z"/><path class="c6" d="M55 835.3Q530 513.9 1005 187.5L1005 188.4Q530 515.0 55 836.7Z"/><path class="c10" d="M0 175.8Q502 149.4 1005 125.8L1005 126.7Q502 150.8 0 177.8Z"/><path class="c5" d="M0 439.0Q502 258.8 1005 135.2L1005 136.1Q502 260.2 0 441.0Z"/><path class="c4" d="M0 500.1Q502 300.2 1005 149.0L1005 149.9Q502 301.6 0 501.9Z"/><path class="c8" d="M0 333.0Q502 221.3 1005 154.3L1005 155.2Q502 222.7 0 335.0Z"/><path class="c5" d="M271 835.0Q638 534.4 1005 213.4L1005 214.3Q638 535.9 271 837.0Z"/><path class="c10" d="M0 575.4Q502 365.1 1005 192.9L1005 193.8Q502 366.4 0 577.1Z"/><path class="c10" d="M0 275.2Q502 188.6 1005 131.2L1005 132.1Q502 190.0 0 277.2Z"/><path class="c8" d="M0 280.7Q502 199.4 1005 148.6L1005 149.5Q502 200.7 0 282.5Z"/><path class="c4" d="M0 215.1Q502 172.4 1005 142.9L1005 143.8Q502 173.7 0 216.7Z"/><path class="c0" d="M0 699.7Q502 416.5 1005 154.4L1005 155.3Q502 418.0 0 701.9Z"/><path class="c0" d="M0 558.2Q502 353.8 1005 189.9L1005 190.8Q502 355.2 0 560.0Z"/><path class="c15" d="M0 551.4Q502 351.6 1005 193.0L1005 193.9Q502 353.0 0 553.3Z"/><path class="c6" d="M0 579.4Q502 376.8 1005 211.6L1005 212.5Q502 377.9 0 580.8Z"/><path class="c13" d="M516 -0.9Q760 54.3 1005 93.6L1005 94.5Q760 55.6 516 0.9Z"/><path class="c1" d="M0 495.3Q502 307.3 1005 168.4L1005 169.3Q502 308.8 0 497.3Z"/><path class="c6" d="M0 649.8Q502 397.8 1005 173.8L1005 174.7Q502 399.0 0 651.4Z"/><path class="c7" d="M23 835.0Q514 522.7 1005 208.2L1005 209.1Q514 524.1 23 837.0Z"/><path class="c6" d="M112 835.1Q559 531.6 1005 218.5L1005 219.4Q559 532.9 112 836.9Z"/><path class="c8" d="M105 835.0Q555 509.8 1005 175.4L1005 176.3Q555 511.2 105 837.0Z"/><path class="c7" d="M0 767.7Q502 467.0 1005 177.0L1005 177.9Q502 468.5 0 769.8Z"/><path class="c4" d="M0 491.6Q502 294.4 1005 147.0L1005 147.9Q502 295.6 0 493.1Z"/><path class="c6" d="M92 834.9Q548 519.6 1005 196.3L1005 197.2Q548 521.1 92 837.1Z"/><path class="c7" d="M349 -1.1Q677 59.3 1005 86.2L1005 87.1Q677 60.8 349 1.1Z"/><path class="c2" d="M197 834.9Q601 539.6 1005 228.8L1005 229.7Q601 541.2 197 837.1Z"/><path class="c0" d="M614 -1.0Q810 43.0 1005 78.8L1005 79.7Q810 44.4 614 1.0Z"/><path class="c15" d="M0 616.8Q502 385.9 1005 187.7L1005 188.6Q502 387.1 0 618.2Z"/><path class="c4" d="M668 -1.1Q836 43.8 1005 83.7L1005 84.6Q836 45.3 668 1.1Z"/><path class="c7" d="M339 -0.8Q672 48.3 1005 62.8L1005 63.7Q672 49.5 339 0.8Z"/><path class="c1" d="M315 835.3Q660 541.0 1005 223.9L1005 224.8Q660 542.1 315 836.7Z"/><path class="c15" d="M0 760.7Q502 489.2 1005 229.2L1005 230.1Q502 490.3 0 762.0Z"/><path class="c9" d="M17 835.1Q511 514.0 1005 191.4L1005 192.3Q511 515.3 17 836.9Z"/><path class="c6" d="M395 -0.7Q700 58.1 1005 89.0L1005 89.9Q700 59.2 395 0.7Z"/><path class="c10" d="M0 544.3Q502 345.6 1005 189.1L1005 190.0Q502 346.7 0 545.7Z"/><path class="c1" d="M0 26.2Q502 104.7 1005 99.0L1005 99.9Q502 106.2 0 28.4Z"/><path class="c4" d="M0 685.2Q502 441.7 1005 220.8L1005 221.7Q502 443.3 0 687.4Z"/><path class="c5" d="M128 -0.9Q566 85.3 1005 104.9L1005 105.8Q566 86.7 128 0.9Z"/><path class="c6" d="M0 372.5Q502 231.9 1005 146.9L1005 147.8Q502 233.0 0 373.9Z"/><path class="c0" d="M52 835.3Q528 526.1 1005 212.3L1005 213.2Q528 527.2 52 836.7Z"/><path class="c5" d="M238 835.1Q621 533.1 1005 212.7L1005 213.6Q621 534.4 238 836.9Z"/><path class="c6" d="M0 110.1Q502 130.4 1005 117.4L1005 118.3Q502 131.9 0 112.2Z"/><path class="c6" d="M0 399.5Q502 244.6 1005 151.3L1005 152.2Q502 245.9 0 401.2Z"/><path class="c1" d="M0 128.4Q502 138.1 1005 125.5L1005 126.4Q502 139.3 0 129.9Z"/><path class="c4" d="M0 24.9Q502 94.7 1005 79.4L1005 80.3Q502 95.8 0 26.2Z"/><path class="c16" d="M437 213L1005 199"/><path class="c17" d="M295 194L1005 181"/><path class="c18" d="M297 139L1005 138"/><path class="c18" d="M438 352L1005 182"/><path class="c18" d="M541 390L1005 265"/><path class="c19" d="M402 464L1005 195"/><path class="c20" d="M278 371L1005 175"/><path class="c16" d="M340 393L1005 215"/><path class="c21" d="M456 341L1005 197"/><path class="c22" d="M513 230L1005 166"/><path class="c16" d="M425 233L1005 168"/><path class="c22" d="M422 139L1005 110"/><path class="c23" d="M336 247L1005 160"/><path class="c18" d="M446 449L1005 236"/><path class="c20" d="M190 183L1005 190"/><path class="c16" d="M234 236L1005 185"/><path class="c20" d="M210 228L1005 185"/><path class="c23" d="M547 433L1005 190"/><path class="c18" d="M412 445L1005 221"/><path class="c24" d="M337 424L1005 179"/><path class="c25" d="M324 372L1005 206"/><path class="c18" d="M263 374L1005 203"/><path class="c17" d="M340 158L1005 167"/><path class="c18" d="M361 410L1005 213"/><path class="c25" d="M229 414L1005 169"/><path class="c25" d="M443 201L1005 170"/><path class="c18" d="M302 171L1005 145"/><path class="c17" d="M539 252L1005 164"/><path class="c24" d="M234 213L1005 159"/><path class="c26" d="M288 179L1005 155"/><path class="c16" d="M268 175L1005 117"/><path class="c27" d="M190 268L1005 171"/><path class="c18" d="M238 340L1005 198"/><path class="c18" d="M504 450L1005 235"/><path class="c24" d="M282 233L1005 140"/><path class="c17" d="M496 439L1005 228"/><path class="c25" d="M492 442L1005 217"/><path class="c27" d="M475 254L1005 166"/><path class="c17" d="M300 303L1005 210"/><path class="c28" d="M552 276L1005 162"/><path class="c29" d="M411 409L1005 186"/><path class="c22" d="M584 427L1005 211"/><path class="c20" d="M270 132L1005 121"/><path class="c30" d="M354 321L1005 190"/><path class="c20" d="M360 226L1005 202"/><path class="c16" d="M383 439L1005 189"/><path class="c23" d="M286 159L1005 146"/><path class="c16" d="M312 322L1005 202"/><path class="c18" d="M413 231L1005 156"/><path class="c28" d="M174 149L1005 128"/><path class="c31" d="M179 229L1005 134"/><path class="c22" d="M483 409L1005 235"/><path class="c29" d="M201 284L1005 169"/><path class="c23" d="M550 259L1005 192"/><path class="c25" d="M485 224L1005 173"/><path class="c27" d="M345 232L1005 163"/><path class="c26" d="M216 283L1005 163"/><path class="c16" d="M427 319L1005 182"/><path class="c28" d="M225 268L1005 163"/><path class="c21" d="M153 288L1005 144"/><path class="c25" d="M156 285L1005 154"/><path class="c24" d="M451 417L1005 223"/><path class="c25" d="M257 293L1005 200"/><path class="c28" d="M302 292L1005 196"/><path class="c27" d="M498 435L1005 209"/><path class="c27" d="M366 354L1005 191"/><path class="c17" d="M257 294L1005 156"/><path class="c24" d="M306 378L1005 193"/><path class="c18" d="M176 425L1005 204"/><path class="c26" d="M235 364L1005 236"/><path class="c32" d="M340 289L1005 171"/><path class="c28" d="M367 326L1005 235"/><path class="c17" d="M402 374L1005 179"/><path class="c21" d="M227 334L1005 195"/><path class="c16" d="M426 365L1005 181"/><path class="c28" d="M290 209L1005 154"/><path class="c18" d="M227 202L1005 190"/><path class="c30" d="M258 430L1005 214"/><path class="c18" d="M363 311L1005 181"/><path class="c16" d="M164 293L1005 129"/><path class="c33" d="M200 174L1005 140"/><path class="c17" d="M274 353L1005 168"/><path class="c18" d="M221 338L1005 160"/><path class="c21" d="M205 280L1005 219"/><path class="c18" d="M406 238L1005 138"/><path class="c17" d="M443 426L1005 219"/><path class="c25" d="M336 263L1005 176"/><path class="c16" d="M204 251L1005 181"/><path class="c24" d="M493 347L1005 220"/><path class="c26" d="M433 191L1005 135"/><path class="c16" d="M447 152L1005 129"/><path class="c18" d="M446 468L1005 205"/><path class="c17" d="M244 348L1005 178"/><path class="c31" d="M390 428L1005 173"/><path class="c16" d="M344 112L1005 112"/><path class="c16" d="M124 240L1005 177"/><path class="c25" d="M458 299L1005 171"/><path class="c17" d="M426 267L1005 185"/><path class="c20" d="M294 278L1005 202"/><path class="c25" d="M222 390L1005 205"/><path class="c24" d="M322 180L1005 145"/><path class="c32" d="M147 157L1005 162"/><path class="c25" d="M290 461L1005 183"/><path class="c18" d="M501 344L1005 167"/><path class="c17" d="M295 443L1005 205"/><path class="c16" d="M172 272L1005 208"/><path class="c25" d="M598 348L1005 199"/><path class="c24" d="M314 313L1005 154"/><path class="c25" d="M436 402L1005 195"/><path class="c24" d="M262 383L1005 212"/><path class="c17" d="M173 311L1005 184"/><path class="c28" d="M516 470L1005 216"/><path class="c22" d="M455 292L1005 146"/><path class="c22" d="M341 175L1005 136"/><path class="c16" d="M164 323L1005 157"/><path class="c25" d="M305 299L1005 178"/><path class="c17" d="M572 352L1005 197"/><path class="c23" d="M464 280L1005 200"/><path class="c27" d="M204 399L1005 155"/><path class="c17" d="M188 194L1005 158"/><path class="c25" d="M165 360L1005 204"/><path class="c19" d="M342 181L1005 172"/><path class="c19" d="M519 397L1005 210"/><path class="c16" d="M180 255L1005 155"/><path class="c30" d="M356 393L1005 199"/><path class="c19" d="M274 196L1005 187"/><path class="c17" d="M218 316L1005 220"/><path class="c18" d="M148 428L1005 188"/><path class="c26" d="M192 273L1005 184"/><path class="c17" d="M490 233L1005 169"/><path class="c25" d="M394 282L1005 157"/><path class="c19" d="M437 474L1005 208"/><path class="c31" d="M207 285L1005 150"/><path class="c24" d="M252 196L1005 176"/><path class="c19" d="M311 214L1005 160"/><path class="c24" d="M338 374L1005 198"/><path class="c29" d="M250 239L1005 138"/><path class="c30" d="M270 223L1005 168"/><path class="c18" d="M560 260L1005 180"/><path class="c18" d="M313 338L1005 206"/><path class="c17" d="M184 269L1005 177"/><path class="c17" d="M401 171L1005 113"/><path class="c18" d="M510 474L1005 208"/><path class="c16" d="M403 315L1005 206"/><path class="c18" d="M364 344L1005 173"/><path class="c17" d="M449 258L1005 126"/><path class="c23" d="M230 327L1005 175"/><path class="c18" d="M271 190L1005 181"/><path class="c23" d="M415 222L1005 210"/><path class="c18" d="M484 283L1005 186"/><path class="c32" d="M108 281L1005 160"/><path class="c27" d="M215 101L1005 107"/><path class="c29" d="M139 404L1005 177"/><path class="c29" d="M147 446L1005 178"/><path class="c19" d="M201 434L1005 229"/><path class="c33" d="M181 430L1005 220"/><path class="c19" d="M400 123L1005 125"/><path class="c22" d="M415 262L1005 171"/><path class="c18" d="M448 416L1005 203"/><path class="c22" d="M236 410L1005 203"/><path class="c25" d="M214 255L1005 162"/><path class="c18" d="M564 309L1005 208"/><path class="c16" d="M487 427L1005 228"/><path class="c24" d="M294 444L1005 225"/><path class="c21" d="M577 231L1005 200"/><path class="c30" d="M270 186L1005 170"/><path class="c24" d="M493 160L1005 145"/><path class="c16" d="M438 101L1005 109"/><path class="c17" d="M389 139L1005 145"/><path class="c16" d="M162 338L1005 173"/><path class="c17" d="M322 350L1005 155"/><path class="c31" d="M429 401L1005 172"/><path class="c22" d="M432 354L1005 192"/><path class="c23" d="M593 239L1005 177"/><path class="c27" d="M144 395L1005 200"/><path class="c24" d="M195 253L1005 163"/><path class="c20" d="M427 324L1005 193"/><path class="c23" d="M511 423L1005 222"/><path class="c25" d="M411 411L1005 226"/><path class="c25" d="M470 106L1005 104"/><path class="c18" d="M379 362L1005 187"/><path class="c27" d="M344 226L1005 137"/><path class="c30" d="M334 287L1005 143"/><path class="c22" d="M252 141L1005 150"/><path class="c18" d="M539 381L1005 212"/><path class="c32" d="M498 392L1005 255"/><path class="c31" d="M422 292L1005 178"/><path class="c16" d="M395 332L1005 164"/><path class="c26" d="M435 150L1005 135"/><path class="c28" d="M404 454L1005 200"/><path class="c25" d="M338 242L1005 146"/><path class="c28" d="M369 350L1005 185"/><path class="c30" d="M417 391L1005 193"/><path class="c29" d="M545 405L1005 210"/><path class="c16" d="M263 144L1005 108"/><path class="c26" d="M455 358L1005 182"/><path class="c23" d="M266 284L1005 185"/><path class="c31" d="M537 216L1005 148"/><path class="c18" d="M563 438L1005 185"/><path class="c17" d="M312 176L1005 144"/><path class="c18" d="M133 469L1005 183"/><path class="c26" d="M564 396L1005 213"/><path class="c26" d="M442 437L1005 191"/><path class="c16" d="M405 274L1005 186"/><path class="c17" d="M416 229L1005 156"/><path class="c18" d="M275 231L1005 167"/><path class="c17" d="M334 153L1005 151"/><path class="c16" d="M384 361L1005 185"/><path class="c23" d="M280 349L1005 215"/><path class="c25" d="M272 270L1005 168"/><path class="c24" d="M299 325L1005 186"/><path class="c20" d="M261 225L1005 170"/><path class="c17" d="M188 435L1005 186"/><path class="c25" d="M338 456L1005 206"/><path class="c24" d="M466 443L1005 211"/><path class="c18" d="M282 206L1005 144"/><path class="c25" d="M174 332L1005 200"/><path class="c24" d="M424 444L1005 189"/><path class="c33" d="M331 302L1005 205"/><path class="c27" d="M281 330L1005 189"/><path class="c24" d="M365 400L1005 211"/><path class="c16" d="M487 415L1005 250"/><path class="c27" d="M199 470L1005 169"/><path class="c33" d="M207 218L1005 121"/><path class="c30" d="M282 139L1005 136"/><path class="c27" d="M358 131L1005 139"/><path class="c18" d="M396 328L1005 188"/><path class="c17" d="M197 204L1005 154"/><path class="c29" d="M513 278L1005 194"/><path class="c20" d="M269 281L1005 181"/><path class="c24" d="M396 342L1005 172"/><path class="c31" d="M579 281L1005 160"/><path class="c16" d="M341 410L1005 178"/><path class="c17" d="M200 329L1005 137"/><path class="c25" d="M268 115L1005 112"/><path class="c31" d="M358 189L1005 146"/><path class="c29" d="M501 413L1005 206"/><path class="c20" d="M428 132L1005 142"/><path class="c25" d="M464 253L1005 203"/><path class="c19" d="M237 226L1005 167"/><path class="c24" d="M466 306L1005 167"/><path class="c24" d="M527 261L1005 152"/><path class="c24" d="M380 425L1005 205"/><path class="c25" d="M422 415L1005 192"/><path class="c26" d="M409 308L1005 199"/><path class="c19" d="M210 255L1005 176"/><path class="c28" d="M533 395L1005 197"/><path class="c18" d="M567 372L1005 149"/><path class="c27" d="M527 384L1005 228"/><path class="c23" d="M267 228L1005 135"/><path class="c30" d="M481 282L1005 185"/><path class="c29" d="M295 391L1005 212"/><path class="c25" d="M322 227L1005 177"/><path class="c29" d="M537 328L1005 169"/><path class="c18" d="M148 436L1005 209"/><path class="c32" d="M279 450L1005 219"/><path class="c24" d="M326 287L1005 214"/><path class="c24" d="M524 460L1005 271"/></g><defs><linearGradient id="tw2" x1="0" y1="0" x2="1" y2="0"><stop offset="0" stop-color="#b05a10"/><stop offset="0.3" stop-color="#dc6a1c"/><stop offset="0.55" stop-color="#d08018"/><stop offset="0.8" stop-color="#98a020"/><stop offset="1" stop-color="#5a7a18"/></linearGradient><clipPath id="twc"><polygon points="362.0,283.0 379.0,283.0 377.0,676.0 354.0,676.0"/></clipPath></defs><polygon points="362.0,283.0 379.0,283.0 377.0,676.0 354.0,676.0" fill="url(#tw2)"/><ellipse cx="365.5" cy="676" rx="11.5" ry="3.5" fill="#9a6a10"/><g clip-path="url(#twc)"><path d="M350 294.0 L385 276.0" stroke="#a8d050" stroke-opacity="0.3" stroke-width="1.6"/><path d="M350 301.0 L385 283.0" stroke="#a8d050" stroke-opacity="0.3" stroke-width="1.6"/><path d="M350 308.0 L385 290.0" stroke="#a8d050" stroke-opacity="0.3" stroke-width="1.6"/><path d="M350 315.0 L385 297.0" stroke="#a8d050" stroke-opacity="0.3" stroke-width="1.6"/><path d="M350 322.0 L385 304.0" stroke="#a8d050" stroke-opacity="0.3" stroke-width="1.6"/><path d="M350 329.0 L385 311.0" stroke="#a8d050" stroke-opacity="0.3" stroke-width="1.6"/><path d="M350 336.0 L385 318.0" stroke="#a8d050" stroke-opacity="0.3" stroke-width="1.6"/><path d="M350 343.0 L385 325.0" stroke="#a8d050" stroke-opacity="0.3" stroke-width="1.6"/><path d="M350 350.0 L385 332.0" stroke="#a8d050" stroke-opacity="0.3" stroke-width="1.6"/><path d="M350 357.0 L385 339.0" stroke="#a8d050" stroke-opacity="0.3" stroke-width="1.6"/><path d="M350 364.0 L385 346.0" stroke="#a8d050" stroke-opacity="0.3" stroke-width="1.6"/><path d="M350 371.0 L385 353.0" stroke="#a8d050" stroke-opacity="0.3" stroke-width="1.6"/><path d="M350 378.0 L385 360.0" stroke="#a8d050" stroke-opacity="0.3" stroke-width="1.6"/><path d="M350 385.0 L385 367.0" stroke="#a8d050" stroke-opacity="0.3" stroke-width="1.6"/><path d="M350 392.0 L385 374.0" stroke="#a8d050" stroke-opacity="0.3" stroke-width="1.6"/><path d="M350 399.0 L385 381.0" stroke="#a8d050" stroke-opacity="0.3" stroke-width="1.6"/><path d="M350 406.0 L385 388.0" stroke="#a8d050" stroke-opacity="0.3" stroke-width="1.6"/><path d="M350 413.0 L385 395.0" stroke="#a8d050" stroke-opacity="0.3" stroke-width="1.6"/><path d="M350 420.0 L385 402.0" stroke="#a8d050" stroke-opacity="0.3" stroke-width="1.6"/><path d="M350 427.0 L385 409.0" stroke="#a8d050" stroke-opacity="0.3" stroke-width="1.6"/><path d="M350 434.0 L385 416.0" stroke="#a8d050" stroke-opacity="0.3" stroke-width="1.6"/><path d="M350 441.0 L385 423.0" stroke="#a8d050" stroke-opacity="0.3" stroke-width="1.6"/><path d="M350 448.0 L385 430.0" stroke="#a8d050" stroke-opacity="0.3" stroke-width="1.6"/><path d="M350 455.0 L385 437.0" stroke="#a8d050" stroke-opacity="0.3" stroke-width="1.6"/><path d="M350 462.0 L385 444.0" stroke="#a8d050" stroke-opacity="0.3" stroke-width="1.6"/><path d="M350 469.0 L385 451.0" stroke="#a8d050" stroke-opacity="0.3" stroke-width="1.6"/><path d="M350 476.0 L385 458.0" stroke="#a8d050" stroke-opacity="0.3" stroke-width="1.6"/><path d="M350 483.0 L385 465.0" stroke="#a8d050" stroke-opacity="0.3" stroke-width="1.6"/><path d="M350 490.0 L385 472.0" stroke="#a8d050" stroke-opacity="0.3" stroke-width="1.6"/><path d="M350 497.0 L385 479.0" stroke="#a8d050" stroke-opacity="0.3" stroke-width="1.6"/><path d="M350 504.0 L385 486.0" stroke="#a8d050" stroke-opacity="0.3" stroke-width="1.6"/><path d="M350 511.0 L385 493.0" stroke="#a8d050" stroke-opacity="0.3" stroke-width="1.6"/><path d="M350 518.0 L385 500.0" stroke="#a8d050" stroke-opacity="0.3" stroke-width="1.6"/><path d="M350 525.0 L385 507.0" stroke="#a8d050" stroke-opacity="0.3" stroke-width="1.6"/><path d="M350 532.0 L385 514.0" stroke="#a8d050" stroke-opacity="0.3" stroke-width="1.6"/><path d="M350 539.0 L385 521.0" stroke="#a8d050" stroke-opacity="0.3" stroke-width="1.6"/><path d="M350 546.0 L385 528.0" stroke="#a8d050" stroke-opacity="0.3" stroke-width="1.6"/><path d="M350 553.0 L385 535.0" stroke="#a8d050" stroke-opacity="0.3" stroke-width="1.6"/><path d="M350 560.0 L385 542.0" stroke="#a8d050" stroke-opacity="0.3" stroke-width="1.6"/><path d="M350 567.0 L385 549.0" stroke="#a8d050" stroke-opacity="0.3" stroke-width="1.6"/><path d="M350 574.0 L385 556.0" stroke="#a8d050" stroke-opacity="0.3" stroke-width="1.6"/><path d="M350 581.0 L385 563.0" stroke="#a8d050" stroke-opacity="0.3" stroke-width="1.6"/><path d="M350 588.0 L385 570.0" stroke="#a8d050" stroke-opacity="0.3" stroke-width="1.6"/><path d="M350 595.0 L385 577.0" stroke="#a8d050" stroke-opacity="0.3" stroke-width="1.6"/><path d="M350 602.0 L385 584.0" stroke="#a8d050" stroke-opacity="0.3" stroke-width="1.6"/><path d="M350 609.0 L385 591.0" stroke="#a8d050" stroke-opacity="0.3" stroke-width="1.6"/><path d="M350 616.0 L385 598.0" stroke="#a8d050" stroke-opacity="0.3" stroke-width="1.6"/><path d="M350 623.0 L385 605.0" stroke="#a8d050" stroke-opacity="0.3" stroke-width="1.6"/><path d="M350 630.0 L385 612.0" stroke="#a8d050" stroke-opacity="0.3" stroke-width="1.6"/><path d="M350 637.0 L385 619.0" stroke="#a8d050" stroke-opacity="0.3" stroke-width="1.6"/><path d="M350 644.0 L385 626.0" stroke="#a8d050" stroke-opacity="0.3" stroke-width="1.6"/><path d="M350 651.0 L385 633.0" stroke="#a8d050" stroke-opacity="0.3" stroke-width="1.6"/><path d="M350 658.0 L385 640.0" stroke="#a8d050" stroke-opacity="0.3" stroke-width="1.6"/><path d="M350 665.0 L385 647.0" stroke="#a8d050" stroke-opacity="0.3" stroke-width="1.6"/><path d="M350 672.0 L385 654.0" stroke="#a8d050" stroke-opacity="0.3" stroke-width="1.6"/><path d="M350 679.0 L385 661.0" stroke="#a8d050" stroke-opacity="0.3" stroke-width="1.6"/><path d="M350 686.0 L385 668.0" stroke="#a8d050" stroke-opacity="0.3" stroke-width="1.6"/><path d="M350 693.0 L385 675.0" stroke="#a8d050" stroke-opacity="0.3" stroke-width="1.6"/><path d="M350 700.0 L385 682.0" stroke="#a8d050" stroke-opacity="0.3" stroke-width="1.6"/><path d="M350 707.0 L385 689.0" stroke="#a8d050" stroke-opacity="0.3" stroke-width="1.6"/></g><polygon points="360.0,265.9 358.8,256.4 356.5,246.9 354.2,237.4 353.5,227.9 353.1,218.4 354.3,208.9 355.4,199.4 356.8,189.9 358.4,180.4 359.8,170.9 360.9,161.4 362.0,152.0 362.2,142.5 362.5,133.0 362.7,123.5 363.0,114.0 363.2,104.5 363.4,95.0 363.6,85.5 363.8,76.0 363.9,66.5 364.1,57.0 364.3,47.5 364.5,38.0 371.5,38.0 371.5,47.5 371.5,57.0 371.6,66.5 371.6,76.0 371.6,85.5 371.6,95.0 371.6,104.5 371.7,114.0 371.8,123.5 371.9,133.0 371.9,142.5 372.0,152.0 373.0,161.6 373.9,171.1 375.1,180.6 376.5,190.1 377.8,199.6 378.7,209.1 379.7,218.6 379.2,228.1 378.3,237.6 375.8,247.1 373.3,256.6 372.0,266.1" fill="#e8b418" fill-opacity="1"/><polygon points="366.6,266.0 366.8,256.5 367.1,247.0 367.5,237.5 367.6,228.0 367.7,218.5 367.7,209.0 367.7,199.5 367.6,190.0 367.6,180.5 367.5,171.0 367.5,161.5 367.5,152.0 367.6,142.5 367.6,133.0 367.7,123.5 367.8,114.0 367.8,104.5 367.9,95.0 368.0,85.5 368.1,76.0 368.1,66.5 368.2,57.0 368.3,47.5 368.3,38.0 371.5,38.0 371.5,47.5 371.5,57.0 371.6,66.5 371.6,76.0 371.6,85.5 371.6,95.0 371.6,104.5 371.7,114.0 371.8,123.5 371.9,133.0 371.9,142.5 372.0,152.0 373.0,161.6 373.9,171.1 375.1,180.6 376.5,190.1 377.8,199.6 378.7,209.1 379.7,218.6 379.2,228.1 378.3,237.6 375.8,247.1 373.3,256.6 372.0,266.1" fill="#d89a18" fill-opacity="0.6"/><polygon points="360.0,265.9 358.8,256.4 356.5,246.9 354.2,237.4 353.5,227.9 353.1,218.4 354.3,208.9 355.4,199.4 356.8,189.9 358.4,180.4 359.8,170.9 360.9,161.4 362.0,152.0 362.2,142.5 362.5,133.0 362.7,123.5 363.0,114.0 363.2,104.5 363.4,95.0 363.6,85.5 363.8,76.0 363.9,66.5 364.1,57.0 364.3,47.5 364.5,38.0 367.0,38.0 366.8,47.5 366.7,57.0 366.6,66.5 366.5,76.0 366.4,85.5 366.3,95.0 366.1,104.5 366.0,114.0 365.9,123.5 365.8,133.0 365.6,142.5 365.5,152.0 365.1,161.5 364.7,171.0 364.2,180.5 363.7,190.0 363.2,199.5 362.8,209.0 362.4,218.5 362.5,228.0 362.6,237.5 363.3,247.0 363.9,256.5 364.2,266.0" fill="#b8c020" fill-opacity="0.8"/><polygon points="356.5,180.8 356.8,174.8 357.2,168.9 357.5,162.9 357.8,157.0 358.2,151.0 358.5,145.0 358.8,139.1 359.2,133.1 359.5,127.2 359.8,121.2 360.2,115.3 360.5,109.3 360.8,103.3 361.2,97.4 361.5,91.4 361.8,85.5 362.2,79.5 362.5,73.6 362.8,67.6 363.2,61.7 363.5,55.7 363.8,49.7 364.2,43.8 364.5,37.8 369.7,38.1 369.5,44.0 369.2,50.0 368.9,56.0 368.7,61.9 368.4,67.9 368.1,73.8 367.9,79.8 367.6,85.8 367.3,91.7 367.0,97.7 366.8,103.6 366.5,109.6 366.2,115.6 366.0,121.5 365.7,127.5 365.4,133.4 365.1,139.4 364.9,145.4 364.6,151.3 364.3,157.3 364.1,163.2 363.8,169.2 363.5,175.2 363.2,181.1" fill="#20a890" fill-opacity="0.9"/><polygon points="356.5,180.8 356.8,174.8 357.2,168.9 357.5,162.9 357.8,157.0 358.2,151.0 358.5,145.0 358.8,139.1 359.2,133.1 359.5,127.2 359.8,121.2 360.2,115.3 360.5,109.3 360.8,103.3 361.2,97.4 361.5,91.4 361.8,85.5 362.2,79.5 362.5,73.6 362.8,67.6 363.2,61.7 363.5,55.7 363.8,49.7 364.2,43.8 364.5,37.8 368.3,38.0 368.1,44.0 367.8,49.9 367.5,55.9 367.2,61.9 366.9,67.8 366.6,73.8 366.3,79.7 366.0,85.7 365.8,91.6 365.5,97.6 365.2,103.6 364.9,109.5 364.6,115.5 364.3,121.4 364.0,127.4 363.7,133.4 363.5,139.3 363.2,145.3 362.9,151.2 362.6,157.2 362.3,163.1 362.0,169.1 361.7,175.1 361.4,181.0" fill="#2a36a0" fill-opacity="1"/><polygon points="361.9,285.7 354.7,289.5 347.4,293.3 340.2,297.2 332.9,301.0 325.7,304.8 318.4,308.6 311.2,312.5 303.9,316.3 296.7,320.1 289.5,323.9 282.2,327.8 275.0,331.6 267.7,335.4 260.5,339.2 253.2,343.1 246.0,346.9 238.7,350.7 231.5,354.5 224.2,358.4 217.0,362.2 209.7,366.0 202.5,369.8 195.2,373.7 188.0,377.5 184.0,370.5 191.0,366.3 198.0,362.0 205.0,357.7 212.0,353.5 219.0,349.2 226.0,345.0 233.0,340.7 240.0,336.4 247.0,332.2 254.0,327.9 261.0,323.7 268.0,319.4 275.0,315.2 282.0,310.9 289.1,306.6 296.1,302.4 303.1,298.1 310.1,293.9 317.1,289.6 324.1,285.3 331.1,281.1 338.1,276.8 345.1,272.6 352.1,268.3" fill="#e0b018" fill-opacity="1"/><polygon points="361.9,285.7 354.7,289.5 347.4,293.3 340.2,297.2 332.9,301.0 325.7,304.8 318.4,308.6 311.2,312.5 303.9,316.3 296.7,320.1 289.5,323.9 282.2,327.8 275.0,331.6 267.7,335.4 260.5,339.2 253.2,343.1 246.0,346.9 238.7,350.7 231.5,354.5 224.2,358.4 217.0,362.2 209.7,366.0 202.5,369.8 195.2,373.7 188.0,377.5 186.2,374.3 193.3,370.3 200.5,366.3 207.6,362.3 214.7,358.3 221.9,354.2 229.0,350.2 236.2,346.2 243.3,342.2 250.4,338.2 257.6,334.1 264.7,330.1 271.8,326.1 279.0,322.1 286.1,318.1 293.3,314.0 300.4,310.0 307.5,306.0 314.7,302.0 321.8,298.0 328.9,293.9 336.1,289.9 343.2,285.9 350.4,281.9 357.5,277.9" fill="#b0b820" fill-opacity="0.9"/><polygon points="361.9,285.7 354.7,289.5 347.4,293.3 340.2,297.2 332.9,301.0 325.7,304.8 318.4,308.6 311.2,312.5 303.9,316.3 296.7,320.1 289.5,323.9 282.2,327.8 275.0,331.6 267.7,335.4 260.5,339.2 253.2,343.1 246.0,346.9 238.7,350.7 231.5,354.5 224.2,358.4 217.0,362.2 209.7,366.0 202.5,369.8 195.2,373.7 188.0,377.5 186.9,375.5 194.0,371.6 201.2,367.6 208.4,363.7 215.6,359.7 222.8,355.8 229.9,351.9 237.1,347.9 244.3,344.0 251.5,340.0 258.7,336.1 265.8,332.1 273.0,328.2 280.2,324.2 287.4,320.3 294.6,316.3 301.7,312.4 308.9,308.4 316.1,304.5 323.3,300.6 330.5,296.6 337.6,292.7 344.8,288.7 352.0,284.8 359.2,280.8" fill="#2a9a70" fill-opacity="0.9"/><polygon points="361.9,285.7 354.7,289.5 347.4,293.3 340.2,297.2 332.9,301.0 325.7,304.8 318.4,308.6 311.2,312.5 303.9,316.3 296.7,320.1 289.5,323.9 282.2,327.8 275.0,331.6 267.7,335.4 260.5,339.2 253.2,343.1 246.0,346.9 238.7,350.7 231.5,354.5 224.2,358.4 217.0,362.2 209.7,366.0 202.5,369.8 195.2,373.7 188.0,377.5 187.4,376.4 194.6,372.5 201.8,368.7 209.0,364.8 216.2,360.9 223.4,357.0 230.6,353.1 237.9,349.2 245.1,345.3 252.3,341.4 259.5,337.5 266.7,333.7 273.9,329.8 281.1,325.9 288.3,322.0 295.6,318.1 302.8,314.2 310.0,310.3 317.2,306.4 324.4,302.5 331.6,298.6 338.8,294.8 346.0,290.9 353.2,287.0 360.5,283.1" fill="#2a36a0" fill-opacity="1"/><polygon points="278.2,328.6 274.5,330.7 270.7,332.7 266.9,334.7 263.1,336.7 259.4,338.7 255.6,340.7 251.8,342.8 248.1,344.8 244.3,346.8 240.5,348.8 236.8,350.8 233.0,352.8 229.2,354.9 225.4,356.9 221.7,358.9 217.9,360.9 214.1,362.9 210.4,364.9 206.6,367.0 202.8,369.0 199.1,371.0 195.3,373.0 191.5,375.0 187.7,377.0 185.8,373.7 189.5,371.6 193.2,369.4 196.9,367.3 200.6,365.2 204.3,363.0 208.0,360.9 211.7,358.7 215.4,356.6 219.1,354.5 222.8,352.3 226.5,350.2 230.3,348.1 234.0,345.9 237.7,343.8 241.4,341.7 245.1,339.5 248.8,337.4 252.5,335.3 256.2,333.1 259.9,331.0 263.6,328.8 267.3,326.7 271.0,324.6 274.7,322.4" fill="#2a9a70" fill-opacity="0.8"/><polygon points="278.2,328.6 274.5,330.7 270.7,332.7 266.9,334.7 263.1,336.7 259.4,338.7 255.6,340.7 251.8,342.8 248.1,344.8 244.3,346.8 240.5,348.8 236.8,350.8 233.0,352.8 229.2,354.9 225.4,356.9 221.7,358.9 217.9,360.9 214.1,362.9 210.4,364.9 206.6,367.0 202.8,369.0 199.1,371.0 195.3,373.0 191.5,375.0 187.7,377.0 186.3,374.6 190.1,372.5 193.8,370.4 197.5,368.3 201.2,366.2 205.0,364.1 208.7,362.0 212.4,359.9 216.1,357.8 219.8,355.7 223.6,353.6 227.3,351.5 231.0,349.4 234.7,347.3 238.4,345.2 242.2,343.1 245.9,341.0 249.6,338.9 253.3,336.7 257.0,334.6 260.8,332.5 264.5,330.4 268.2,328.3 271.9,326.2 275.6,324.1" fill="#2a36a0" fill-opacity="1"/><polygon points="383.0,271.0 389.7,276.3 396.3,281.7 402.9,287.0 409.6,292.3 416.2,297.6 422.9,303.0 429.5,308.3 436.2,313.6 442.8,318.9 449.4,324.3 456.1,329.6 462.7,334.9 469.4,340.2 476.0,345.6 482.6,350.9 489.3,356.2 495.9,361.5 502.6,366.9 509.2,372.2 515.8,377.5 522.5,382.8 529.1,388.2 535.8,393.5 542.4,398.8 537.6,405.2 530.6,400.3 523.7,395.3 516.8,390.4 509.8,385.5 502.9,380.6 495.9,375.6 489.0,370.7 482.1,365.8 475.1,360.9 468.2,355.9 461.2,351.0 454.3,346.1 447.3,341.2 440.4,336.2 433.5,331.3 426.5,326.4 419.6,321.5 412.6,316.5 405.7,311.6 398.7,306.7 391.8,301.8 384.9,296.8 377.9,291.9 371.0,287.0" fill="#dcac18" fill-opacity="1"/><polygon points="375.8,280.6 382.6,285.7 389.4,290.8 396.3,295.9 403.1,300.9 409.9,306.0 416.7,311.1 423.5,316.2 430.4,321.3 437.2,326.4 444.0,331.4 450.8,336.5 457.7,341.6 464.5,346.7 471.3,351.8 478.1,356.9 484.9,362.0 491.8,367.0 498.6,372.1 505.4,377.2 512.2,382.3 519.1,387.4 525.9,392.5 532.7,397.6 539.5,402.6 537.6,405.2 530.6,400.3 523.7,395.3 516.8,390.4 509.8,385.5 502.9,380.6 495.9,375.6 489.0,370.7 482.1,365.8 475.1,360.9 468.2,355.9 461.2,351.0 454.3,346.1 447.3,341.2 440.4,336.2 433.5,331.3 426.5,326.4 419.6,321.5 412.6,316.5 405.7,311.6 398.7,306.7 391.8,301.8 384.9,296.8 377.9,291.9 371.0,287.0" fill="#d07a10" fill-opacity="0.5"/><polygon points="455.0,338.0 458.5,340.7 462.1,343.3 465.6,346.0 469.2,348.7 472.7,351.3 476.2,354.0 479.8,356.7 483.3,359.3 486.9,362.0 490.4,364.7 494.0,367.3 497.5,370.0 501.0,372.7 504.6,375.3 508.1,378.0 511.7,380.7 515.2,383.3 518.8,386.0 522.3,388.7 525.8,391.3 529.4,394.0 532.9,396.7 536.5,399.3 540.0,402.0 537.9,404.8 534.3,402.2 530.7,399.7 527.0,397.1 523.4,394.5 519.8,392.0 516.2,389.4 512.6,386.8 509.0,384.3 505.3,381.7 501.7,379.1 498.1,376.6 494.5,374.0 490.9,371.4 487.3,368.9 483.6,366.3 480.0,363.7 476.4,361.2 472.8,358.6 469.2,356.0 465.6,353.5 461.9,350.9 458.3,348.3 454.7,345.8 451.1,343.2" fill="#2a9a70" fill-opacity="0.7"/><polygon points="453.6,339.9 457.2,342.5 460.7,345.1 464.3,347.8 467.9,350.4 471.4,353.0 475.0,355.7 478.6,358.3 482.1,360.9 485.7,363.5 489.3,366.2 492.8,368.8 496.4,371.4 500.0,374.1 503.6,376.7 507.1,379.3 510.7,382.0 514.3,384.6 517.8,387.2 521.4,389.9 525.0,392.5 528.5,395.1 532.1,397.7 535.7,400.4 539.2,403.0 537.9,404.8 534.3,402.2 530.7,399.7 527.0,397.1 523.4,394.5 519.8,392.0 516.2,389.4 512.6,386.8 509.0,384.3 505.3,381.7 501.7,379.1 498.1,376.6 494.5,374.0 490.9,371.4 487.3,368.9 483.6,366.3 480.0,363.7 476.4,361.2 472.8,358.6 469.2,356.0 465.6,353.5 461.9,350.9 458.3,348.3 454.7,345.8 451.1,343.2" fill="#2a36a0" fill-opacity="0.95"/><rect x="365" y="261" width="36" height="26" rx="10" fill="#d8a018"/><ellipse cx="362" cy="274" rx="12" ry="11" fill="#e4b020"/><ellipse cx="359" cy="270" rx="6" ry="5" fill="#f2cc40" fill-opacity="0.8"/><rect x="840" y="248" width="16" height="275" fill="url(#cbar)"/><rect x="840" y="539" width="16" height="275" fill="url(#cbar)"/><path d="M853 248.0 L865 248.0" stroke="#222" stroke-width="1.3"/><text x="870" y="252.0" font-family="Liberation Sans" font-size="15.5" letter-spacing="0.6" fill="#222">1.2e+01</text><path d="M853 282.4 L865 282.4" stroke="#222" stroke-width="1.3"/><text x="870" y="286.4" font-family="Liberation Sans" font-size="15.5" letter-spacing="0.6" fill="#222">11.5</text><path d="M853 316.8 L865 316.8" stroke="#222" stroke-width="1.3"/><text x="870" y="320.8" font-family="Liberation Sans" font-size="15.5" letter-spacing="0.6" fill="#222">11</text><path d="M853 351.1 L865 351.1" stroke="#222" stroke-width="1.3"/><text x="870" y="355.1" font-family="Liberation Sans" font-size="15.5" letter-spacing="0.6" fill="#222">10.5</text><path d="M853 385.5 L865 385.5" stroke="#222" stroke-width="1.3"/><text x="870" y="389.5" font-family="Liberation Sans" font-size="15.5" letter-spacing="0.6" fill="#222">10</text><path d="M853 419.9 L865 419.9" stroke="#222" stroke-width="1.3"/><text x="870" y="423.9" font-family="Liberation Sans" font-size="15.5" letter-spacing="0.6" fill="#222">9.5</text><path d="M853 454.2 L865 454.2" stroke="#222" stroke-width="1.3"/><text x="870" y="458.2" font-family="Liberation Sans" font-size="15.5" letter-spacing="0.6" fill="#222">9</text><path d="M853 488.6 L865 488.6" stroke="#222" stroke-width="1.3"/><text x="870" y="492.6" font-family="Liberation Sans" font-size="15.5" letter-spacing="0.6" fill="#222">8.5</text><path d="M853 523.0 L865 523.0" stroke="#222" stroke-width="1.3"/><text x="870" y="527.0" font-family="Liberation Sans" font-size="15.5" letter-spacing="0.6" fill="#222">8.0e+00</text><path d="M853 539.0 L865 539.0" stroke="#222" stroke-width="1.3"/><text x="870" y="543.0" font-family="Liberation Sans" font-size="15.5" letter-spacing="0.6" fill="#222">3.0e+02</text><path d="M853 573.4 L865 573.4" stroke="#222" stroke-width="1.3"/><text x="870" y="577.4" font-family="Liberation Sans" font-size="15.5" letter-spacing="0.6" fill="#222">200</text><path d="M853 607.8 L865 607.8" stroke="#222" stroke-width="1.3"/><text x="870" y="611.8" font-family="Liberation Sans" font-size="15.5" letter-spacing="0.6" fill="#222">100</text><path d="M853 642.1 L865 642.1" stroke="#222" stroke-width="1.3"/><text x="870" y="646.1" font-family="Liberation Sans" font-size="15.5" letter-spacing="0.6" fill="#222">0</text><path d="M853 676.5 L865 676.5" stroke="#222" stroke-width="1.3"/><text x="870" y="680.5" font-family="Liberation Sans" font-size="15.5" letter-spacing="0.6" fill="#222">-100</text><path d="M853 710.9 L865 710.9" stroke="#222" stroke-width="1.3"/><text x="870" y="714.9" font-family="Liberation Sans" font-size="15.5" letter-spacing="0.6" fill="#222">-200</text><path d="M853 745.2 L865 745.2" stroke="#222" stroke-width="1.3"/><text x="870" y="749.2" font-family="Liberation Sans" font-size="15.5" letter-spacing="0.6" fill="#222">-300</text><path d="M853 779.6 L865 779.6" stroke="#222" stroke-width="1.3"/><text x="870" y="783.6" font-family="Liberation Sans" font-size="15.5" letter-spacing="0.6" fill="#222">-400</text><path d="M853 814.0 L865 814.0" stroke="#222" stroke-width="1.3"/><text x="870" y="818.0" font-family="Liberation Sans" font-size="15.5" letter-spacing="0.6" fill="#222">-5.0e+02</text><text transform="translate(947,436) rotate(-90)" font-family="Liberation Sans" font-size="15.5" letter-spacing="0.6" fill="#222">U Magnitude</text><text transform="translate(953,682) rotate(-90)" font-family="Liberation Sans" font-size="15.5" fill="#222">p</text></svg>
<div class="t" style="left:1694px;top:141.2px;font-size:13px;color:#000;font-weight:normal;letter-spacing:0.05px;">HTMLView1</div>
<div style="position:absolute;left:1773px;top:141px;width:19px;height:18px;box-sizing:border-box;border:1px solid #b0aca6;border-radius:3px;background:linear-gradient(#fbfaf9,#ebe8e5);"></div>
<svg style="position:absolute;left:1773px;top:141px;" width="19" height="16" viewBox="0 0 19 16"><defs><linearGradient id="vbg" x1="0" y1="0" x2="1" y2="0"><stop offset="0" stop-color="#c8d0f0"/><stop offset="1" stop-color="#f4f6fc"/></linearGradient></defs><rect x="5.25" y="3.75" width="8.5" height="8.5" fill="url(#vbg)" stroke="#000" stroke-width="1.5"/><path d="M9.5 3.75 L9.5 12.25" stroke="#000" stroke-width="1.2"/></svg>
<div style="position:absolute;left:1794px;top:141px;width:19px;height:18px;box-sizing:border-box;border:1px solid #b0aca6;border-radius:3px;background:linear-gradient(#fbfaf9,#ebe8e5);"></div>
<svg style="position:absolute;left:1794px;top:141px;" width="19" height="16" viewBox="0 0 19 16"><rect x="5.25" y="3.75" width="8.5" height="8.5" fill="url(#vbg)" stroke="#000" stroke-width="1.5"/><path d="M5.25 8 L13.75 8" stroke="#000" stroke-width="1.2"/></svg>
<div style="position:absolute;left:1815px;top:141px;width:19px;height:18px;box-sizing:border-box;border:1px solid #b0aca6;border-radius:3px;background:linear-gradient(#fbfaf9,#ebe8e5);"></div>
<svg style="position:absolute;left:1815px;top:141px;" width="19" height="16" viewBox="0 0 19 16"><rect x="5.25" y="3.75" width="8.5" height="8.5" fill="#f6f6f4" stroke="#000" stroke-width="1.5"/><path d="M5 4.5 L14 4.5" stroke="#000" stroke-width="2"/></svg>
<div style="position:absolute;left:1836px;top:141px;width:19px;height:18px;box-sizing:border-box;border:1px solid #b0aca6;border-radius:3px;background:linear-gradient(#fbfaf9,#ebe8e5);"></div>
<svg style="position:absolute;left:1836px;top:141px;" width="19" height="16" viewBox="0 0 19 16"><rect x="5" y="3.5" width="9" height="9" rx="2.2" fill="none" stroke="#8a8884" stroke-width="1"/><rect x="6.8" y="7" width="3.5" height="3.5" fill="none" stroke="#8a8884" stroke-width="1"/><rect x="8.8" y="5.2" width="3.5" height="3.5" fill="none" stroke="#8a8884" stroke-width="1"/></svg>
<div style="position:absolute;left:1857px;top:141px;width:19px;height:18px;box-sizing:border-box;border:1px solid #b0aca6;border-radius:3px;background:linear-gradient(#fbfaf9,#ebe8e5);"></div>
<svg style="position:absolute;left:1857px;top:141px;" width="19" height="16" viewBox="0 0 19 16"><rect x="5" y="3.5" width="9" height="9" rx="2.2" fill="none" stroke="#8a8884" stroke-width="1"/><path d="M7 5.5 L12 10.5 M12 5.5 L7 10.5" stroke="#6a6864" stroke-width="1.6"/></svg>
<div style="position:absolute;left:1338px;top:161px;width:538px;height:692px;box-sizing:border-box;border-top:1px solid #e6e2de;border-left:2px solid #e6e2de;background:#faf8f6;"></div>
<div style="position:absolute;left:1350px;top:173px;width:323px;height:22px;box-sizing:border-box;border:1px solid #b5b0aa;border-radius:3px;background:linear-gradient(#fdfcfb,#ebe8e5);"></div>
<div class="t" style="left:1356px;top:176.2px;font-size:13px;color:#000;font-weight:normal;letter-spacing:0.05px;">Transient report (efficiency probe 1)</div>
<svg style="position:absolute;left:1656px;top:180px;" width="12" height="8" viewBox="0 0 12 8"><path d="M1 1 L6 6 L11 1 Z" fill="#333"/></svg>
<div style="position:absolute;left:1680px;top:173px;width:82px;height:22px;box-sizing:border-box;border:1px solid #b5b0aa;border-radius:3px;background:linear-gradient(#fdfcfb,#ebe8e5);"></div>
<div class="t" style="left:1684px;top:176.2px;font-size:13px;color:#000;font-weight:normal;letter-spacing:-0.15px;">Save as PDF</div>
<div style="position:absolute;left:1768px;top:173px;width:85px;height:22px;box-sizing:border-box;border:1px solid #b5b0aa;border-radius:3px;background:linear-gradient(#fdfcfb,#ebe8e5);"></div>
<div class="t" style="left:1772px;top:176.2px;font-size:13px;color:#000;font-weight:normal;letter-spacing:-0.15px;">Open as PDF</div>
<div style="position:absolute;left:1350px;top:201px;width:501px;height:640px;background:#fff;"></div>
<div style="position:absolute;left:1851px;top:201px;width:14px;height:640px;background:#dedad6;"></div>
<div style="position:absolute;left:1851px;top:655px;width:14px;height:55px;box-sizing:border-box;border-top:1px solid #c9c5bf;border-bottom:1px solid #c9c5bf;background:linear-gradient(90deg,#fdfdfc,#efedea);"></div>
<div style="position:absolute;left:1851px;top:201px;width:14px;height:12px;background:#f4f2ef;"></div>
<svg style="position:absolute;left:1851px;top:201px;" width="14" height="12" viewBox="0 0 14 12"><path d="M3 8 L7 4 L11 8 Z" fill="#444"/></svg>
<div style="position:absolute;left:1851px;top:829px;width:14px;height:12px;background:#f4f2ef;"></div>
<svg style="position:absolute;left:1851px;top:829px;" width="14" height="12" viewBox="0 0 14 12"><path d="M3 4 L7 8 L11 4 Z" fill="#444"/></svg>
<svg style="position:absolute;left:0;top:0;" width="1876" height="600" viewBox="0 0 1876 600"><path d="M1514.1 260 L1514.1 525.7" stroke="#c8c8c8" stroke-width="0.8" stroke-dasharray="1.5,2.5"/><path d="M1587.7 260 L1587.7 525.7" stroke="#c8c8c8" stroke-width="0.8" stroke-dasharray="1.5,2.5"/><path d="M1661.4 260 L1661.4 525.7" stroke="#c8c8c8" stroke-width="0.8" stroke-dasharray="1.5,2.5"/><path d="M1735.0 260 L1735.0 525.7" stroke="#c8c8c8" stroke-width="0.8" stroke-dasharray="1.5,2.5"/><path d="M1440 507.8 L1808.6 507.8" stroke="#c8c8c8" stroke-width="0.8" stroke-dasharray="1.5,2.5"/><path d="M1440 507.8 l5 0 M1808.6 507.8 l-5 0" stroke="#000" stroke-width="0.9"/><text x="1434" y="512.1" text-anchor="end" font-family="Liberation Sans" font-size="11.4" fill="#000">14500</text><path d="M1440 468.3 L1808.6 468.3" stroke="#c8c8c8" stroke-width="0.8" stroke-dasharray="1.5,2.5"/><path d="M1440 468.3 l5 0 M1808.6 468.3 l-5 0" stroke="#000" stroke-width="0.9"/><text x="1434" y="472.6" text-anchor="end" font-family="Liberation Sans" font-size="11.4" fill="#000">15000</text><path d="M1440 428.8 L1808.6 428.8" stroke="#c8c8c8" stroke-width="0.8" stroke-dasharray="1.5,2.5"/><path d="M1440 428.8 l5 0 M1808.6 428.8 l-5 0" stroke="#000" stroke-width="0.9"/><text x="1434" y="433.1" text-anchor="end" font-family="Liberation Sans" font-size="11.4" fill="#000">15500</text><path d="M1440 389.3 L1808.6 389.3" stroke="#c8c8c8" stroke-width="0.8" stroke-dasharray="1.5,2.5"/><path d="M1440 389.3 l5 0 M1808.6 389.3 l-5 0" stroke="#000" stroke-width="0.9"/><text x="1434" y="393.6" text-anchor="end" font-family="Liberation Sans" font-size="11.4" fill="#000">16000</text><path d="M1440 349.8 L1808.6 349.8" stroke="#c8c8c8" stroke-width="0.8" stroke-dasharray="1.5,2.5"/><path d="M1440 349.8 l5 0 M1808.6 349.8 l-5 0" stroke="#000" stroke-width="0.9"/><text x="1434" y="354.1" text-anchor="end" font-family="Liberation Sans" font-size="11.4" fill="#000">16500</text><path d="M1440 310.3 L1808.6 310.3" stroke="#c8c8c8" stroke-width="0.8" stroke-dasharray="1.5,2.5"/><path d="M1440 310.3 l5 0 M1808.6 310.3 l-5 0" stroke="#000" stroke-width="0.9"/><text x="1434" y="314.6" text-anchor="end" font-family="Liberation Sans" font-size="11.4" fill="#000">17000</text><path d="M1440 270.8 L1650 270.8" stroke="#c8c8c8" stroke-width="0.8" stroke-dasharray="1.5,2.5"/><path d="M1440 270.8 l5 0 M1808.6 270.8 l-5 0" stroke="#000" stroke-width="0.9"/><text x="1434" y="275.1" text-anchor="end" font-family="Liberation Sans" font-size="11.4" fill="#000">17500</text><path d="M1440.5 525.7 l0 -5 M1440.5 260 l0 5" stroke="#000" stroke-width="0.9"/><text x="1441.5" y="542" text-anchor="middle" font-family="Liberation Sans" font-size="11.4" fill="#000">0</text><path d="M1514.1 525.7 l0 -5 M1514.1 260 l0 5" stroke="#000" stroke-width="0.9"/><text x="1515.1" y="542" text-anchor="middle" font-family="Liberation Sans" font-size="11.4" fill="#000">1</text><path d="M1587.7 525.7 l0 -5 M1587.7 260 l0 5" stroke="#000" stroke-width="0.9"/><text x="1588.7" y="542" text-anchor="middle" font-family="Liberation Sans" font-size="11.4" fill="#000">2</text><path d="M1661.4 525.7 l0 -5 M1661.4 260 l0 5" stroke="#000" stroke-width="0.9"/><text x="1662.4" y="542" text-anchor="middle" font-family="Liberation Sans" font-size="11.4" fill="#000">3</text><path d="M1735.0 525.7 l0 -5 M1735.0 260 l0 5" stroke="#000" stroke-width="0.9"/><text x="1736.0" y="542" text-anchor="middle" font-family="Liberation Sans" font-size="11.4" fill="#000">4</text><path d="M1808.6 525.7 l0 -5 M1808.6 260 l0 5" stroke="#000" stroke-width="0.9"/><text x="1809.6" y="542" text-anchor="middle" font-family="Liberation Sans" font-size="11.4" fill="#000">5</text><rect x="1440" y="260" width="368.6" height="265.7" fill="none" stroke="#000" stroke-width="1"/><text x="1624" y="247" text-anchor="middle" font-family="Liberation Sans" font-size="11.4" fill="#000">Axial Force</text><text x="1624" y="560" text-anchor="middle" font-family="Liberation Sans" font-size="11.4" fill="#000">Simulated Time [ s ]</text><text transform="translate(1389,393) rotate(-90)" text-anchor="middle" font-family="Liberation Sans" font-size="11.4" fill="#000">Axial Force [ N ]</text><text x="1758" y="275.5" text-anchor="end" font-family="Liberation Sans" font-size="11.4" fill="#000">Axial Force</text><text x="1758" y="288" text-anchor="end" font-family="Liberation Sans" font-size="11.4" fill="#000">Average Axial Force</text><path d="M1765 271.5 L1795 271.5" stroke="#9400d3" stroke-width="1.3"/><path d="M1765 283.7 L1795 283.7" stroke="#009e73" stroke-width="2.8"/><polyline points="1440.5,444.6 1441.0,463.8 1441.6,422.4 1442.1,385.9 1442.6,369.0 1443.1,352.1 1443.7,335.1 1444.2,318.2 1444.7,316.6 1445.2,313.4 1445.8,310.9 1446.3,311.5 1446.8,308.6 1447.3,310.0 1447.9,307.1 1448.4,306.8 1448.9,308.1 1449.4,308.0 1450.0,307.8 1450.5,304.6 1451.0,304.0 1451.5,303.8 1452.1,303.5 1452.6,306.7 1453.1,304.7 1453.6,304.5 1454.2,304.0 1454.7,307.6 1455.2,307.1 1455.7,310.6 1456.3,307.9 1456.8,311.5 1457.3,310.3 1457.9,305.6 1458.4,312.4 1458.9,306.7 1459.4,308.0 1460.0,309.5 1460.5,308.3 1461.0,308.4 1461.5,307.7 1462.1,310.5 1462.6,311.5 1463.1,311.0 1463.6,311.3 1464.2,309.0 1464.7,310.0 1465.2,305.9 1465.7,311.3 1466.3,309.3 1466.8,308.6 1467.3,310.4 1467.8,302.0 1468.4,310.1 1468.9,305.4 1469.4,305.5 1469.9,300.7 1470.5,306.7 1471.0,299.4 1471.5,301.7 1472.1,299.3 1472.6,299.1 1473.1,295.3 1473.6,297.5 1474.2,294.2 1474.7,292.1 1475.2,287.9 1475.7,295.1 1476.3,286.1 1476.8,286.0 1477.3,287.6 1477.8,284.9 1478.4,285.3 1478.9,280.0 1479.4,281.7 1479.9,281.4 1480.5,280.3 1481.0,279.1 1481.5,277.9 1482.0,278.2 1482.6,271.2 1483.1,278.0 1483.6,280.2 1484.1,272.2 1484.7,271.1 1485.2,271.8 1485.7,274.6 1486.2,276.2 1486.8,276.9 1487.3,277.4 1487.8,281.8 1488.4,283.4 1488.9,283.3 1489.4,290.6 1489.9,298.1 1490.5,296.1 1491.0,303.7 1491.5,310.9 1492.0,316.6 1492.6,319.9 1493.1,328.3 1493.6,335.0 1494.1,341.6 1494.7,346.3 1495.2,349.3 1495.7,358.6 1496.2,365.6 1496.8,366.5 1497.3,372.8 1497.8,376.3 1498.3,380.7 1498.9,388.5 1499.4,393.5 1499.9,397.0 1500.4,402.8 1501.0,402.9 1501.5,405.2 1502.0,411.2 1502.6,415.7 1503.1,419.4 1503.6,424.1 1504.1,427.8 1504.7,430.7 1505.2,435.3 1505.7,438.1 1506.2,444.0 1506.8,443.9 1507.3,446.5 1507.8,450.8 1508.3,455.1 1508.9,452.5 1509.4,452.3 1509.9,457.9 1510.4,459.4 1511.0,461.5 1511.5,461.1 1512.0,466.2 1512.5,464.4 1513.1,468.9 1513.6,468.4 1514.1,472.2 1514.6,473.4 1515.2,476.6 1515.7,475.8 1516.2,475.7 1516.7,474.6 1517.3,476.2 1517.8,478.8 1518.3,477.3 1518.9,476.9 1519.4,479.9 1519.9,481.2 1520.4,481.8 1521.0,480.2 1521.5,481.5 1522.0,484.5 1522.5,482.0 1523.1,483.8 1523.6,484.5 1524.1,480.6 1524.6,481.6 1525.2,484.7 1525.7,483.3 1526.2,482.5 1526.7,484.9 1527.3,484.0 1527.8,482.6 1528.3,487.5 1528.8,483.5 1529.4,482.1 1529.9,482.0 1530.4,485.1 1530.9,481.2 1531.5,483.0 1532.0,479.6 1532.5,479.0 1533.1,479.2 1533.6,480.5 1534.1,479.6 1534.6,476.2 1535.2,479.1 1535.7,475.8 1536.2,475.2 1536.7,475.9 1537.3,469.8 1537.8,473.5 1538.3,468.6 1538.8,475.9 1539.4,475.6 1539.9,468.3 1540.4,468.2 1540.9,469.2 1541.5,467.8 1542.0,470.6 1542.5,467.3 1543.0,467.2 1543.6,464.8 1544.1,461.9 1544.6,462.9 1545.1,461.6 1545.7,463.0 1546.2,461.8 1546.7,460.1 1547.2,460.2 1547.8,456.4 1548.3,460.0 1548.8,453.8 1549.4,458.8 1549.9,454.1 1550.4,457.1 1550.9,451.6 1551.5,453.7 1552.0,452.3 1552.5,450.7 1553.0,452.5 1553.6,452.4 1554.1,453.5 1554.6,446.1 1555.1,449.0 1555.7,447.9 1556.2,445.9 1556.7,441.0 1557.2,447.4 1557.8,442.6 1558.3,443.0 1558.8,439.9 1559.3,443.3 1559.9,439.3 1560.4,435.6 1560.9,432.9 1561.4,431.6 1562.0,435.2 1562.5,432.2 1563.0,431.3 1563.6,432.5 1564.1,431.4 1564.6,425.8 1565.1,425.6 1565.7,425.1 1566.2,420.5 1566.7,422.9 1567.2,417.9 1567.8,416.9 1568.3,415.1 1568.8,412.0 1569.3,410.7 1569.9,408.5 1570.4,406.6 1570.9,401.3 1571.4,403.7 1572.0,399.2 1572.5,398.0 1573.0,397.9 1573.5,391.7 1574.1,391.0 1574.6,383.1 1575.1,383.0 1575.6,378.4 1576.2,372.9 1576.7,367.9 1577.2,362.7 1577.7,357.6 1578.3,354.7 1578.8,351.1 1579.3,343.1 1579.9,338.5 1580.4,335.9 1580.9,328.7 1581.4,326.8 1582.0,325.7 1582.5,319.6 1583.0,319.7 1583.5,315.4 1584.1,309.5 1584.6,314.5 1585.1,312.5 1585.6,316.4 1586.2,313.4 1586.7,317.4 1587.2,316.7 1587.7,321.2 1588.3,323.4 1588.8,325.4 1589.3,330.8 1589.8,339.9 1590.4,338.9 1590.9,343.5 1591.4,350.5 1591.9,352.6 1592.5,363.2 1593.0,366.9 1593.5,370.2 1594.1,375.4 1594.6,381.1 1595.1,391.5 1595.6,395.9 1596.2,394.7 1596.7,401.4 1597.2,402.0 1597.7,407.3 1598.3,405.8 1598.8,409.4 1599.3,413.0 1599.8,417.2 1600.4,420.2 1600.9,424.0 1601.4,425.8 1601.9,429.2 1602.5,431.8 1603.0,434.7 1603.5,431.3 1604.0,435.6 1604.6,434.5 1605.1,435.8 1605.6,441.3 1606.1,444.0 1606.7,439.3 1607.2,443.7 1607.7,443.9 1608.2,445.7 1608.8,446.0 1609.3,449.8 1609.8,448.8 1610.4,449.9 1610.9,449.5 1611.4,454.5 1611.9,448.7 1612.5,450.2 1613.0,454.7 1613.5,453.2 1614.0,452.1 1614.6,451.4 1615.1,453.1 1615.6,450.8 1616.1,453.9 1616.7,456.4 1617.2,456.2 1617.7,453.5 1618.2,456.3 1618.8,453.5 1619.3,453.3 1619.8,454.3 1620.3,453.5 1620.9,456.0 1621.4,455.8 1621.9,457.1 1622.4,457.2 1623.0,459.2 1623.5,457.3 1624.0,458.5 1624.5,459.3 1625.1,456.0 1625.6,455.3 1626.1,456.8 1626.7,453.3 1627.2,454.0 1627.7,453.7 1628.2,456.9 1628.8,458.5 1629.3,454.3 1629.8,454.7 1630.3,453.8 1630.9,454.3 1631.4,452.5 1631.9,455.4 1632.4,453.3 1633.0,456.1 1633.5,458.6 1634.0,454.6 1634.5,450.5 1635.1,456.5 1635.6,450.9 1636.1,454.0 1636.6,453.1 1637.2,452.0 1637.7,451.3 1638.2,453.4 1638.7,451.0 1639.3,450.0 1639.8,448.8 1640.3,451.5 1640.9,446.5 1641.4,445.3 1641.9,443.9 1642.4,450.9 1643.0,447.4 1643.5,451.0 1644.0,446.1 1644.5,445.3 1645.1,448.2 1645.6,448.6 1646.1,444.7 1646.6,443.4 1647.2,445.3 1647.7,443.4 1648.2,447.1 1648.7,442.6 1649.3,440.1 1649.8,439.2 1650.3,435.5 1650.8,440.1 1651.4,441.4 1651.9,435.2 1652.4,436.5 1652.9,433.9 1653.5,432.2 1654.0,431.6 1654.5,428.5 1655.0,427.3 1655.6,431.8 1656.1,427.2 1656.6,421.7 1657.2,425.1 1657.7,421.0 1658.2,421.6 1658.7,420.9 1659.3,415.5 1659.8,415.2 1660.3,416.3 1660.8,412.6 1661.4,415.6 1661.9,411.9 1662.4,406.1 1662.9,405.3 1663.5,404.9 1664.0,399.4 1664.5,397.1 1665.0,392.7 1665.6,390.8 1666.1,390.7 1666.6,388.6 1667.1,385.3 1667.7,383.0 1668.2,377.1 1668.7,374.3 1669.2,371.7 1669.8,370.5 1670.3,368.6 1670.8,363.3 1671.4,362.6 1671.9,358.4 1672.4,359.0 1672.9,353.5 1673.5,346.7 1674.0,348.4 1674.5,346.3 1675.0,340.5 1675.6,333.8 1676.1,331.1 1676.6,331.9 1677.1,329.3 1677.7,325.8 1678.2,324.6 1678.7,319.8 1679.2,317.7 1679.8,317.2 1680.3,312.6 1680.8,309.1 1681.3,307.9 1681.9,307.9 1682.4,303.3 1682.9,300.8 1683.4,304.5 1684.0,307.4 1684.5,308.2 1685.0,312.2 1685.5,315.9 1686.1,314.2 1686.6,321.6 1687.1,323.6 1687.7,327.4 1688.2,331.8 1688.7,334.5 1689.2,336.8 1689.8,339.1 1690.3,344.5 1690.8,349.7 1691.3,355.9 1691.9,357.3 1692.4,362.7 1692.9,364.7 1693.4,366.2 1694.0,371.4 1694.5,375.9 1695.0,380.6 1695.5,382.9 1696.1,386.3 1696.6,392.0 1697.1,394.8 1697.6,395.7 1698.2,404.4 1698.7,404.8 1699.2,409.1 1699.7,406.6 1700.3,411.2 1700.8,414.2 1701.3,417.3 1701.9,420.3 1702.4,423.1 1702.9,429.7 1703.4,428.9 1704.0,431.0 1704.5,437.8 1705.0,436.2 1705.5,439.3 1706.1,444.8 1706.6,443.8 1707.1,444.6 1707.6,446.2 1708.2,445.5 1708.7,449.9 1709.2,449.0 1709.7,449.2 1710.3,449.4 1710.8,451.8 1711.3,453.5 1711.8,452.8 1712.4,459.3 1712.9,454.6 1713.4,457.3 1713.9,459.5 1714.5,458.1 1715.0,461.2 1715.5,461.9 1716.0,458.8 1716.6,460.0 1717.1,457.3 1717.6,460.7 1718.2,461.8 1718.7,461.4 1719.2,456.4 1719.7,460.1 1720.3,461.6 1720.8,462.5 1721.3,462.8 1721.8,461.1 1722.4,460.0 1722.9,458.7 1723.4,458.8 1723.9,460.7 1724.5,462.6 1725.0,463.1 1725.5,466.1 1726.0,463.7 1726.6,460.9 1727.1,462.5 1727.6,461.3 1728.1,464.5 1728.7,460.0 1729.2,461.1 1729.7,461.4 1730.2,460.6 1730.8,465.7 1731.3,462.3 1731.8,462.8 1732.4,457.4 1732.9,461.2 1733.4,461.7 1733.9,458.9 1734.5,462.6 1735.0,457.6 1735.5,461.2 1736.0,459.4 1736.6,460.5 1737.1,456.5 1737.6,461.9 1738.1,455.6 1738.7,458.1 1739.2,455.8 1739.7,457.6 1740.2,454.3 1740.8,453.8 1741.3,452.5 1741.8,452.4 1742.3,451.3 1742.9,450.0 1743.4,452.1 1743.9,453.1 1744.4,452.8 1745.0,448.3 1745.5,449.9 1746.0,446.5 1746.5,447.9 1747.1,449.4 1747.6,445.1 1748.1,442.5 1748.7,446.1 1749.2,447.0 1749.7,446.3 1750.2,441.7 1750.8,443.5 1751.3,442.0 1751.8,438.7 1752.3,438.9 1752.9,437.6 1753.4,437.8 1753.9,436.8 1754.4,434.1 1755.0,433.0 1755.5,431.0 1756.0,432.0 1756.5,429.2 1757.1,427.9 1757.6,427.2 1758.1,424.9 1758.6,422.6 1759.2,422.8 1759.7,421.6 1760.2,422.3 1760.7,418.3 1761.3,417.7 1761.8,416.7 1762.3,416.3 1762.9,412.1 1763.4,406.8 1763.9,409.6 1764.4,408.9 1765.0,405.4 1765.5,404.6 1766.0,400.4 1766.5,399.1 1767.1,396.2 1767.6,391.7 1768.1,388.8 1768.6,386.7 1769.2,385.2 1769.7,380.3 1770.2,380.2 1770.7,373.7 1771.3,373.1 1771.8,369.5 1772.3,364.1 1772.8,360.7 1773.4,360.5 1773.9,354.5 1774.4,349.4 1774.9,348.4 1775.5,347.1 1776.0,338.7 1776.5,334.7 1777.0,329.9 1777.6,326.7 1778.1,324.5 1778.6,322.6 1779.2,318.6 1779.7,318.7 1780.2,316.9 1780.7,317.8 1781.3,317.1 1781.8,322.0 1782.3,322.4 1782.8,330.3 1783.4,327.9 1783.9,330.8 1784.4,333.8 1784.9,332.6 1785.5,336.6 1786.0,339.9 1786.5,342.9 1787.0,342.4 1787.6,348.9 1788.1,353.3 1788.6,360.3 1789.1,360.5 1789.7,366.2 1790.2,372.1 1790.7,376.0 1791.2,383.2 1791.8,382.9 1792.3,390.6 1792.8,391.0 1793.4,397.8 1793.9,402.4 1794.4,404.9 1794.9,409.8 1795.5,416.9 1796.0,419.4 1796.5,422.5 1797.0,428.7 1797.6,435.4 1798.1,435.5 1798.6,439.2 1799.1,440.7 1799.7,441.7 1800.2,444.1 1800.7,446.7 1801.2,451.8 1801.8,449.0 1802.3,451.2 1802.8,452.7 1803.3,452.8 1803.9,450.4 1804.4,457.9 1804.9,459.6 1805.4,456.1 1806.0,460.3 1806.5,457.3 1807.0,462.9 1807.5,463.0 1808.1,461.6 1808.6,462.6" fill="none" stroke="#9400d3" stroke-width="1.3"/><polyline points="1440.5,523.6 1442.0,468.3 1443.4,442.0 1444.9,423.3 1446.4,412.2 1447.9,401.2 1449.3,394.8 1450.8,388.5 1452.3,383.0 1453.8,378.2 1455.2,373.5 1456.7,370.7 1458.2,367.8 1459.6,365.0 1461.1,362.1 1462.6,359.3 1464.1,357.4 1465.5,355.5 1467.0,353.6 1468.5,351.7 1469.9,349.8 1471.4,348.2 1472.9,346.6 1474.4,345.1 1475.8,343.5 1477.3,341.9 1478.8,340.3 1480.3,338.7 1481.7,337.2 1483.2,335.6 1484.7,334.0 1486.1,333.1 1487.6,332.1 1489.1,331.2 1490.6,330.2 1492.0,329.3 1493.5,330.5 1495.0,331.8 1496.5,333.1 1497.9,334.3 1499.4,335.6 1500.9,337.5 1502.3,339.4 1503.8,341.3 1505.3,343.2 1506.8,345.1 1508.2,347.3 1509.7,349.5 1511.2,351.7 1512.6,353.9 1514.1,356.1 1515.6,358.3 1517.1,360.5 1518.5,362.8 1520.0,365.0 1521.5,367.2 1523.0,369.1 1524.4,371.0 1525.9,372.9 1527.4,374.8 1528.8,376.7 1530.3,378.2 1531.8,379.8 1533.3,381.4 1534.7,383.0 1536.2,384.6 1537.7,385.8 1539.2,387.1 1540.6,388.4 1542.1,389.6 1543.6,390.9 1545.0,391.7 1546.5,392.5 1548.0,393.2 1549.5,394.0 1550.9,394.8 1552.4,395.5 1553.9,396.1 1555.3,396.7 1556.8,397.4 1558.3,398.0 1559.8,398.2 1561.2,398.4 1562.7,398.6 1564.2,398.8 1565.7,399.0 1567.1,399.3 1568.6,399.5 1570.1,399.2 1571.5,398.4 1573.0,397.6 1574.5,396.8 1576.0,396.0 1577.4,395.1 1578.9,394.2 1580.4,393.2 1581.9,392.3 1583.3,391.4 1584.8,390.7 1586.3,390.4 1587.7,390.1 1589.2,389.8 1590.7,389.5 1592.2,389.5 1593.6,389.9 1595.1,390.4 1596.6,390.8 1598.0,391.2 1599.5,391.6 1601.0,392.0 1602.5,392.5 1603.9,393.0 1605.4,393.6 1606.9,394.1 1608.4,394.7 1609.8,395.2 1611.3,395.8 1612.8,396.3 1614.2,396.9 1615.7,397.4 1617.2,398.0 1618.7,398.5 1620.1,398.9 1621.6,399.4 1623.1,399.9 1624.5,400.4 1626.0,400.8 1627.5,401.3 1629.0,401.8 1630.4,402.3 1631.9,402.7 1633.4,403.1 1634.9,403.5 1636.3,403.9 1637.8,404.3 1639.3,404.7 1640.7,405.1 1642.2,405.5 1643.7,405.9 1645.2,406.3 1646.6,406.7 1648.1,406.8 1649.6,407.0 1651.1,407.2 1652.5,407.3 1654.0,407.5 1655.5,407.6 1656.9,407.8 1658.4,407.9 1659.9,408.1 1661.4,408.3 1662.8,408.0 1664.3,407.8 1665.8,407.6 1667.2,407.4 1668.7,407.2 1670.2,407.0 1671.7,406.8 1673.1,406.4 1674.6,405.9 1676.1,405.4 1677.6,404.8 1679.0,404.3 1680.5,403.8 1682.0,403.3 1683.4,402.7 1684.9,402.4 1686.4,402.1 1687.9,401.8 1689.3,401.5 1690.8,401.2 1692.3,400.8 1693.8,400.5 1695.2,400.5 1696.7,400.7 1698.2,400.9 1699.6,401.1 1701.1,401.3 1702.6,401.5 1704.1,401.7 1705.5,401.9 1707.0,402.3 1708.5,402.6 1709.9,402.9 1711.4,403.2 1712.9,403.5 1714.4,403.8 1715.8,404.2 1717.3,404.5 1718.8,404.8 1720.3,405.1 1721.7,405.3 1723.2,405.6 1724.7,405.8 1726.1,406.0 1727.6,406.3 1729.1,406.5 1730.6,406.8 1732.0,407.0 1733.5,407.2 1735.0,407.5 1736.5,405.9 1737.9,406.5 1739.4,407.1 1740.9,407.7 1742.3,408.3 1743.8,409.0 1745.3,409.6 1746.8,410.2 1748.2,410.8 1749.7,411.4 1751.2,412.1 1752.6,412.7 1754.1,413.3 1755.6,413.9 1757.1,414.6 1758.5,415.2 1760.0,415.8 1761.5,416.3 1763.0,416.6 1764.4,416.9 1765.9,417.3 1767.4,417.6 1768.8,417.9 1770.3,418.2 1771.8,418.5 1773.3,418.5 1774.7,418.5 1776.2,418.5 1777.7,418.5 1779.2,418.5 1780.6,418.5 1782.1,418.5 1783.6,418.5 1785.0,418.5 1786.5,418.5 1788.0,418.6 1789.5,418.6 1790.9,418.7 1792.4,418.7 1793.9,418.8 1795.3,418.8 1796.8,418.9 1798.3,419.0 1799.8,419.0 1801.2,419.1 1802.7,419.1 1804.2,419.2 1805.7,419.2 1807.1,419.3 1808.6,419.3" fill="none" stroke="#009e73" stroke-width="2.8"/></svg>
<div style="position:absolute;left:1350px;top:612px;width:501px;height:229px;background:radial-gradient(ellipse at 95% 0%,#3f4846 0%,#333b39 45%,#252b2a 100%);"></div>
<div class="t" style="left:1350px;top:661.5px;width:501px;text-align:center;font-size:23.5px;color:#ececec;letter-spacing:0.2px;">Force Coefficients</div>
<div class="t" style="left:1350px;top:694.0px;width:501px;text-align:center;font-size:14px;color:#e4e4e4;">#1: 2:blade3-suctionSide1, 2:blade2-pressureSide2, 2:blade1-</div>
<div class="t" style="left:1350px;top:714.9px;width:501px;text-align:center;font-size:14px;color:#e4e4e4;">pressureSide1, 2:blade2-suctionSide1, 2:blade3-cap, 2:blade1-</div>
<div class="t" style="left:1350px;top:735.8px;width:501px;text-align:center;font-size:14px;color:#e4e4e4;">suctionSide1, 2:blade3-pressureSide2, 2:blade3-pressureSide1,</div>
<div class="t" style="left:1350px;top:756.7px;width:501px;text-align:center;font-size:14px;color:#e4e4e4;">2:blade2-cap, 2:blade2-pressureSide1, 2:blade1-cap, 2:blade2-</div>
<div class="t" style="left:1350px;top:777.6px;width:501px;text-align:center;font-size:14px;color:#e4e4e4;">suctionSide2, 2:blade3-suctionSide2, 2:blade1-suctionSide2, 2:blade1-</div>
<div class="t" style="left:1350px;top:798.5px;width:501px;text-align:center;font-size:14px;color:#e4e4e4;">pressureSide2</div>
<svg style="position:absolute;left:1592px;top:852px;" width="17" height="2" viewBox="0 0 17 2"><rect x="0" y="0" width="1" height="1" fill="#aaa"/><rect x="3" y="0" width="1" height="1" fill="#aaa"/><rect x="6" y="0" width="1" height="1" fill="#aaa"/><rect x="9" y="0" width="1" height="1" fill="#aaa"/><rect x="12" y="0" width="1" height="1" fill="#aaa"/><rect x="15" y="0" width="1" height="1" fill="#aaa"/></svg>
<div style="position:absolute;left:1338px;top:852px;width:538px;height:1px;background:#e6e2de;"></div>
<div style="position:absolute;left:1341px;top:859px;width:1px;height:12px;background:#ccc;"></div>
<svg style="position:absolute;left:1345px;top:856px;" width="18" height="18" viewBox="0 0 18 18"><rect x="2.5" y="2.5" width="10" height="10" fill="none" stroke="#555" stroke-dasharray="1.2,1.2"/><path d="M9 9 L14 14 L12 14" fill="#777" stroke="#666"/><path d="M6 3 L6 8 M3.5 5.5 L8.5 5.5" stroke="#1a9a1a" stroke-width="1.8"/></svg>
<svg style="position:absolute;left:1365px;top:856px;" width="18" height="18" viewBox="0 0 18 18"><rect x="2.5" y="2.5" width="10" height="10" fill="none" stroke="#555" stroke-dasharray="1.2,1.2"/><path d="M9 9 L14 14 L12 14" fill="#777" stroke="#666"/><path d="M4 5 L9 5" stroke="#e00" stroke-width="1.8"/></svg>
<svg style="position:absolute;left:1385px;top:856px;" width="18" height="18" viewBox="0 0 18 18"><rect x="2.5" y="2.5" width="10" height="10" fill="none" stroke="#555" stroke-dasharray="1.2,1.2"/><path d="M9 9 L14 14 L12 14" fill="#777" stroke="#666"/><path d="M6 2 L6 6 M4 4 L8 4" stroke="#1a9a1a" stroke-width="1.6"/><path d="M4 8 L9 8" stroke="#e00" stroke-width="1.6"/></svg>
<div style="position:absolute;left:1407px;top:859px;width:1px;height:12px;background:#ccc;"></div>
<svg style="position:absolute;left:1410px;top:856px;" width="18" height="18" viewBox="0 0 18 18"><path d="M2 2 L8 5 L14 2 L10 8 L14 14 L8 11 L2 14 Z" fill="none" stroke="#5a8a55" stroke-dasharray="2,1"/><circle cx="5" cy="6" r="1" fill="#e00"/><circle cx="8" cy="9" r="1" fill="#e00"/><circle cx="11" cy="6" r="1" fill="#e00"/></svg>
<svg style="position:absolute;left:1431px;top:856px;" width="18" height="18" viewBox="0 0 18 18"><rect x="2.5" y="2.5" width="10" height="10" fill="none" stroke="#555" stroke-dasharray="1.2,1.2"/><path d="M9 9 L14 14 L12 14" fill="#777" stroke="#666"/></svg>
<div class="t" style="left:1668.5px;top:857.2px;font-size:13px;color:#000;font-weight:normal;letter-spacing:0.05px;">LineChartView1</div>
<div style="position:absolute;left:1773px;top:856px;width:19px;height:18px;box-sizing:border-box;border:1px solid #b0aca6;border-radius:3px;background:linear-gradient(#fbfaf9,#ebe8e5);"></div>
<svg style="position:absolute;left:1773px;top:856px;" width="19" height="16" viewBox="0 0 19 16"><defs><linearGradient id="vbg" x1="0" y1="0" x2="1" y2="0"><stop offset="0" stop-color="#c8d0f0"/><stop offset="1" stop-color="#f4f6fc"/></linearGradient></defs><rect x="5.25" y="3.75" width="8.5" height="8.5" fill="url(#vbg)" stroke="#000" stroke-width="1.5"/><path d="M9.5 3.75 L9.5 12.25" stroke="#000" stroke-width="1.2"/></svg>
<div style="position:absolute;left:1794px;top:856px;width:19px;height:18px;box-sizing:border-box;border:1px solid #b0aca6;border-radius:3px;background:linear-gradient(#fbfaf9,#ebe8e5);"></div>
<svg style="position:absolute;left:1794px;top:856px;" width="19" height="16" viewBox="0 0 19 16"><rect x="5.25" y="3.75" width="8.5" height="8.5" fill="url(#vbg)" stroke="#000" stroke-width="1.5"/><path d="M5.25 8 L13.75 8" stroke="#000" stroke-width="1.2"/></svg>
<div style="position:absolute;left:1815px;top:856px;width:19px;height:18px;box-sizing:border-box;border:1px solid #b0aca6;border-radius:3px;background:linear-gradient(#fbfaf9,#ebe8e5);"></div>
<svg style="position:absolute;left:1815px;top:856px;" width="19" height="16" viewBox="0 0 19 16"><rect x="5.25" y="3.75" width="8.5" height="8.5" fill="#f6f6f4" stroke="#000" stroke-width="1.5"/><path d="M5 4.5 L14 4.5" stroke="#000" stroke-width="2"/></svg>
<div style="position:absolute;left:1836px;top:856px;width:19px;height:18px;box-sizing:border-box;border:1px solid #b0aca6;border-radius:3px;background:linear-gradient(#fbfaf9,#ebe8e5);"></div>
<svg style="position:absolute;left:1836px;top:856px;" width="19" height="16" viewBox="0 0 19 16"><rect x="5" y="3.5" width="9" height="9" rx="2.2" fill="none" stroke="#8a8884" stroke-width="1"/><rect x="6.8" y="7" width="3.5" height="3.5" fill="none" stroke="#8a8884" stroke-width="1"/><rect x="8.8" y="5.2" width="3.5" height="3.5" fill="none" stroke="#8a8884" stroke-width="1"/></svg>
<div style="position:absolute;left:1857px;top:856px;width:19px;height:18px;box-sizing:border-box;border:1px solid #b0aca6;border-radius:3px;background:linear-gradient(#fbfaf9,#ebe8e5);"></div>
<svg style="position:absolute;left:1857px;top:856px;" width="19" height="16" viewBox="0 0 19 16"><rect x="5" y="3.5" width="9" height="9" rx="2.2" fill="none" stroke="#8a8884" stroke-width="1"/><path d="M7 5.5 L12 10.5 M12 5.5 L7 10.5" stroke="#6a6864" stroke-width="1.6"/></svg>
<div style="position:absolute;left:1340px;top:878px;width:536px;height:123px;background:#fff;"></div>
<svg style="position:absolute;left:0;top:850px;" width="1876" height="160" viewBox="0 850 1876 160"><path d="M1363.6 972 L1363.6 977" stroke="#000" stroke-width="1.3"/><text x="1363.6" y="988" text-anchor="middle" font-family="Liberation Sans" font-size="12" fill="#222">0</text><path d="M1437.1 899 L1437.1 972" stroke="#ececec" stroke-width="1"/><path d="M1437.1 972 L1437.1 977" stroke="#000" stroke-width="1.3"/><text x="1437.1" y="988" text-anchor="middle" font-family="Liberation Sans" font-size="12" fill="#222">1</text><path d="M1510.6 899 L1510.6 972" stroke="#ececec" stroke-width="1"/><path d="M1510.6 972 L1510.6 977" stroke="#000" stroke-width="1.3"/><text x="1510.6" y="988" text-anchor="middle" font-family="Liberation Sans" font-size="12" fill="#222">2</text><path d="M1584.1 899 L1584.1 972" stroke="#ececec" stroke-width="1"/><path d="M1584.1 972 L1584.1 977" stroke="#000" stroke-width="1.3"/><text x="1584.1" y="988" text-anchor="middle" font-family="Liberation Sans" font-size="12" fill="#222">3</text><path d="M1657.6 899 L1657.6 972" stroke="#ececec" stroke-width="1"/><path d="M1657.6 972 L1657.6 977" stroke="#000" stroke-width="1.3"/><text x="1657.6" y="988" text-anchor="middle" font-family="Liberation Sans" font-size="12" fill="#222">4</text><path d="M1731.1 899 L1731.1 972" stroke="#ececec" stroke-width="1"/><path d="M1731.1 972 L1731.1 977" stroke="#000" stroke-width="1.3"/><text x="1731.1" y="988" text-anchor="middle" font-family="Liberation Sans" font-size="12" fill="#222">5</text><path d="M1804.6 899 L1804.6 972" stroke="#ececec" stroke-width="1"/><path d="M1804.6 972 L1804.6 977" stroke="#000" stroke-width="1.3"/><text x="1804.6" y="988" text-anchor="middle" font-family="Liberation Sans" font-size="12" fill="#222">6</text><path d="M1363 917.5 L1854 917.5" stroke="#ececec" stroke-width="1"/><path d="M1363.3 899 L1363.3 973" stroke="#000" stroke-width="1.5"/><path d="M1358 972.5 L1854 972.5" stroke="#000" stroke-width="1.5"/><path d="M1358 917.5 L1363 917.5" stroke="#000" stroke-width="1.3"/><text x="1356" y="922" text-anchor="end" font-family="Liberation Sans" font-size="12" fill="#222">5</text><text x="1356" y="977" text-anchor="end" font-family="Liberation Sans" font-size="12" fill="#222">0</text></svg>
<div style="position:absolute;left:1335px;top:1003px;width:541px;height:1px;background:#b8b3ad;"></div>
<div class="t" style="left:334px;top:1012.7px;font-size:13px;color:#000;font-weight:normal;letter-spacing:0.05px;">Output Messages</div>
<svg style="position:absolute;left:755px;top:1014px;" width="26" height="12" viewBox="0 0 26 12"><rect x="0.5" y="0.5" width="11" height="11" rx="2" fill="#f4f2ef" stroke="#8a8680"/><rect x="2.5" y="4.5" width="5" height="5" fill="none" stroke="#777"/><rect x="4.5" y="2.5" width="5" height="5" fill="none" stroke="#777"/><rect x="14.5" y="0.5" width="11" height="11" rx="2" fill="#f4f2ef" stroke="#8a8680"/><path d="M17 3 L23 9 M23 3 L17 9" stroke="#555" stroke-width="1.8"/></svg>
<div style="position:absolute;left:339px;top:1039px;width:434px;height:70px;box-sizing:border-box;border:1px solid #b8b3ad;background:#fff;"></div>
<svg style="position:absolute;left:378px;top:1041px;" width="8" height="12" viewBox="0 0 8 12"><path d="M1 1 L7 6 L1 11 Z" fill="#444"/></svg>
<div class="t" style="left:395.5px;top:1038.7px;font-size:13px;color:#1e9a1e;font-weight:normal;letter-spacing:0.05px;">Case setup OK!</div>
<div style="position:absolute;left:339px;top:1119px;width:14px;height:14px;box-sizing:border-box;border:1px solid #b5b0aa;border-radius:2px;background:#fff;"></div>
<div class="t" style="left:358.5px;top:1117.7px;font-size:13px;color:#000;font-weight:normal;letter-spacing:0.05px;">Show full messages</div>
<div style="position:absolute;left:693px;top:1115px;width:80px;height:22px;box-sizing:border-box;border:1px solid #b5b0aa;border-radius:3px;background:linear-gradient(#fdfcfb,#ebe8e5);"></div>
<div class="t" style="left:718px;top:1118.2px;font-size:13px;color:#000;font-weight:normal;letter-spacing:0.05px;">Clear</div>
<svg style="position:absolute;left:784px;top:1070px;" width="2" height="17" viewBox="0 0 2 17"><rect x="0" y="0" width="1" height="1" fill="#aaa"/><rect x="0" y="3" width="1" height="1" fill="#aaa"/><rect x="0" y="6" width="1" height="1" fill="#aaa"/><rect x="0" y="9" width="1" height="1" fill="#aaa"/><rect x="0" y="12" width="1" height="1" fill="#aaa"/><rect x="0" y="15" width="1" height="1" fill="#aaa"/></svg>
<div class="t" style="left:792px;top:1012.7px;font-size:13px;color:#000;font-weight:normal;letter-spacing:0.05px;">Turbomachinery CFD Output</div>
<svg style="position:absolute;left:1852px;top:1014px;" width="26" height="12" viewBox="0 0 26 12"><rect x="0.5" y="0.5" width="11" height="11" rx="2" fill="#f4f2ef" stroke="#8a8680"/><rect x="2.5" y="4.5" width="5" height="5" fill="none" stroke="#777"/><rect x="4.5" y="2.5" width="5" height="5" fill="none" stroke="#777"/><rect x="14.5" y="0.5" width="11" height="11" rx="2" fill="#f4f2ef" stroke="#8a8680"/><path d="M17 3 L23 9 M23 3 L17 9" stroke="#555" stroke-width="1.8"/></svg>
<div style="position:absolute;left:797px;top:1039px;width:264px;height:22px;box-sizing:border-box;border:1px solid #b5b0aa;border-radius:3px;background:linear-gradient(#fdfcfb,#ebe8e5);"></div>
<div class="t" style="left:804px;top:1042.2px;font-size:13px;color:#000;font-weight:normal;letter-spacing:0.05px;">TCFDManager1</div>
<svg style="position:absolute;left:1044px;top:1046px;" width="12" height="8" viewBox="0 0 12 8"><path d="M1 1 L6 6 L11 1 Z" fill="#333"/></svg>
<div style="position:absolute;left:1067px;top:1039px;width:264px;height:22px;box-sizing:border-box;border:1px solid #b5b0aa;border-radius:3px;background:linear-gradient(#fdfcfb,#ebe8e5);"></div>
<div class="t" style="left:1073px;top:1042.2px;font-size:13px;color:#000;font-weight:normal;letter-spacing:0.05px;">Solver output</div>
<svg style="position:absolute;left:1314px;top:1046px;" width="12" height="8" viewBox="0 0 12 8"><path d="M1 1 L6 6 L11 1 Z" fill="#333"/></svg>
<div style="position:absolute;left:1337px;top:1039px;width:263px;height:22px;box-sizing:border-box;border:1px solid #b5b0aa;border-radius:3px;background:linear-gradient(#fdfcfb,#ebe8e5);"></div>
<div class="t" style="left:1407px;top:1042.2px;font-size:13px;color:#000;font-weight:normal;letter-spacing:0.05px;">Save output to file...</div>
<div style="position:absolute;left:1606px;top:1039px;width:264px;height:22px;box-sizing:border-box;border:1px solid #b5b0aa;border-radius:3px;background:linear-gradient(#fdfcfb,#ebe8e5);"></div>
<div class="t" style="left:1697px;top:1042.2px;font-size:13px;color:#000;font-weight:normal;letter-spacing:0.05px;">Clean window</div>
<div style="position:absolute;left:797px;top:1067px;width:1073px;height:70px;box-sizing:border-box;border:1px solid #b8b3ad;background:#fff;"></div>
</body></html>
